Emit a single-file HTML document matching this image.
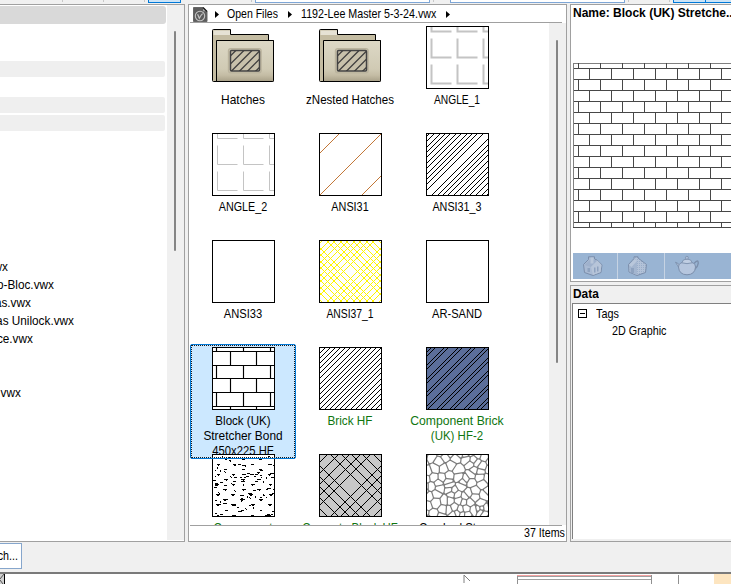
<!DOCTYPE html>
<html><head><meta charset="utf-8"><style>
html,body{margin:0;padding:0;}
body{width:731px;height:584px;overflow:hidden;position:relative;background:#f0f0f0;font-family:"Liberation Sans", sans-serif;}
.lt,.bc,.lb,.nm{position:absolute;white-space:nowrap;line-height:14px;}
.lt{font-size:12.4px;color:#000;transform:scaleX(0.95);transform-origin:100% 0;}
.bc{font-size:12.4px;color:#000;transform:scaleX(0.85);transform-origin:0 0;}
.lb{font-size:12.4px;width:120px;text-align:center;color:#000;transform-origin:60px 0;}
.nm{font-size:12.4px;font-weight:bold;color:#000;transform:scaleX(0.97);transform-origin:0 0;}
</style></head><body>
<div style="position:absolute;left:62px;top:0px;width:1px;height:2px;background:#c8c8c8"></div>
<div style="position:absolute;left:103px;top:0px;width:1px;height:2px;background:#c8c8c8"></div>
<div style="position:absolute;left:144px;top:0px;width:1px;height:2px;background:#c8c8c8"></div>
<div style="position:absolute;left:251px;top:0px;width:1px;height:2px;background:#c8c8c8"></div>
<div style="position:absolute;left:433px;top:0px;width:1px;height:2px;background:#c8c8c8"></div>
<div style="position:absolute;left:628px;top:0px;width:1px;height:2px;background:#c8c8c8"></div>
<div style="position:absolute;left:669px;top:0px;width:1px;height:2px;background:#c8c8c8"></div>
<div style="position:absolute;left:148px;top:-1px;width:31px;height:3px;background:#cce4f7;border:1px solid #0078d7;border-top:none"></div>
<div style="position:absolute;left:255px;top:-1px;width:173px;height:3px;background:#fff;border:1px solid #7ea6d6;border-top:none"></div>
<div style="position:absolute;left:450px;top:-1px;width:173px;height:3px;background:#fff;border:1px solid #7ea6d6;border-top:none"></div>
<div style="position:absolute;left:673px;top:-1px;width:31px;height:3px;background:#cce4f7;border:1px solid #0078d7;border-top:none"></div>
<div style="position:absolute;left:705px;top:-1px;width:31px;height:3px;background:#cce4f7;border:1px solid #0078d7;border-top:none"></div>
<div style="position:absolute;left:-2px;top:4px;width:187px;height:538px;background:#fff;border:1px solid #a0a0a0;box-sizing:border-box"></div>
<div style="position:absolute;left:0px;top:6px;width:166px;height:18px;background:#d9d9d9;border-radius:0 3px 3px 0"></div>
<div style="position:absolute;left:0px;top:61px;width:165px;height:16px;background:#efefef;border-radius:0 2px 2px 0"></div>
<div style="position:absolute;left:0px;top:97px;width:165px;height:16px;background:#efefef;border-radius:0 2px 2px 0"></div>
<div style="position:absolute;left:0px;top:115px;width:165px;height:16px;background:#efefef;border-radius:0 2px 2px 0"></div>
<div style="position:absolute;left:167px;top:5px;width:17px;height:535px;background:#f0f0f0"></div>
<div style="position:absolute;left:174px;top:31px;width:2px;height:220px;background:#858585;border-radius:1px"></div>
<div class="lt" style="right:723px;top:260px">.vwx</div>
<div class="lt" style="right:677px;top:278px">o-Bloc.vwx</div>
<div class="lt" style="right:700px;top:296px">as.vwx</div>
<div class="lt" style="right:657px;top:314px">as Unilock.vwx</div>
<div class="lt" style="right:698px;top:332px">ce.vwx</div>
<div class="lt" style="right:710px;top:386px">.vwx</div>
<div style="position:absolute;left:188px;top:4px;width:379px;height:538px;background:#fff;border:1px solid #a0a0a0;box-sizing:border-box"></div>
<div style="position:absolute;left:190px;top:22px;width:372px;height:1px;background:#a0a0a0"></div>
<svg style="position:absolute;left:193px;top:7px" width="15" height="15" viewBox="0 0 15 15">
<path d="M0.5 0.5 H10 L14 4.5 V14.5 H0.5 Z" fill="#5c5c5c" stroke="#666" stroke-width="1"/>
<path d="M10 0.8 V4.2 H13.6 Z" fill="#a8a8a8"/>
<path d="M10 0.5 L14 4.5" stroke="#1a1a1a" stroke-width="1.2"/>
<circle cx="7" cy="9" r="4.7" fill="none" stroke="#c4c4c4" stroke-width="1.1"/>
<path d="M4.6 7.2 L6.3 11.3 Q7.5 8.5 9.6 6.6" fill="none" stroke="#c4c4c4" stroke-width="1.2"/></svg>
<svg style="position:absolute;left:215px;top:11px" width="5" height="8" viewBox="0 0 5 8"><path d="M0 0 L4 3.5 L0 7 Z" fill="#000"/></svg>
<svg style="position:absolute;left:288px;top:11px" width="5" height="8" viewBox="0 0 5 8"><path d="M0 0 L4 3.5 L0 7 Z" fill="#000"/></svg>
<svg style="position:absolute;left:446px;top:11px" width="5" height="8" viewBox="0 0 5 8"><path d="M0 0 L4 3.5 L0 7 Z" fill="#000"/></svg>
<div class="bc" style="left:227px;top:7px;">Open Files</div>
<div class="bc" style="left:301px;top:7px;transform:scaleX(0.863)">1192-Lee Master 5-3-24.vwx</div>
<div style="position:absolute;left:549px;top:23px;width:17px;height:502px;background:#f0f0f0"></div>
<div style="position:absolute;left:556px;top:40px;width:2px;height:323px;background:#858585;border-radius:1px"></div>
<div style="position:absolute;left:189px;top:23px;width:360px;height:502px;overflow:hidden">
<div style="position:absolute;left:1px;top:321px;width:106px;height:115px;background:#cce8ff;border-radius:2px"></div>
<svg style="position:absolute;left:23px;top:3px" width="63" height="63" viewBox="0 0 63 63">
<defs><linearGradient id="fg0" x1="0" y1="0" x2="0" y2="1"><stop offset="0" stop-color="#ddd8c6"/><stop offset="0.7" stop-color="#d0cab4"/><stop offset="0.85" stop-color="#c4bca4"/><stop offset="1" stop-color="#a8a088"/></linearGradient></defs>
<path d="M0.5 4.5 Q0.5 3.5 1.5 3.5 H18.5 V8.5 H56.5 V14.5 H61.5 V54.5 Q61.5 55.5 60.5 55.5 H1.5 Q0.5 55.5 0.5 54.5 Z" fill="#c4bca2" stroke="#000" stroke-width="1"/>
<path d="M1.5 4.5 H18 V9 H1.5 Z" fill="#e6e2d4"/>
<path d="M4.5 14.5 H61.5 V54.5 Q61.5 55.5 60.5 55.5 H4.5 Z" fill="url(#fg0)" stroke="#000" stroke-width="1"/>
<rect x="15.8" y="22" width="34" height="25.5" rx="3" fill="#bab39d"/><rect x="17" y="23.2" width="31.6" height="23.1" rx="2" fill="#c9c2ad"/>
<rect x="18.5" y="24.5" width="29" height="20.5" rx="1" fill="#c8c1ab" stroke="#444" stroke-width="1.5"/>
<clipPath id="fc0"><rect x="18.5" y="24.5" width="29" height="20.5"/></clipPath>
<g clip-path="url(#fc0)" stroke="#3c3c3c" stroke-width="1.3">
<line x1="-1.7" y1="50" x2="28.3" y2="20"/><line x1="6.4" y1="50" x2="36.4" y2="20"/><line x1="14.5" y1="50" x2="44.5" y2="20"/><line x1="22.6" y1="50" x2="52.6" y2="20"/><line x1="30.7" y1="50" x2="60.7" y2="20"/><line x1="38.8" y1="50" x2="68.8" y2="20"/></g>
</svg>
<div class="lb" style="left:-6.300000000000011px;top:70px;color:#000;transform:scaleX(0.964)">Hatches</div>
<svg style="position:absolute;left:130px;top:3px" width="63" height="63" viewBox="0 0 63 63">
<defs><linearGradient id="fg1" x1="0" y1="0" x2="0" y2="1"><stop offset="0" stop-color="#ddd8c6"/><stop offset="0.7" stop-color="#d0cab4"/><stop offset="0.85" stop-color="#c4bca4"/><stop offset="1" stop-color="#a8a088"/></linearGradient></defs>
<path d="M0.5 4.5 Q0.5 3.5 1.5 3.5 H18.5 V8.5 H56.5 V14.5 H61.5 V54.5 Q61.5 55.5 60.5 55.5 H1.5 Q0.5 55.5 0.5 54.5 Z" fill="#c4bca2" stroke="#000" stroke-width="1"/>
<path d="M1.5 4.5 H18 V9 H1.5 Z" fill="#e6e2d4"/>
<path d="M4.5 14.5 H61.5 V54.5 Q61.5 55.5 60.5 55.5 H4.5 Z" fill="url(#fg1)" stroke="#000" stroke-width="1"/>
<rect x="15.8" y="22" width="34" height="25.5" rx="3" fill="#bab39d"/><rect x="17" y="23.2" width="31.6" height="23.1" rx="2" fill="#c9c2ad"/>
<rect x="18.5" y="24.5" width="29" height="20.5" rx="1" fill="#c8c1ab" stroke="#444" stroke-width="1.5"/>
<clipPath id="fc1"><rect x="18.5" y="24.5" width="29" height="20.5"/></clipPath>
<g clip-path="url(#fc1)" stroke="#3c3c3c" stroke-width="1.3">
<line x1="-1.7" y1="50" x2="28.3" y2="20"/><line x1="6.4" y1="50" x2="36.4" y2="20"/><line x1="14.5" y1="50" x2="44.5" y2="20"/><line x1="22.6" y1="50" x2="52.6" y2="20"/><line x1="30.7" y1="50" x2="60.7" y2="20"/><line x1="38.8" y1="50" x2="68.8" y2="20"/></g>
</svg>
<div class="lb" style="left:100.69999999999999px;top:70px;color:#000;transform:scaleX(0.932)">zNested Hatches</div>
<svg style="position:absolute;left:237px;top:3px" width="63" height="63" viewBox="0 0 63 63"><g ><rect width="63" height="63" fill="#fff"/><path d="M-20.5 -39.5 V-20.5 H-0.5" fill="none" stroke="#c4c4c4" stroke-width="2"/><path d="M-20.5 -13.5 V5.5 H-0.5" fill="none" stroke="#c4c4c4" stroke-width="2"/><path d="M-20.5 12.5 V31.5 H-0.5" fill="none" stroke="#c4c4c4" stroke-width="2"/><path d="M-20.5 38.5 V57.5 H-0.5" fill="none" stroke="#c4c4c4" stroke-width="2"/><path d="M5.5 -39.5 V-20.5 H25.5" fill="none" stroke="#c4c4c4" stroke-width="2"/><path d="M5.5 -13.5 V5.5 H25.5" fill="none" stroke="#c4c4c4" stroke-width="2"/><path d="M5.5 12.5 V31.5 H25.5" fill="none" stroke="#c4c4c4" stroke-width="2"/><path d="M5.5 38.5 V57.5 H25.5" fill="none" stroke="#c4c4c4" stroke-width="2"/><path d="M31.5 -39.5 V-20.5 H51.5" fill="none" stroke="#c4c4c4" stroke-width="2"/><path d="M31.5 -13.5 V5.5 H51.5" fill="none" stroke="#c4c4c4" stroke-width="2"/><path d="M31.5 12.5 V31.5 H51.5" fill="none" stroke="#c4c4c4" stroke-width="2"/><path d="M31.5 38.5 V57.5 H51.5" fill="none" stroke="#c4c4c4" stroke-width="2"/><path d="M57.5 -39.5 V-20.5 H77.5" fill="none" stroke="#c4c4c4" stroke-width="2"/><path d="M57.5 -13.5 V5.5 H77.5" fill="none" stroke="#c4c4c4" stroke-width="2"/><path d="M57.5 12.5 V31.5 H77.5" fill="none" stroke="#c4c4c4" stroke-width="2"/><path d="M57.5 38.5 V57.5 H77.5" fill="none" stroke="#c4c4c4" stroke-width="2"/></g><rect x="0.5" y="0.5" width="62" height="62" fill="none" stroke="#000" stroke-width="1" shape-rendering="crispEdges"/></svg>
<div class="lb" style="left:207.7px;top:70px;color:#000;transform:scaleX(0.825)">ANGLE_1</div>
<svg style="position:absolute;left:23px;top:110px" width="63" height="63" viewBox="0 0 63 63"><g ><rect width="63" height="63" fill="#fff"/><path d="M-20.5 -39.5 V-20.5 H-0.5" fill="none" stroke="#c4c4c4" stroke-width="1"/><path d="M-20.5 -13.5 V5.5 H-0.5" fill="none" stroke="#c4c4c4" stroke-width="1"/><path d="M-20.5 12.5 V31.5 H-0.5" fill="none" stroke="#c4c4c4" stroke-width="1"/><path d="M-20.5 38.5 V57.5 H-0.5" fill="none" stroke="#c4c4c4" stroke-width="1"/><path d="M5.5 -39.5 V-20.5 H25.5" fill="none" stroke="#c4c4c4" stroke-width="1"/><path d="M5.5 -13.5 V5.5 H25.5" fill="none" stroke="#c4c4c4" stroke-width="1"/><path d="M5.5 12.5 V31.5 H25.5" fill="none" stroke="#c4c4c4" stroke-width="1"/><path d="M5.5 38.5 V57.5 H25.5" fill="none" stroke="#c4c4c4" stroke-width="1"/><path d="M31.5 -39.5 V-20.5 H51.5" fill="none" stroke="#c4c4c4" stroke-width="1"/><path d="M31.5 -13.5 V5.5 H51.5" fill="none" stroke="#c4c4c4" stroke-width="1"/><path d="M31.5 12.5 V31.5 H51.5" fill="none" stroke="#c4c4c4" stroke-width="1"/><path d="M31.5 38.5 V57.5 H51.5" fill="none" stroke="#c4c4c4" stroke-width="1"/><path d="M57.5 -39.5 V-20.5 H77.5" fill="none" stroke="#c4c4c4" stroke-width="1"/><path d="M57.5 -13.5 V5.5 H77.5" fill="none" stroke="#c4c4c4" stroke-width="1"/><path d="M57.5 12.5 V31.5 H77.5" fill="none" stroke="#c4c4c4" stroke-width="1"/><path d="M57.5 38.5 V57.5 H77.5" fill="none" stroke="#c4c4c4" stroke-width="1"/></g><rect x="0.5" y="0.5" width="62" height="62" fill="none" stroke="#000" stroke-width="1" shape-rendering="crispEdges"/></svg>
<div class="lb" style="left:-6.300000000000011px;top:177px;color:#000;transform:scaleX(0.867)">ANGLE_2</div>
<svg style="position:absolute;left:130px;top:110px" width="63" height="63" viewBox="0 0 63 63"><g shape-rendering="crispEdges"><rect width="63" height="63" fill="#fff"/><line x1="23" y1="-2" x2="-2" y2="23" stroke="#c27636" stroke-width="1"/><line x1="65" y1="-2" x2="-2" y2="65" stroke="#c27636" stroke-width="1"/><line x1="107" y1="-2" x2="-2" y2="107" stroke="#c27636" stroke-width="1"/></g><rect x="0.5" y="0.5" width="62" height="62" fill="none" stroke="#000" stroke-width="1" shape-rendering="crispEdges"/></svg>
<div class="lb" style="left:100.69999999999999px;top:177px;color:#000;transform:scaleX(0.874)">ANSI31</div>
<svg style="position:absolute;left:237px;top:110px" width="63" height="63" viewBox="0 0 63 63"><g shape-rendering="crispEdges"><rect width="63" height="63" fill="#fff"/><line x1="60" y1="-2" x2="-2" y2="60" stroke="#000" stroke-width="1"/><line x1="54" y1="-2" x2="-2" y2="54" stroke="#000" stroke-width="1"/><line x1="49" y1="-2" x2="-2" y2="49" stroke="#000" stroke-width="1"/><line x1="44" y1="-2" x2="-2" y2="44" stroke="#000" stroke-width="1"/><line x1="38" y1="-2" x2="-2" y2="38" stroke="#000" stroke-width="1"/><line x1="33" y1="-2" x2="-2" y2="33" stroke="#000" stroke-width="1"/><line x1="27" y1="-2" x2="-2" y2="27" stroke="#000" stroke-width="1"/><line x1="22" y1="-2" x2="-2" y2="22" stroke="#000" stroke-width="1"/><line x1="17" y1="-2" x2="-2" y2="17" stroke="#000" stroke-width="1"/><line x1="11" y1="-2" x2="-2" y2="11" stroke="#000" stroke-width="1"/><line x1="6" y1="-2" x2="-2" y2="6" stroke="#000" stroke-width="1"/><line x1="70" y1="-2" x2="-2" y2="70" stroke="#000" stroke-width="1"/><line x1="76" y1="-2" x2="-2" y2="76" stroke="#000" stroke-width="1"/><line x1="81" y1="-2" x2="-2" y2="81" stroke="#000" stroke-width="1"/><line x1="86" y1="-2" x2="-2" y2="86" stroke="#000" stroke-width="1"/><line x1="92" y1="-2" x2="-2" y2="92" stroke="#000" stroke-width="1"/><line x1="98" y1="-2" x2="-2" y2="98" stroke="#000" stroke-width="1"/><line x1="103" y1="-2" x2="-2" y2="103" stroke="#000" stroke-width="1"/><line x1="108" y1="-2" x2="-2" y2="108" stroke="#000" stroke-width="1"/><line x1="114" y1="-2" x2="-2" y2="114" stroke="#000" stroke-width="1"/><line x1="120" y1="-2" x2="-2" y2="120" stroke="#000" stroke-width="1"/><line x1="125" y1="-2" x2="-2" y2="125" stroke="#000" stroke-width="1"/></g><rect x="0.5" y="0.5" width="62" height="62" fill="none" stroke="#000" stroke-width="1" shape-rendering="crispEdges"/></svg>
<div class="lb" style="left:207.7px;top:177px;color:#000;transform:scaleX(0.87)">ANSI31_3</div>
<svg style="position:absolute;left:23px;top:217px" width="63" height="63" viewBox="0 0 63 63"><g shape-rendering="crispEdges"><rect width="63" height="63" fill="#fff"/></g><rect x="0.5" y="0.5" width="62" height="62" fill="none" stroke="#000" stroke-width="1" shape-rendering="crispEdges"/></svg>
<div class="lb" style="left:-6.300000000000011px;top:284px;color:#000;transform:scaleX(0.9)">ANSI33</div>
<svg style="position:absolute;left:130px;top:217px" width="63" height="63" viewBox="0 0 63 63"><g shape-rendering="crispEdges"><rect width="63" height="63" fill="#fff"/><line x1="72" y1="-2" x2="-2" y2="72" stroke="#fff500" stroke-width="1"/><line x1="58" y1="-2" x2="-2" y2="58" stroke="#fff500" stroke-width="1"/><line x1="5" y1="-2" x2="77" y2="70" stroke="#fff500" stroke-width="1"/><line x1="-9" y1="-2" x2="63" y2="70" stroke="#fff500" stroke-width="1"/><line x1="78" y1="-2" x2="-2" y2="78" stroke="#fff500" stroke-width="1"/><line x1="52" y1="-2" x2="-2" y2="52" stroke="#fff500" stroke-width="1"/><line x1="11" y1="-2" x2="83" y2="70" stroke="#fff500" stroke-width="1"/><line x1="-15" y1="-2" x2="57" y2="70" stroke="#fff500" stroke-width="1"/><line x1="85" y1="-2" x2="-2" y2="85" stroke="#fff500" stroke-width="1"/><line x1="45" y1="-2" x2="-2" y2="45" stroke="#fff500" stroke-width="1"/><line x1="18" y1="-2" x2="90" y2="70" stroke="#fff500" stroke-width="1"/><line x1="-22" y1="-2" x2="50" y2="70" stroke="#fff500" stroke-width="1"/><line x1="91" y1="-2" x2="-2" y2="91" stroke="#fff500" stroke-width="1"/><line x1="39" y1="-2" x2="-2" y2="39" stroke="#fff500" stroke-width="1"/><line x1="24" y1="-2" x2="96" y2="70" stroke="#fff500" stroke-width="1"/><line x1="-28" y1="-2" x2="44" y2="70" stroke="#fff500" stroke-width="1"/><line x1="98" y1="-2" x2="-2" y2="98" stroke="#fff500" stroke-width="1"/><line x1="32" y1="-2" x2="-2" y2="32" stroke="#fff500" stroke-width="1"/><line x1="31" y1="-2" x2="103" y2="70" stroke="#fff500" stroke-width="1"/><line x1="-35" y1="-2" x2="37" y2="70" stroke="#fff500" stroke-width="1"/><line x1="104" y1="-2" x2="-2" y2="104" stroke="#fff500" stroke-width="1"/><line x1="26" y1="-2" x2="-2" y2="26" stroke="#fff500" stroke-width="1"/><line x1="37" y1="-2" x2="109" y2="70" stroke="#fff500" stroke-width="1"/><line x1="-41" y1="-2" x2="31" y2="70" stroke="#fff500" stroke-width="1"/><line x1="111" y1="-2" x2="-2" y2="111" stroke="#fff500" stroke-width="1"/><line x1="19" y1="-2" x2="-2" y2="19" stroke="#fff500" stroke-width="1"/><line x1="44" y1="-2" x2="116" y2="70" stroke="#fff500" stroke-width="1"/><line x1="-48" y1="-2" x2="24" y2="70" stroke="#fff500" stroke-width="1"/><line x1="117" y1="-2" x2="-2" y2="117" stroke="#fff500" stroke-width="1"/><line x1="13" y1="-2" x2="-2" y2="13" stroke="#fff500" stroke-width="1"/><line x1="50" y1="-2" x2="122" y2="70" stroke="#fff500" stroke-width="1"/><line x1="-54" y1="-2" x2="18" y2="70" stroke="#fff500" stroke-width="1"/><line x1="124" y1="-2" x2="-2" y2="124" stroke="#fff500" stroke-width="1"/><line x1="6" y1="-2" x2="-2" y2="6" stroke="#fff500" stroke-width="1"/><line x1="57" y1="-2" x2="129" y2="70" stroke="#fff500" stroke-width="1"/><line x1="-61" y1="-2" x2="11" y2="70" stroke="#fff500" stroke-width="1"/></g><rect x="0.5" y="0.5" width="62" height="62" fill="none" stroke="#000" stroke-width="1" shape-rendering="crispEdges"/></svg>
<div class="lb" style="left:100.69999999999999px;top:284px;color:#000;transform:scaleX(0.836)">ANSI37_1</div>
<svg style="position:absolute;left:237px;top:217px" width="63" height="63" viewBox="0 0 63 63"><g shape-rendering="crispEdges"><rect width="63" height="63" fill="#fff"/></g><rect x="0.5" y="0.5" width="62" height="62" fill="none" stroke="#000" stroke-width="1" shape-rendering="crispEdges"/></svg>
<div class="lb" style="left:207.7px;top:284px;color:#000;transform:scaleX(0.896)">AR-SAND</div>
<svg style="position:absolute;left:23px;top:324px" width="63" height="63" viewBox="0 0 63 63"><g ><rect width="63" height="63" fill="#fff"/><line x1="0" y1="4.5" x2="63" y2="4.5" stroke="#000" stroke-width="1.15"/><line x1="0" y1="18.5" x2="63" y2="18.5" stroke="#000" stroke-width="1.15"/><line x1="0" y1="31.5" x2="63" y2="31.5" stroke="#000" stroke-width="1.15"/><line x1="0" y1="45.5" x2="63" y2="45.5" stroke="#000" stroke-width="1.15"/><line x1="0" y1="59.5" x2="63" y2="59.5" stroke="#000" stroke-width="1.15"/><line x1="4.5" y1="0" x2="4.5" y2="4.5" stroke="#000" stroke-width="1.15"/><line x1="31.5" y1="0" x2="31.5" y2="4.5" stroke="#000" stroke-width="1.15"/><line x1="58.5" y1="0" x2="58.5" y2="4.5" stroke="#000" stroke-width="1.15"/><line x1="18.5" y1="4.5" x2="18.5" y2="18.5" stroke="#000" stroke-width="1.15"/><line x1="44.5" y1="4.5" x2="44.5" y2="18.5" stroke="#000" stroke-width="1.15"/><line x1="4.5" y1="18.5" x2="4.5" y2="31.5" stroke="#000" stroke-width="1.15"/><line x1="31.5" y1="18.5" x2="31.5" y2="31.5" stroke="#000" stroke-width="1.15"/><line x1="58.5" y1="18.5" x2="58.5" y2="31.5" stroke="#000" stroke-width="1.15"/><line x1="18.5" y1="31.5" x2="18.5" y2="45.5" stroke="#000" stroke-width="1.15"/><line x1="44.5" y1="31.5" x2="44.5" y2="45.5" stroke="#000" stroke-width="1.15"/><line x1="4.5" y1="45.5" x2="4.5" y2="59.5" stroke="#000" stroke-width="1.15"/><line x1="31.5" y1="45.5" x2="31.5" y2="59.5" stroke="#000" stroke-width="1.15"/><line x1="58.5" y1="45.5" x2="58.5" y2="59.5" stroke="#000" stroke-width="1.15"/><line x1="18.5" y1="59.5" x2="18.5" y2="63" stroke="#000" stroke-width="1.15"/><line x1="44.5" y1="59.5" x2="44.5" y2="63" stroke="#000" stroke-width="1.15"/></g><rect x="0.5" y="0.5" width="62" height="62" fill="none" stroke="#000" stroke-width="1" shape-rendering="crispEdges"/></svg>
<div class="lb" style="left:-6.300000000000011px;top:391px;color:#000;transform:scaleX(0.934)">Block (UK)</div>
<div class="lb" style="left:-6.300000000000011px;top:406px;color:#000;transform:scaleX(0.958)">Stretcher Bond</div>
<div class="lb" style="left:-6.300000000000011px;top:421px;color:#000;transform:scaleX(0.909)">450x225 HF</div>
<svg style="position:absolute;left:130px;top:324px" width="63" height="63" viewBox="0 0 63 63"><g shape-rendering="crispEdges"><rect width="63" height="63" fill="#fff"/><line x1="4" y1="-2" x2="-2" y2="4" stroke="#000" stroke-width="1"/><line x1="9" y1="-2" x2="-2" y2="9" stroke="#000" stroke-width="1"/><line x1="14" y1="-2" x2="-2" y2="14" stroke="#000" stroke-width="1"/><line x1="19" y1="-2" x2="-2" y2="19" stroke="#000" stroke-width="1"/><line x1="24" y1="-2" x2="-2" y2="24" stroke="#000" stroke-width="1"/><line x1="29" y1="-2" x2="-2" y2="29" stroke="#000" stroke-width="1"/><line x1="34" y1="-2" x2="-2" y2="34" stroke="#000" stroke-width="1"/><line x1="40" y1="-2" x2="-2" y2="40" stroke="#000" stroke-width="1"/><line x1="45" y1="-2" x2="-2" y2="45" stroke="#000" stroke-width="1"/><line x1="50" y1="-2" x2="-2" y2="50" stroke="#000" stroke-width="1"/><line x1="55" y1="-2" x2="-2" y2="55" stroke="#000" stroke-width="1"/><line x1="60" y1="-2" x2="-2" y2="60" stroke="#000" stroke-width="1"/><line x1="65" y1="-2" x2="-2" y2="65" stroke="#000" stroke-width="1"/><line x1="70" y1="-2" x2="-2" y2="70" stroke="#000" stroke-width="1"/><line x1="75" y1="-2" x2="-2" y2="75" stroke="#000" stroke-width="1"/><line x1="80" y1="-2" x2="-2" y2="80" stroke="#000" stroke-width="1"/><line x1="85" y1="-2" x2="-2" y2="85" stroke="#000" stroke-width="1"/><line x1="90" y1="-2" x2="-2" y2="90" stroke="#000" stroke-width="1"/><line x1="96" y1="-2" x2="-2" y2="96" stroke="#000" stroke-width="1"/><line x1="101" y1="-2" x2="-2" y2="101" stroke="#000" stroke-width="1"/><line x1="106" y1="-2" x2="-2" y2="106" stroke="#000" stroke-width="1"/><line x1="111" y1="-2" x2="-2" y2="111" stroke="#000" stroke-width="1"/><line x1="116" y1="-2" x2="-2" y2="116" stroke="#000" stroke-width="1"/><line x1="121" y1="-2" x2="-2" y2="121" stroke="#000" stroke-width="1"/><line x1="126" y1="-2" x2="-2" y2="126" stroke="#000" stroke-width="1"/><line x1="131" y1="-2" x2="-2" y2="131" stroke="#000" stroke-width="1"/></g><rect x="0.5" y="0.5" width="62" height="62" fill="none" stroke="#000" stroke-width="1" shape-rendering="crispEdges"/></svg>
<div class="lb" style="left:100.69999999999999px;top:391px;color:#0f760f;transform:scaleX(0.948)">Brick HF</div>
<svg style="position:absolute;left:237px;top:324px" width="63" height="63" viewBox="0 0 63 63"><g shape-rendering="crispEdges"><rect width="63" height="63" fill="#5b6e9a"/><line x1="8" y1="-2" x2="-2" y2="8" stroke="#000" stroke-width="1"/><line x1="12" y1="-2" x2="-2" y2="12" stroke="#000" stroke-width="1"/><line x1="21" y1="-2" x2="-2" y2="21" stroke="#000" stroke-width="1"/><line x1="25" y1="-2" x2="-2" y2="25" stroke="#000" stroke-width="1"/><line x1="35" y1="-2" x2="-2" y2="35" stroke="#000" stroke-width="1"/><line x1="39" y1="-2" x2="-2" y2="39" stroke="#000" stroke-width="1"/><line x1="48" y1="-2" x2="-2" y2="48" stroke="#000" stroke-width="1"/><line x1="52" y1="-2" x2="-2" y2="52" stroke="#000" stroke-width="1"/><line x1="62" y1="-2" x2="-2" y2="62" stroke="#000" stroke-width="1"/><line x1="66" y1="-2" x2="-2" y2="66" stroke="#000" stroke-width="1"/><line x1="75" y1="-2" x2="-2" y2="75" stroke="#000" stroke-width="1"/><line x1="79" y1="-2" x2="-2" y2="79" stroke="#000" stroke-width="1"/><line x1="88" y1="-2" x2="-2" y2="88" stroke="#000" stroke-width="1"/><line x1="92" y1="-2" x2="-2" y2="92" stroke="#000" stroke-width="1"/><line x1="102" y1="-2" x2="-2" y2="102" stroke="#000" stroke-width="1"/><line x1="106" y1="-2" x2="-2" y2="106" stroke="#000" stroke-width="1"/><line x1="115" y1="-2" x2="-2" y2="115" stroke="#000" stroke-width="1"/><line x1="119" y1="-2" x2="-2" y2="119" stroke="#000" stroke-width="1"/><line x1="129" y1="-2" x2="-2" y2="129" stroke="#000" stroke-width="1"/><line x1="133" y1="-2" x2="-2" y2="133" stroke="#000" stroke-width="1"/></g><rect x="0.5" y="0.5" width="62" height="62" fill="none" stroke="#000" stroke-width="1" shape-rendering="crispEdges"/></svg>
<div class="lb" style="left:207.7px;top:391px;color:#0f760f;transform:scaleX(0.983)">Component Brick</div>
<div class="lb" style="left:207.7px;top:406px;color:#0f760f;transform:scaleX(0.927)">(UK) HF-2</div>
<svg style="position:absolute;left:23px;top:431px" width="63" height="63" viewBox="0 0 63 63"><g shape-rendering="crispEdges"><rect width="63" height="63" fill="#fff"/><path d="M11.7 4.5 H16.7 L14.2 6.5 Z" fill="#000"/><path d="M29.0 4.5 H34.0 L31.5 6.5 Z" fill="#000"/><path d="M46.1 4.5 H51.1 L48.6 6.5 Z" fill="#000"/><path d="M3.9 9.6 H8.9 L6.4 11.6 Z" fill="#000"/><path d="M20.0 9.6 H25.0 L22.5 11.6 Z" fill="#000"/><path d="M38.3 9.6 H43.3 L40.8 11.6 Z" fill="#000"/><path d="M54.6 9.6 H59.6 L57.1 11.6 Z" fill="#000"/><path d="M11.4 14.7 H16.4 L13.9 16.7 Z" fill="#000"/><path d="M29.4 14.7 H34.4 L31.9 16.7 Z" fill="#000"/><path d="M45.8 14.7 H50.8 L48.3 16.7 Z" fill="#000"/><path d="M3.8 19.8 H8.8 L6.3 21.8 Z" fill="#000"/><path d="M18.7 19.8 H23.7 L21.2 21.8 Z" fill="#000"/><path d="M37.4 19.8 H42.4 L39.9 21.8 Z" fill="#000"/><path d="M55.0 19.8 H60.0 L57.5 21.8 Z" fill="#000"/><path d="M11.6 24.9 H16.6 L14.1 26.9 Z" fill="#000"/><path d="M28.6 24.9 H33.6 L31.1 26.9 Z" fill="#000"/><path d="M44.5 24.9 H49.5 L47.0 26.9 Z" fill="#000"/><path d="M2.4 30.0 H7.4 L4.9 32.0 Z" fill="#000"/><path d="M19.1 30.0 H24.1 L21.6 32.0 Z" fill="#000"/><path d="M38.3 30.0 H43.3 L40.8 32.0 Z" fill="#000"/><path d="M56.0 30.0 H61.0 L58.5 32.0 Z" fill="#000"/><path d="M10.8 35.1 H15.8 L13.3 37.1 Z" fill="#000"/><path d="M29.1 35.1 H34.1 L31.6 37.1 Z" fill="#000"/><path d="M44.8 35.1 H49.8 L47.3 37.1 Z" fill="#000"/><path d="M3.2 40.2 H8.2 L5.7 42.2 Z" fill="#000"/><path d="M18.8 40.2 H23.8 L21.3 42.2 Z" fill="#000"/><path d="M36.5 40.2 H41.5 L39.0 42.2 Z" fill="#000"/><path d="M56.2 40.2 H61.2 L58.7 42.2 Z" fill="#000"/><path d="M10.9 45.3 H15.9 L13.4 47.3 Z" fill="#000"/><path d="M27.9 45.3 H32.9 L30.4 47.3 Z" fill="#000"/><path d="M46.5 45.3 H51.5 L49.0 47.3 Z" fill="#000"/><path d="M3.7 50.4 H8.7 L6.2 52.4 Z" fill="#000"/><path d="M19.1 50.4 H24.1 L21.6 52.4 Z" fill="#000"/><path d="M38.4 50.4 H43.4 L40.9 52.4 Z" fill="#000"/><path d="M55.6 50.4 H60.6 L58.1 52.4 Z" fill="#000"/><path d="M11.9 55.5 H16.9 L14.4 57.5 Z" fill="#000"/><path d="M27.9 55.5 H32.9 L30.4 57.5 Z" fill="#000"/><path d="M46.4 55.5 H51.4 L48.9 57.5 Z" fill="#000"/><path d="M3.4 60.6 H8.4 L5.9 62.6 Z" fill="#000"/><path d="M20.4 60.6 H25.4 L22.9 62.6 Z" fill="#000"/><path d="M38.3 60.6 H43.3 L40.8 62.6 Z" fill="#000"/><path d="M55.1 60.6 H60.1 L57.6 62.6 Z" fill="#000"/><rect x="23" y="11" width="1" height="1" fill="#000"/><rect x="21" y="51" width="3" height="1" fill="#000"/><rect x="42" y="22" width="2" height="1" fill="#000"/><rect x="30" y="20" width="4" height="1" fill="#000"/><rect x="12" y="17" width="1" height="1" fill="#000"/><rect x="13" y="18" width="1" height="1" fill="#000"/><rect x="59" y="23" width="3" height="1" fill="#000"/><rect x="49" y="23" width="1" height="1" fill="#000"/><rect x="29" y="44" width="2" height="1" fill="#000"/><rect x="8" y="16" width="1" height="2" fill="#000"/><rect x="22" y="23" width="3" height="1" fill="#000"/><rect x="8" y="47" width="1" height="2" fill="#000"/><rect x="3" y="59" width="2" height="1" fill="#000"/><rect x="32" y="23" width="2" height="1" fill="#000"/><rect x="57" y="34" width="2" height="1" fill="#000"/><rect x="20" y="50" width="4" height="1" fill="#000"/><rect x="43" y="62" width="1" height="1" fill="#000"/><rect x="6" y="38" width="1" height="1" fill="#000"/><rect x="7" y="39" width="1" height="1" fill="#000"/><rect x="3" y="46" width="2" height="1" fill="#000"/><rect x="29" y="27" width="4" height="1" fill="#000"/><rect x="3" y="31" width="1" height="1" fill="#000"/><rect x="61" y="35" width="3" height="1" fill="#000"/><rect x="8" y="28" width="3" height="1" fill="#000"/><rect x="19" y="29" width="1" height="1" fill="#000"/><rect x="20" y="30" width="1" height="1" fill="#000"/><rect x="53" y="61" width="3" height="1" fill="#000"/><rect x="43" y="20" width="3" height="1" fill="#000"/><rect x="26" y="10" width="3" height="1" fill="#000"/><rect x="60" y="39" width="2" height="1" fill="#000"/><rect x="12" y="31" width="3" height="1" fill="#000"/><rect x="54" y="23" width="1" height="2" fill="#000"/><rect x="43" y="42" width="1" height="2" fill="#000"/><rect x="35" y="42" width="1" height="2" fill="#000"/><rect x="48" y="43" width="2" height="1" fill="#000"/><rect x="41" y="36" width="3" height="1" fill="#000"/><rect x="48" y="21" width="2" height="1" fill="#000"/><rect x="51" y="40" width="1" height="2" fill="#000"/><rect x="18" y="22" width="1" height="1" fill="#000"/><rect x="19" y="23" width="1" height="1" fill="#000"/><rect x="26" y="57" width="4" height="1" fill="#000"/><rect x="28" y="23" width="2" height="1" fill="#000"/><rect x="33" y="11" width="1" height="2" fill="#000"/><rect x="18" y="6" width="1" height="2" fill="#000"/><rect x="11" y="49" width="4" height="1" fill="#000"/><rect x="58" y="19" width="4" height="1" fill="#000"/><rect x="18" y="62" width="3" height="1" fill="#000"/><rect x="28" y="41" width="4" height="1" fill="#000"/><rect x="12" y="45" width="1" height="1" fill="#000"/><rect x="13" y="46" width="1" height="1" fill="#000"/><rect x="61" y="11" width="1" height="1" fill="#000"/><rect x="62" y="12" width="1" height="1" fill="#000"/><rect x="8" y="60" width="3" height="1" fill="#000"/><rect x="3" y="29" width="3" height="1" fill="#000"/><rect x="5" y="13" width="1" height="2" fill="#000"/><rect x="1" y="26" width="3" height="1" fill="#000"/><rect x="54" y="43" width="1" height="1" fill="#000"/><rect x="35" y="19" width="3" height="1" fill="#000"/><rect x="22" y="36" width="1" height="1" fill="#000"/><rect x="23" y="37" width="1" height="1" fill="#000"/><rect x="51" y="27" width="1" height="2" fill="#000"/><rect x="30" y="11" width="3" height="1" fill="#000"/><rect x="59" y="60" width="2" height="1" fill="#000"/><rect x="51" y="41" width="2" height="1" fill="#000"/><rect x="36" y="39" width="4" height="1" fill="#000"/><rect x="54" y="35" width="2" height="1" fill="#000"/><rect x="31" y="30" width="1" height="2" fill="#000"/><rect x="60" y="57" width="2" height="1" fill="#000"/><rect x="46" y="19" width="1" height="1" fill="#000"/><rect x="20" y="61" width="2" height="1" fill="#000"/><rect x="10" y="2" width="1" height="2" fill="#000"/><rect x="16" y="3" width="3" height="1" fill="#000"/><rect x="2" y="33" width="3" height="1" fill="#000"/><rect x="49" y="16" width="2" height="1" fill="#000"/><rect x="45" y="18" width="3" height="1" fill="#000"/><rect x="33" y="54" width="1" height="1" fill="#000"/><rect x="34" y="55" width="1" height="1" fill="#000"/><rect x="56" y="2" width="2" height="1" fill="#000"/><rect x="34" y="22" width="3" height="1" fill="#000"/><rect x="3" y="22" width="1" height="1" fill="#000"/><rect x="3" y="16" width="1" height="1" fill="#000"/><rect x="55" y="34" width="3" height="1" fill="#000"/><rect x="37" y="43" width="1" height="1" fill="#000"/><rect x="38" y="44" width="1" height="1" fill="#000"/><rect x="41" y="53" width="1" height="2" fill="#000"/><rect x="25" y="53" width="2" height="1" fill="#000"/><rect x="29" y="47" width="1" height="1" fill="#000"/><rect x="43" y="27" width="3" height="1" fill="#000"/><rect x="57" y="10" width="3" height="1" fill="#000"/><rect x="55" y="60" width="3" height="1" fill="#000"/><rect x="37" y="51" width="2" height="1" fill="#000"/><rect x="17" y="6" width="1" height="1" fill="#000"/><rect x="21" y="27" width="3" height="1" fill="#000"/><rect x="44" y="4" width="1" height="1" fill="#000"/></g><rect x="0.5" y="0.5" width="62" height="62" fill="none" stroke="#000" stroke-width="1" shape-rendering="crispEdges"/></svg>
<svg style="position:absolute;left:130px;top:431px" width="63" height="63" viewBox="0 0 63 63"><g shape-rendering="crispEdges"><rect width="63" height="63" fill="#c8c8c8"/><line x1="76" y1="-2" x2="-2" y2="76" stroke="#000" stroke-width="1"/><line x1="54" y1="-2" x2="-2" y2="54" stroke="#000" stroke-width="1"/><line x1="9" y1="-2" x2="81" y2="70" stroke="#000" stroke-width="1"/><line x1="-13" y1="-2" x2="59" y2="70" stroke="#000" stroke-width="1"/><line x1="86" y1="-2" x2="-2" y2="86" stroke="#000" stroke-width="1"/><line x1="44" y1="-2" x2="-2" y2="44" stroke="#000" stroke-width="1"/><line x1="20" y1="-2" x2="92" y2="70" stroke="#000" stroke-width="1"/><line x1="-24" y1="-2" x2="48" y2="70" stroke="#000" stroke-width="1"/><line x1="97" y1="-2" x2="-2" y2="97" stroke="#000" stroke-width="1"/><line x1="33" y1="-2" x2="-2" y2="33" stroke="#000" stroke-width="1"/><line x1="30" y1="-2" x2="102" y2="70" stroke="#000" stroke-width="1"/><line x1="-34" y1="-2" x2="38" y2="70" stroke="#000" stroke-width="1"/><line x1="108" y1="-2" x2="-2" y2="108" stroke="#000" stroke-width="1"/><line x1="22" y1="-2" x2="-2" y2="22" stroke="#000" stroke-width="1"/><line x1="41" y1="-2" x2="113" y2="70" stroke="#000" stroke-width="1"/><line x1="-45" y1="-2" x2="27" y2="70" stroke="#000" stroke-width="1"/><line x1="119" y1="-2" x2="-2" y2="119" stroke="#000" stroke-width="1"/><line x1="11" y1="-2" x2="-2" y2="11" stroke="#000" stroke-width="1"/><line x1="52" y1="-2" x2="124" y2="70" stroke="#000" stroke-width="1"/><line x1="-56" y1="-2" x2="16" y2="70" stroke="#000" stroke-width="1"/><line x1="130" y1="-2" x2="-2" y2="130" stroke="#000" stroke-width="1"/><line x1="0" y1="-2" x2="-2" y2="0" stroke="#000" stroke-width="1"/><line x1="62" y1="-2" x2="134" y2="70" stroke="#000" stroke-width="1"/><line x1="-66" y1="-2" x2="6" y2="70" stroke="#000" stroke-width="1"/></g><rect x="0.5" y="0.5" width="62" height="62" fill="none" stroke="#000" stroke-width="1" shape-rendering="crispEdges"/></svg>
<svg style="position:absolute;left:237px;top:431px" width="63" height="63" viewBox="0 0 63 63"><g ><rect width="63" height="63" fill="#7c7c7c"/><path d="M27.0 33.5 L26.9 33.5 L26.9 33.6 L26.8 33.7 L26.8 33.8 L26.7 33.9 L26.7 34.0 L26.6 34.1 L26.2 36.5 L26.2 36.6 L26.2 36.7 L26.2 36.8 L26.2 36.9 L26.2 36.9 L26.3 37.0 L26.3 37.1 L26.4 37.2 L26.4 37.3 L26.5 37.4 L26.5 37.4 L26.6 37.5 L26.7 37.5 L28.1 38.3 L28.1 38.3 L28.2 38.3 L28.3 38.4 L28.4 38.4 L28.5 38.4 L28.6 38.4 L28.7 38.4 L28.8 38.3 L28.9 38.3 L29.0 38.3 L29.1 38.2 L29.2 38.2 L31.1 36.6 L31.1 36.5 L31.2 36.5 L31.3 36.4 L31.3 36.3 L31.3 36.2 L31.4 36.1 L31.4 36.0 L31.4 35.9 L31.4 35.8 L31.4 35.7 L31.4 35.6 L31.4 35.5 L31.3 35.4 L31.3 35.3 L29.7 32.7 L29.7 32.7 L29.6 32.6 L29.6 32.5 L29.5 32.4 L29.4 32.4 L29.3 32.3 L29.2 32.3 L29.1 32.3 L29.0 32.3 L28.9 32.2 L28.8 32.2 L28.7 32.3 L28.6 32.3 L28.5 32.3 L28.4 32.4 L28.3 32.4 L28.3 32.5 L27.0 33.5 Z" fill="#fff"/><path d="M22.5 61.6 L22.4 61.6 L22.3 61.7 L22.3 61.8 L22.2 61.9 L22.2 62.0 L22.2 62.1 L22.2 62.2 L22.2 62.3 L22.2 62.4 L22.2 62.4 L22.2 62.5 L22.2 62.6 L22.2 62.7 L22.3 62.8 L22.3 62.9 L22.4 63.0 L22.5 63.0 L22.5 63.1 L22.6 63.2 L25.9 65.2 L26.0 65.3 L26.1 65.3 L26.2 65.4 L26.3 65.4 L26.4 65.4 L26.4 65.4 L29.3 65.4 L29.5 65.4 L29.5 65.4 L29.6 65.4 L29.6 65.3 L29.7 65.3 L29.8 65.3 L29.9 65.2 L30.0 65.1 L30.1 65.1 L30.1 65.0 L30.2 64.9 L30.2 64.8 L30.3 64.7 L30.3 64.6 L30.3 64.5 L30.3 64.4 L30.3 64.3 L30.3 64.2 L30.3 64.1 L30.2 64.0 L28.0 58.4 L27.9 58.3 L27.9 58.2 L27.8 58.1 L27.7 58.0 L27.7 58.0 L27.6 57.9 L27.5 57.9 L27.4 57.8 L27.3 57.8 L27.2 57.8 L27.2 57.7 L27.1 57.7 L27.0 57.7 L26.9 57.7 L26.8 57.8 L26.7 57.8 L26.6 57.8 L26.5 57.9 L26.4 57.9 L26.4 58.0 L22.5 61.6 Z" fill="#fff"/><path d="M8.1 35.3 L8.1 35.2 L8.2 35.2 L8.3 35.1 L8.3 35.0 L8.4 34.9 L8.4 34.8 L8.5 34.7 L8.5 34.6 L8.8 32.8 L8.9 32.7 L8.9 32.6 L8.9 32.5 L8.8 32.4 L8.8 32.3 L8.8 32.2 L7.5 29.3 L7.4 29.2 L7.4 29.2 L7.3 29.1 L7.2 29.0 L7.2 29.0 L7.1 28.9 L7.0 28.9 L6.9 28.8 L6.8 28.8 L4.9 28.2 L4.8 28.2 L4.6 28.2 L4.5 28.2 L4.4 28.2 L4.3 28.2 L4.2 28.2 L4.1 28.2 L4.1 28.3 L4.0 28.4 L3.2 28.9 L3.1 29.0 L3.0 29.1 L3.0 29.1 L2.9 29.2 L2.9 29.3 L2.8 29.4 L2.8 29.5 L2.8 29.6 L2.8 29.7 L2.8 29.8 L2.8 35.3 L2.8 35.4 L2.8 35.5 L2.8 35.6 L2.9 35.6 L2.9 35.7 L3.0 35.8 L3.2 36.2 L3.3 36.3 L3.4 36.4 L3.4 36.4 L3.5 36.5 L3.6 36.5 L3.7 36.6 L3.8 36.6 L3.9 36.6 L5.0 36.9 L5.1 36.9 L5.2 36.9 L5.3 36.9 L5.4 36.9 L5.5 36.9 L5.6 36.9 L5.7 36.8 L5.8 36.8 L8.1 35.3 Z" fill="#fff"/><path d="M43.6 4.2 L43.6 4.1 L43.6 4.0 L43.6 3.9 L43.6 3.8 L43.6 3.7 L43.5 3.6 L43.5 3.5 L43.5 3.5 L43.4 3.4 L43.3 3.3 L43.3 3.2 L43.2 3.2 L43.1 3.1 L43.0 3.1 L42.9 3.1 L42.8 3.0 L42.7 3.0 L42.6 3.0 L42.5 3.0 L42.4 3.0 L36.7 4.2 L36.6 4.2 L36.5 4.2 L36.4 4.3 L36.3 4.3 L36.2 4.4 L36.2 4.4 L36.1 4.5 L35.8 4.8 L35.8 4.9 L35.7 5.0 L35.7 5.0 L35.6 5.1 L35.6 5.2 L35.6 5.3 L35.3 8.2 L35.2 8.3 L35.2 8.3 L35.3 8.4 L35.3 8.5 L35.3 8.6 L35.3 8.7 L35.4 8.8 L35.4 8.9 L35.5 9.0 L35.6 9.0 L37.1 10.4 L37.2 10.5 L37.3 10.5 L37.4 10.6 L37.5 10.6 L37.6 10.7 L37.6 10.7 L37.7 10.7 L37.8 10.7 L37.9 10.7 L38.0 10.7 L38.1 10.6 L38.2 10.6 L38.3 10.6 L38.4 10.5 L38.5 10.5 L42.9 6.7 L43.0 6.6 L43.1 6.5 L43.1 6.5 L43.2 6.4 L43.2 6.3 L43.2 6.2 L43.3 6.1 L43.6 4.2 Z" fill="#fff"/><path d="M11.0 -0.3 L11.0 -0.2 L11.0 -0.1 L10.9 -0.0 L10.9 0.1 L10.9 0.2 L11.0 0.3 L11.0 0.3 L11.0 0.4 L11.0 0.5 L11.3 1.1 L11.4 1.1 L11.4 1.2 L11.5 1.3 L11.6 1.4 L11.6 1.4 L11.7 1.5 L11.8 1.5 L11.9 1.5 L12.0 1.6 L13.7 2.0 L13.8 2.0 L13.9 2.0 L14.0 2.0 L14.1 2.0 L14.2 1.9 L14.3 1.9 L14.4 1.9 L14.5 1.8 L14.6 1.8 L17.4 -0.6 L17.5 -0.7 L17.6 -0.8 L17.6 -0.8 L17.7 -0.9 L17.7 -1.0 L17.8 -1.1 L17.8 -1.2 L17.8 -1.3 L17.8 -1.4 L17.8 -1.5 L17.8 -1.6 L17.8 -1.7 L17.7 -1.8 L17.7 -1.9 L17.6 -2.0 L17.6 -2.0 L17.5 -2.1 L17.4 -2.2 L17.4 -2.2 L17.3 -2.3 L17.2 -2.3 L17.1 -2.4 L17.0 -2.4 L16.9 -2.4 L16.8 -2.4 L12.5 -2.4 L12.4 -2.4 L12.3 -2.4 L12.2 -2.4 L12.1 -2.3 L12.0 -2.3 L12.0 -2.2 L11.9 -2.2 L11.8 -2.1 L11.7 -2.0 L11.7 -1.9 L11.6 -1.9 L11.6 -1.8 L11.0 -0.3 Z" fill="#fff"/><path d="M39.0 36.5 L38.9 36.6 L38.8 36.6 L38.8 36.7 L38.7 36.8 L38.7 36.9 L38.7 37.0 L38.7 37.1 L38.7 37.2 L38.7 37.3 L38.7 37.4 L38.7 37.5 L38.8 37.6 L38.8 37.7 L38.9 37.8 L38.9 37.8 L42.7 42.2 L42.8 42.2 L42.9 42.3 L43.0 42.4 L43.1 42.4 L43.1 42.5 L43.2 42.5 L43.3 42.5 L43.4 42.5 L43.5 42.5 L43.6 42.5 L43.7 42.5 L43.8 42.5 L43.9 42.4 L44.0 42.4 L44.1 42.3 L44.2 42.2 L44.2 42.2 L44.3 42.1 L44.4 42.0 L45.4 40.2 L45.4 40.1 L45.4 40.0 L45.5 39.9 L45.5 39.8 L45.5 39.7 L45.5 39.6 L45.5 39.5 L45.4 39.4 L43.9 34.8 L43.9 34.7 L43.8 34.7 L43.8 34.6 L43.7 34.5 L43.7 34.4 L43.6 34.4 L43.5 34.3 L43.4 34.3 L43.3 34.2 L43.3 34.2 L43.2 34.2 L42.1 34.0 L42.0 33.9 L41.9 33.9 L41.8 33.9 L41.7 34.0 L41.6 34.0 L41.5 34.0 L41.4 34.1 L41.3 34.1 L41.2 34.2 L41.2 34.2 L39.0 36.5 Z" fill="#fff"/><path d="M42.5 56.9 L42.6 56.9 L42.7 56.8 L42.8 56.8 L42.9 56.8 L43.0 56.7 L43.0 56.6 L43.1 56.6 L43.2 56.5 L43.2 56.4 L43.3 56.3 L43.3 56.2 L43.3 56.1 L43.4 56.0 L43.7 54.0 L43.7 53.9 L43.7 53.8 L43.7 53.7 L43.6 53.6 L43.6 53.5 L43.6 53.4 L43.5 53.3 L43.5 53.2 L43.4 53.2 L43.3 53.1 L43.2 53.0 L43.2 53.0 L40.7 51.6 L40.6 51.6 L40.5 51.5 L40.4 51.5 L40.3 51.5 L40.2 51.5 L40.1 51.5 L40.0 51.5 L39.9 51.5 L38.1 52.0 L38.0 52.1 L37.9 52.1 L37.8 52.2 L37.7 52.2 L37.7 52.3 L37.6 52.4 L37.5 52.4 L37.5 52.5 L37.5 52.6 L37.4 52.7 L37.4 52.8 L37.4 52.9 L37.4 53.0 L37.4 53.1 L37.4 53.2 L38.1 56.6 L38.1 56.7 L38.1 56.7 L38.2 56.8 L38.2 56.9 L38.3 57.0 L38.3 57.1 L38.4 57.1 L38.5 57.2 L38.6 57.2 L38.7 57.3 L38.7 57.3 L38.8 57.4 L38.9 57.4 L39.0 57.4 L39.1 57.4 L39.2 57.4 L39.3 57.4 L42.5 56.9 Z" fill="#fff"/><path d="M4.9 10.1 L4.8 10.2 L4.7 10.2 L4.6 10.3 L4.5 10.3 L4.5 10.4 L4.4 10.5 L4.3 10.5 L4.3 10.6 L4.3 10.7 L4.2 10.8 L4.2 10.9 L4.2 11.0 L4.2 11.1 L4.2 11.2 L4.2 11.3 L4.3 11.4 L6.5 17.6 L6.5 17.7 L6.5 17.8 L6.6 17.8 L6.7 17.9 L6.7 18.0 L6.8 18.0 L6.9 18.1 L7.0 18.1 L7.1 18.2 L7.2 18.2 L7.2 18.2 L11.5 18.9 L11.6 18.9 L11.7 18.9 L11.8 18.9 L11.9 18.9 L12.0 18.9 L12.1 18.8 L12.2 18.8 L12.2 18.7 L12.3 18.7 L12.3 18.6 L12.4 18.6 L12.5 18.5 L12.5 18.4 L12.6 18.3 L12.6 18.2 L12.6 18.1 L12.7 18.0 L12.7 17.9 L12.8 13.3 L12.8 13.2 L12.8 13.1 L12.7 13.0 L12.7 12.9 L12.7 12.8 L12.6 12.7 L12.5 12.6 L12.5 12.5 L12.4 12.5 L12.3 12.4 L12.2 12.3 L7.1 9.7 L7.0 9.6 L6.9 9.6 L6.8 9.6 L6.7 9.6 L6.6 9.6 L6.5 9.6 L6.4 9.6 L6.3 9.6 L4.9 10.1 Z" fill="#fff"/><path d="M41.5 31.8 L41.5 31.9 L41.6 32.0 L41.6 32.1 L41.6 32.2 L41.7 32.3 L41.7 32.4 L41.8 32.4 L41.8 32.5 L41.9 32.6 L42.0 32.6 L42.1 32.7 L42.1 32.7 L42.2 32.8 L42.3 32.8 L43.8 33.1 L43.9 33.1 L44.0 33.1 L44.1 33.1 L44.2 33.1 L44.3 33.1 L44.4 33.0 L49.4 31.0 L49.5 31.0 L49.5 30.9 L49.6 30.8 L49.7 30.8 L49.8 30.7 L49.8 30.6 L49.9 30.5 L49.9 30.4 L50.0 30.3 L50.0 30.3 L50.2 29.0 L50.2 28.9 L50.2 28.8 L50.2 28.7 L50.2 28.6 L50.2 28.5 L50.1 28.4 L50.1 28.3 L48.7 25.8 L48.7 25.7 L48.6 25.7 L48.6 25.6 L48.5 25.5 L48.4 25.5 L48.3 25.4 L48.2 25.4 L48.1 25.3 L48.0 25.3 L48.0 25.3 L47.9 25.3 L44.5 25.3 L44.4 25.3 L44.3 25.3 L44.2 25.4 L44.1 25.4 L44.0 25.4 L43.9 25.5 L43.8 25.6 L43.8 25.6 L43.7 25.7 L43.7 25.8 L41.7 29.1 L41.6 29.1 L41.6 29.2 L41.6 29.3 L41.5 29.4 L41.5 29.5 L41.5 29.6 L41.5 31.8 Z" fill="#fff"/><path d="M18.6 38.3 L18.6 38.4 L18.6 38.5 L18.6 38.6 L18.7 38.7 L18.7 38.8 L18.7 38.9 L18.8 38.9 L18.8 39.0 L18.9 39.1 L19.0 39.2 L19.0 39.2 L19.1 39.3 L19.2 39.3 L19.3 39.4 L19.4 39.4 L19.5 39.4 L19.6 39.4 L19.7 39.4 L19.8 39.4 L19.9 39.4 L20.0 39.4 L20.1 39.3 L24.4 37.3 L24.5 37.3 L24.6 37.2 L24.6 37.2 L24.7 37.1 L24.8 37.0 L24.8 36.9 L24.9 36.9 L24.9 36.8 L24.9 36.7 L25.0 36.6 L25.2 35.3 L25.2 35.2 L25.2 35.1 L25.2 35.0 L25.2 34.9 L25.2 34.8 L25.1 34.7 L25.1 34.6 L25.1 34.5 L25.0 34.5 L24.9 34.4 L24.9 34.3 L24.8 34.3 L24.7 34.2 L24.6 34.2 L24.5 34.1 L24.4 34.1 L24.3 34.1 L24.2 34.1 L24.2 34.1 L20.1 34.4 L20.0 34.4 L19.9 34.4 L19.8 34.4 L19.7 34.5 L19.6 34.5 L19.5 34.6 L19.5 34.6 L19.4 34.7 L19.3 34.8 L19.3 34.8 L19.2 34.9 L19.2 35.0 L19.2 35.1 L19.1 35.2 L18.6 38.3 Z" fill="#fff"/><path d="M44.7 14.9 L44.7 15.0 L44.6 15.0 L44.5 15.1 L44.5 15.2 L44.4 15.3 L44.4 15.3 L44.3 15.4 L44.3 15.5 L44.3 15.6 L44.3 15.7 L44.3 15.8 L44.3 15.9 L44.3 16.0 L44.4 16.1 L44.4 16.2 L44.4 16.3 L44.5 16.4 L44.6 16.4 L44.6 16.5 L44.7 16.6 L48.5 19.2 L48.6 19.3 L48.6 19.3 L48.7 19.4 L48.8 19.4 L48.9 19.4 L49.0 19.4 L49.1 19.4 L49.2 19.4 L49.3 19.4 L49.4 19.4 L49.5 19.3 L49.6 19.3 L49.7 19.2 L49.7 19.1 L49.8 19.1 L49.9 19.0 L49.9 18.9 L50.0 18.8 L50.0 18.7 L50.0 18.6 L50.9 14.9 L50.9 14.8 L50.9 14.7 L50.9 14.6 L50.9 14.5 L50.9 14.4 L50.8 14.3 L50.8 14.2 L50.7 14.2 L50.7 14.1 L50.6 14.0 L50.6 13.9 L50.5 13.9 L50.4 13.8 L50.3 13.8 L50.2 13.7 L48.3 13.1 L48.2 13.0 L48.1 13.0 L48.0 13.0 L47.9 13.0 L47.8 13.0 L47.7 13.1 L47.6 13.1 L47.5 13.1 L47.4 13.2 L44.7 14.9 Z" fill="#fff"/><path d="M51.0 20.9 L50.9 20.9 L50.8 20.9 L50.7 21.0 L50.6 21.0 L50.5 21.0 L50.4 21.1 L50.4 21.1 L50.3 21.2 L50.2 21.3 L50.2 21.3 L50.1 21.4 L50.1 21.5 L50.1 21.6 L50.0 21.7 L49.5 24.3 L49.5 24.4 L49.5 24.5 L49.5 24.6 L49.5 24.7 L49.5 24.7 L49.6 24.8 L49.6 24.9 L50.7 26.9 L50.8 27.0 L50.8 27.1 L50.9 27.2 L51.0 27.2 L51.0 27.3 L51.1 27.3 L51.2 27.4 L51.3 27.4 L51.4 27.4 L51.5 27.4 L51.6 27.5 L51.7 27.4 L51.8 27.4 L51.9 27.4 L52.0 27.4 L56.7 25.3 L56.8 25.2 L56.8 25.2 L56.9 25.1 L57.0 25.0 L57.1 25.0 L57.1 24.9 L57.2 24.8 L57.2 24.7 L57.2 24.6 L57.3 24.5 L57.7 21.9 L57.7 21.8 L57.7 21.7 L57.7 21.6 L57.7 21.5 L57.6 21.4 L57.6 21.3 L57.5 21.2 L57.5 21.1 L57.4 21.1 L57.4 21.0 L57.3 20.9 L57.2 20.9 L57.1 20.8 L57.0 20.8 L56.9 20.8 L56.8 20.7 L56.8 20.7 L56.7 20.7 L51.0 20.9 Z" fill="#fff"/><path d="M52.6 12.4 L52.5 12.5 L52.5 12.6 L52.4 12.7 L52.4 12.8 L52.4 12.9 L52.4 13.0 L52.4 13.1 L52.4 13.2 L52.4 13.3 L52.4 13.3 L52.5 13.4 L52.5 13.5 L52.6 13.6 L52.7 13.7 L52.7 13.7 L52.8 13.8 L52.9 13.9 L53.0 13.9 L53.1 13.9 L53.1 14.0 L57.9 15.1 L58.0 15.2 L58.1 15.2 L58.2 15.2 L58.3 15.2 L58.4 15.1 L58.4 15.1 L58.5 15.1 L58.6 15.0 L58.7 15.0 L58.8 14.9 L58.8 14.8 L58.9 14.8 L59.0 14.7 L59.0 14.6 L59.1 14.5 L60.2 11.4 L60.2 11.3 L60.3 11.2 L60.3 11.1 L60.3 11.0 L60.3 10.9 L60.2 10.8 L60.2 10.8 L60.2 10.7 L59.4 8.8 L59.4 8.7 L59.3 8.6 L59.2 8.5 L59.2 8.5 L59.1 8.4 L59.0 8.3 L58.9 8.3 L58.8 8.3 L58.7 8.2 L56.7 7.7 L56.6 7.6 L56.5 7.6 L56.4 7.6 L56.3 7.6 L56.2 7.7 L56.1 7.7 L56.1 7.7 L56.0 7.8 L55.9 7.8 L55.8 7.9 L55.7 8.0 L55.7 8.1 L52.6 12.4 Z" fill="#fff"/><path d="M55.2 -1.1 L55.2 -1.2 L55.3 -1.3 L55.3 -1.4 L55.3 -1.5 L55.2 -1.6 L55.2 -1.7 L55.2 -1.8 L55.1 -1.9 L55.1 -1.9 L55.0 -2.0 L55.0 -2.1 L54.9 -2.2 L54.8 -2.2 L54.7 -2.3 L54.6 -2.3 L54.6 -2.4 L54.5 -2.4 L54.4 -2.4 L54.3 -2.4 L49.8 -2.4 L49.7 -2.4 L49.6 -2.4 L49.5 -2.4 L49.4 -2.3 L49.3 -2.3 L49.2 -2.2 L49.1 -2.2 L49.1 -2.1 L49.0 -2.0 L48.9 -1.9 L48.9 -1.8 L48.8 -1.7 L48.8 -1.6 L48.8 -1.6 L48.5 0.5 L48.5 0.6 L48.5 0.7 L48.5 0.8 L48.5 0.9 L48.5 1.0 L48.6 1.1 L48.6 1.2 L48.7 1.3 L48.7 1.3 L48.8 1.4 L51.7 4.0 L51.7 4.0 L51.8 4.1 L51.9 4.1 L52.0 4.2 L52.0 4.2 L52.1 4.2 L52.5 4.3 L52.6 4.3 L52.7 4.3 L52.8 4.3 L52.9 4.3 L53.0 4.3 L53.1 4.2 L53.2 4.2 L53.2 4.1 L53.3 4.1 L53.4 4.0 L53.5 4.0 L53.5 3.9 L53.6 3.8 L53.6 3.7 L53.6 3.6 L55.2 -1.1 Z" fill="#fff"/><path d="M1.6 28.3 L1.7 28.3 L1.8 28.3 L1.9 28.3 L2.0 28.3 L2.1 28.2 L2.2 28.2 L2.3 28.1 L3.1 27.5 L3.2 27.4 L3.3 27.4 L3.3 27.3 L3.4 27.2 L3.4 27.1 L3.5 27.0 L3.5 26.9 L3.5 26.8 L3.5 26.7 L3.5 26.6 L3.5 26.5 L3.0 22.9 L3.0 22.8 L2.9 22.8 L2.9 22.7 L2.9 22.6 L2.8 22.5 L2.8 22.4 L2.7 22.4 L2.6 22.3 L2.5 22.2 L2.5 22.2 L2.4 22.1 L2.3 22.1 L2.2 22.1 L-1.2 21.5 L-1.3 21.5 L-1.4 21.5 L-1.5 21.5 L-1.6 21.5 L-1.7 21.5 L-1.8 21.5 L-1.9 21.6 L-2.0 21.6 L-2.0 21.7 L-2.1 21.8 L-2.2 21.8 L-2.2 21.9 L-2.3 22.0 L-2.3 22.1 L-2.4 22.2 L-2.4 22.3 L-2.4 22.4 L-2.4 22.5 L-2.4 27.1 L-2.4 27.2 L-2.4 27.3 L-2.4 27.4 L-2.3 27.4 L-2.3 27.5 L-2.2 27.6 L-2.2 27.7 L-2.1 27.8 L-2.0 27.8 L-1.9 27.9 L-1.9 27.9 L-1.8 28.0 L-1.7 28.0 L-1.6 28.0 L-1.5 28.1 L1.6 28.3 Z" fill="#fff"/><path d="M13.9 59.2 L13.8 59.2 L13.7 59.2 L13.6 59.2 L13.5 59.2 L13.4 59.2 L13.4 59.2 L13.3 59.2 L13.2 59.3 L13.1 59.3 L13.0 59.4 L12.9 59.4 L12.9 59.5 L12.8 59.6 L12.8 59.7 L12.7 59.8 L12.7 59.8 L11.2 64.1 L11.1 64.2 L11.1 64.3 L11.1 64.4 L11.1 64.5 L11.1 64.6 L11.2 64.7 L11.2 64.8 L11.2 64.8 L11.3 64.9 L11.3 65.0 L11.4 65.1 L11.5 65.2 L11.6 65.2 L11.6 65.3 L11.7 65.3 L11.8 65.4 L11.9 65.4 L12.0 65.4 L12.1 65.4 L18.4 65.4 L18.5 65.4 L18.6 65.4 L18.6 65.4 L18.7 65.3 L18.8 65.3 L18.9 65.2 L19.0 65.2 L19.1 65.1 L19.1 65.1 L20.6 63.4 L20.7 63.3 L20.7 63.2 L20.8 63.1 L20.8 63.0 L20.8 62.9 L20.8 62.8 L20.8 62.7 L20.8 62.6 L20.8 62.5 L20.8 62.5 L20.8 62.4 L20.8 62.3 L20.7 62.2 L20.7 62.1 L20.6 62.0 L20.5 61.9 L19.7 61.2 L19.7 61.1 L19.6 61.1 L19.5 61.0 L19.4 61.0 L19.4 61.0 L13.9 59.2 Z" fill="#fff"/><path d="M43.1 -2.4 L43.0 -2.4 L42.9 -2.4 L42.8 -2.4 L42.7 -2.3 L42.6 -2.3 L42.5 -2.2 L42.4 -2.2 L42.4 -2.1 L42.3 -2.0 L42.2 -1.9 L42.2 -1.9 L42.1 -1.8 L42.1 -1.7 L42.1 -1.6 L42.1 -1.5 L42.1 -1.4 L42.1 -1.3 L42.1 -1.2 L42.1 -1.1 L42.1 -1.0 L42.2 -0.9 L43.5 1.4 L43.5 1.5 L43.6 1.6 L43.7 1.6 L43.7 1.7 L43.8 1.8 L43.9 1.8 L44.0 1.9 L44.0 1.9 L44.1 1.9 L44.2 1.9 L44.3 2.0 L44.4 2.0 L44.5 2.0 L44.6 1.9 L44.7 1.9 L44.8 1.9 L46.7 1.1 L46.8 1.0 L46.9 1.0 L47.0 0.9 L47.0 0.8 L47.1 0.8 L47.2 0.7 L47.2 0.6 L47.2 0.5 L47.3 0.4 L47.3 0.3 L47.5 -1.2 L47.5 -1.3 L47.5 -1.4 L47.5 -1.5 L47.5 -1.6 L47.5 -1.7 L47.5 -1.8 L47.4 -1.9 L47.4 -2.0 L47.3 -2.1 L47.2 -2.1 L47.2 -2.2 L47.1 -2.2 L47.0 -2.3 L46.9 -2.3 L46.8 -2.4 L46.7 -2.4 L46.6 -2.4 L46.5 -2.4 L43.1 -2.4 Z" fill="#fff"/><path d="M19.6 10.4 L19.5 10.3 L19.5 10.2 L19.4 10.1 L19.4 10.1 L19.3 10.0 L19.2 9.9 L19.1 9.9 L19.0 9.8 L18.9 9.8 L18.8 9.8 L18.7 9.8 L18.6 9.8 L18.6 9.8 L18.5 9.8 L18.4 9.8 L18.3 9.8 L18.2 9.9 L18.1 9.9 L14.4 12.3 L14.4 12.4 L14.3 12.4 L14.2 12.5 L14.2 12.6 L14.1 12.7 L14.1 12.8 L14.0 12.8 L14.0 12.9 L14.0 13.0 L14.0 13.1 L13.9 17.3 L13.9 17.4 L13.9 17.5 L13.9 17.6 L14.0 17.7 L14.0 17.7 L14.0 17.8 L14.1 17.9 L14.2 18.0 L14.2 18.1 L14.3 18.1 L14.4 18.2 L14.5 18.2 L14.6 18.2 L14.7 18.3 L14.8 18.3 L18.2 18.7 L18.3 18.7 L18.4 18.7 L18.5 18.7 L18.6 18.7 L18.6 18.6 L18.7 18.6 L18.8 18.6 L18.9 18.5 L21.3 16.7 L21.4 16.7 L21.5 16.6 L21.5 16.5 L21.6 16.4 L21.6 16.4 L21.7 16.3 L21.7 16.2 L21.7 16.1 L21.7 16.0 L21.7 15.9 L21.7 15.8 L21.7 15.7 L21.6 15.6 L19.6 10.4 Z" fill="#fff"/><path d="M13.1 43.7 L13.2 43.7 L13.3 43.7 L13.4 43.7 L13.5 43.7 L13.6 43.6 L13.7 43.6 L13.8 43.5 L13.8 43.5 L13.9 43.4 L14.0 43.3 L15.7 41.1 L15.7 41.1 L15.8 41.0 L15.8 40.9 L15.8 40.8 L15.9 40.7 L15.9 40.6 L15.9 40.5 L15.9 40.4 L15.8 40.3 L15.8 40.2 L15.8 40.1 L15.8 40.1 L15.7 40.0 L15.6 39.9 L15.6 39.8 L15.5 39.8 L15.4 39.7 L15.4 39.7 L9.5 36.4 L9.4 36.4 L9.3 36.3 L9.2 36.3 L9.1 36.3 L9.0 36.3 L8.9 36.3 L8.8 36.3 L8.7 36.3 L8.6 36.4 L8.6 36.4 L8.5 36.4 L6.9 37.5 L6.8 37.5 L6.7 37.6 L6.7 37.7 L6.6 37.8 L6.6 37.8 L6.5 37.9 L6.5 38.0 L6.5 38.1 L6.4 38.2 L6.4 38.3 L6.5 38.4 L6.5 38.5 L6.5 38.6 L7.9 42.9 L7.9 42.9 L8.0 43.0 L8.0 43.1 L8.1 43.2 L8.2 43.3 L8.2 43.3 L8.3 43.4 L8.4 43.4 L8.5 43.5 L8.6 43.5 L8.7 43.5 L8.8 43.5 L13.1 43.7 Z" fill="#fff"/><path d="M10.1 2.5 L10.2 2.4 L10.2 2.3 L10.2 2.2 L10.3 2.1 L10.3 2.0 L10.3 1.9 L10.3 1.8 L10.3 1.7 L10.2 1.6 L10.2 1.5 L10.2 1.4 L9.9 1.0 L9.9 0.9 L9.8 0.8 L9.7 0.7 L9.7 0.6 L9.6 0.6 L9.5 0.5 L9.4 0.5 L5.6 -1.0 L5.5 -1.0 L5.4 -1.1 L5.3 -1.1 L5.3 -1.1 L5.2 -1.1 L5.1 -1.1 L5.0 -1.0 L4.9 -1.0 L4.8 -1.0 L4.7 -0.9 L4.6 -0.9 L4.6 -0.8 L2.3 1.4 L2.3 1.5 L2.2 1.6 L2.2 1.7 L2.1 1.8 L2.1 1.9 L2.1 2.0 L1.5 5.1 L1.5 5.2 L1.5 5.3 L1.5 5.4 L1.5 5.5 L1.5 5.5 L1.6 5.6 L1.6 5.7 L3.1 8.6 L3.2 8.6 L3.2 8.7 L3.3 8.8 L3.4 8.9 L3.5 8.9 L3.5 9.0 L3.6 9.0 L3.7 9.0 L3.8 9.1 L3.9 9.1 L4.0 9.1 L4.1 9.1 L4.2 9.1 L4.3 9.1 L4.4 9.0 L6.0 8.4 L6.1 8.4 L6.2 8.4 L6.3 8.3 L6.3 8.2 L6.4 8.2 L6.5 8.1 L6.5 8.0 L10.1 2.5 Z" fill="#fff"/><path d="M-2.3 44.2 L-2.3 44.3 L-2.3 44.4 L-2.3 44.5 L-2.3 44.6 L-2.2 44.7 L-2.2 44.8 L-2.2 44.9 L-2.1 45.0 L-2.1 45.0 L-2.0 45.1 L-1.9 45.2 L-1.9 45.2 L-1.8 45.3 L-1.7 45.3 L-1.6 45.4 L-1.5 45.4 L3.7 46.7 L3.8 46.7 L3.9 46.7 L4.0 46.7 L4.1 46.7 L4.2 46.7 L4.3 46.6 L4.3 46.6 L4.4 46.6 L4.5 46.5 L4.6 46.5 L4.7 46.4 L6.6 44.4 L6.6 44.3 L6.7 44.2 L6.7 44.1 L6.8 44.0 L6.8 43.9 L6.8 43.9 L6.8 43.8 L6.8 43.7 L6.8 43.6 L6.8 43.5 L6.8 43.4 L5.3 38.7 L5.2 38.6 L5.2 38.5 L5.1 38.4 L5.1 38.4 L5.0 38.3 L4.9 38.2 L4.9 38.2 L4.8 38.1 L4.7 38.1 L4.6 38.0 L4.5 38.0 L3.8 37.9 L3.7 37.9 L3.7 37.8 L3.6 37.9 L3.5 37.9 L3.4 37.9 L3.3 37.9 L3.2 37.9 L3.1 38.0 L3.0 38.0 L3.0 38.1 L2.9 38.2 L-1.9 43.2 L-1.9 43.3 L-2.0 43.4 L-2.0 43.4 L-2.1 43.5 L-2.1 43.6 L-2.1 43.7 L-2.3 44.2 Z" fill="#fff"/><path d="M39.7 20.3 L39.6 20.2 L39.6 20.2 L39.5 20.1 L39.4 20.0 L39.3 20.0 L39.2 19.9 L39.1 19.9 L39.0 19.9 L38.9 19.9 L38.8 19.9 L38.7 19.9 L38.6 19.9 L38.5 19.9 L38.4 20.0 L38.4 20.0 L38.3 20.1 L38.2 20.2 L38.1 20.2 L38.1 20.3 L38.0 20.4 L38.0 20.5 L37.9 20.6 L37.9 20.7 L37.2 23.6 L37.2 23.7 L37.2 23.8 L37.2 23.9 L37.2 24.0 L37.2 24.1 L37.2 24.2 L37.3 24.3 L37.3 24.4 L37.4 24.4 L37.4 24.5 L39.9 27.2 L40.0 27.3 L40.1 27.3 L40.1 27.4 L40.2 27.4 L40.3 27.4 L40.4 27.5 L40.5 27.5 L40.6 27.5 L40.7 27.5 L40.8 27.5 L40.9 27.5 L41.0 27.4 L41.1 27.4 L41.2 27.4 L41.2 27.3 L41.3 27.2 L41.4 27.2 L41.4 27.1 L41.5 27.0 L42.5 25.3 L42.6 25.2 L42.6 25.1 L42.7 25.0 L42.7 24.9 L42.7 24.9 L42.7 24.8 L42.7 24.7 L42.7 24.6 L42.6 24.5 L42.6 24.4 L42.6 24.3 L42.5 24.2 L39.7 20.3 Z" fill="#fff"/><path d="M-1.3 29.3 L-1.4 29.3 L-1.5 29.3 L-1.6 29.3 L-1.7 29.3 L-1.8 29.3 L-1.9 29.4 L-2.0 29.4 L-2.0 29.5 L-2.1 29.6 L-2.2 29.6 L-2.2 29.7 L-2.3 29.8 L-2.3 29.9 L-2.4 30.0 L-2.4 30.1 L-2.4 30.2 L-2.4 30.3 L-2.4 33.3 L-2.4 33.4 L-2.4 33.5 L-2.4 33.6 L-2.3 33.7 L-2.3 33.8 L-2.2 33.8 L-2.2 33.9 L-2.1 34.0 L-2.0 34.1 L-2.0 34.1 L-1.9 34.2 L-1.8 34.2 L-1.7 34.2 L-1.6 34.3 L0.4 34.7 L0.5 34.7 L0.6 34.7 L0.7 34.7 L0.8 34.7 L0.9 34.7 L1.0 34.7 L1.1 34.6 L1.1 34.6 L1.2 34.5 L1.3 34.5 L1.4 34.4 L1.4 34.3 L1.5 34.2 L1.5 34.1 L1.6 34.0 L1.6 33.9 L1.6 33.8 L1.6 33.7 L1.6 30.4 L1.6 30.3 L1.6 30.2 L1.5 30.1 L1.5 30.0 L1.5 29.9 L1.4 29.9 L1.3 29.8 L1.3 29.7 L1.2 29.6 L1.1 29.6 L1.0 29.5 L0.9 29.5 L0.9 29.5 L0.8 29.4 L0.7 29.4 L-1.3 29.3 Z" fill="#fff"/><path d="M5.6 47.2 L5.5 47.3 L5.4 47.3 L5.4 47.4 L5.3 47.5 L5.3 47.6 L5.3 47.7 L5.3 47.8 L5.3 47.9 L5.3 48.0 L5.3 48.1 L5.3 48.2 L7.0 53.1 L7.1 53.2 L7.1 53.3 L7.2 53.4 L7.2 53.5 L7.3 53.5 L7.4 53.6 L7.4 53.6 L7.5 53.7 L7.6 53.7 L7.7 53.8 L7.8 53.8 L10.3 54.3 L10.4 54.3 L10.5 54.3 L10.6 54.3 L10.7 54.3 L10.8 54.3 L10.9 54.2 L10.9 54.2 L11.0 54.2 L11.1 54.1 L11.2 54.0 L11.3 54.0 L14.0 50.7 L14.1 50.7 L14.2 50.6 L14.2 50.5 L14.2 50.4 L14.3 50.3 L14.3 50.2 L14.3 50.1 L14.3 50.0 L14.3 49.9 L13.6 45.7 L13.5 45.6 L13.5 45.6 L13.5 45.5 L13.4 45.4 L13.4 45.3 L13.3 45.2 L13.2 45.2 L13.2 45.1 L13.1 45.0 L13.0 45.0 L12.9 45.0 L12.8 44.9 L12.7 44.9 L12.6 44.9 L8.4 44.7 L8.3 44.7 L8.2 44.7 L8.1 44.7 L8.0 44.8 L7.9 44.8 L7.8 44.9 L7.7 44.9 L7.7 45.0 L7.6 45.0 L5.6 47.2 Z" fill="#fff"/><path d="M33.4 64.2 L33.4 64.3 L33.4 64.4 L33.4 64.5 L33.4 64.6 L33.5 64.7 L33.5 64.8 L33.5 64.8 L33.6 64.9 L33.6 65.0 L33.7 65.1 L33.8 65.2 L33.9 65.2 L33.9 65.3 L34.0 65.3 L34.1 65.4 L34.2 65.4 L34.3 65.4 L34.4 65.4 L36.0 65.4 L36.1 65.4 L36.1 65.4 L36.2 65.4 L36.3 65.3 L36.4 65.3 L36.5 65.2 L36.6 65.2 L36.6 65.1 L36.7 65.1 L37.5 64.1 L37.6 64.0 L37.7 63.9 L37.7 63.8 L37.7 63.7 L37.8 63.6 L37.8 63.5 L38.1 59.4 L38.1 59.3 L38.1 59.2 L38.1 59.1 L38.1 59.0 L38.0 58.9 L38.0 58.8 L37.9 58.7 L37.9 58.6 L37.8 58.6 L37.7 58.5 L37.7 58.4 L37.6 58.4 L37.5 58.4 L37.4 58.3 L37.3 58.3 L37.2 58.3 L37.1 58.3 L37.0 58.3 L36.9 58.3 L36.8 58.4 L35.2 58.9 L35.1 59.0 L35.0 59.0 L34.9 59.1 L34.8 59.1 L34.8 59.2 L34.7 59.3 L34.7 59.4 L34.6 59.5 L34.6 59.6 L34.5 59.7 L33.4 64.2 Z" fill="#fff"/><path d="M1.6 10.3 L1.7 10.3 L1.7 10.2 L1.8 10.2 L1.9 10.1 L1.9 10.0 L2.0 9.9 L2.0 9.8 L2.1 9.8 L2.1 9.7 L2.1 9.6 L2.1 9.5 L2.1 9.4 L2.1 9.3 L2.1 9.2 L2.0 9.1 L2.0 9.0 L0.6 6.4 L0.6 6.3 L0.5 6.3 L0.5 6.2 L0.4 6.1 L0.3 6.1 L0.3 6.0 L0.2 6.0 L0.1 6.0 L-0.0 5.9 L-1.2 5.6 L-1.3 5.6 L-1.4 5.6 L-1.5 5.6 L-1.6 5.6 L-1.7 5.7 L-1.8 5.7 L-1.8 5.7 L-1.9 5.8 L-2.0 5.8 L-2.1 5.9 L-2.2 6.0 L-2.2 6.1 L-2.3 6.1 L-2.3 6.2 L-2.4 6.3 L-2.4 6.4 L-2.4 6.5 L-2.4 6.6 L-2.4 10.7 L-2.4 10.8 L-2.4 10.9 L-2.4 11.0 L-2.3 11.1 L-2.3 11.2 L-2.2 11.3 L-2.2 11.3 L-2.1 11.4 L-2.0 11.5 L-2.0 11.5 L-1.9 11.6 L-1.8 11.6 L-1.7 11.7 L-1.6 11.7 L-1.5 11.7 L-1.4 11.7 L-1.3 11.7 L-1.2 11.7 L-1.1 11.7 L-1.0 11.7 L-1.0 11.6 L1.6 10.3 Z" fill="#fff"/><path d="M17.7 32.2 L17.6 32.1 L17.6 32.0 L17.6 31.9 L17.5 31.8 L17.4 31.8 L17.4 31.7 L17.3 31.6 L17.2 31.6 L17.1 31.5 L17.0 31.5 L16.9 31.5 L16.8 31.5 L16.7 31.5 L16.6 31.5 L16.5 31.5 L10.7 32.8 L10.6 32.8 L10.5 32.8 L10.4 32.9 L10.3 32.9 L10.3 33.0 L10.2 33.0 L10.1 33.1 L10.1 33.2 L10.0 33.3 L10.0 33.4 L9.9 33.5 L9.9 33.6 L9.8 34.4 L9.7 34.5 L9.7 34.6 L9.7 34.7 L9.8 34.8 L9.8 34.9 L9.8 35.0 L9.9 35.0 L9.9 35.1 L10.0 35.2 L10.0 35.3 L10.1 35.3 L10.2 35.4 L10.3 35.5 L16.0 38.6 L16.1 38.7 L16.2 38.7 L16.3 38.7 L16.4 38.8 L16.5 38.8 L16.6 38.8 L16.7 38.8 L16.8 38.7 L16.8 38.7 L16.9 38.7 L17.0 38.6 L17.1 38.6 L17.2 38.5 L17.2 38.4 L17.3 38.4 L17.4 38.3 L17.4 38.2 L17.4 38.1 L17.5 38.0 L17.5 37.9 L18.1 34.1 L18.1 34.0 L18.1 33.9 L18.1 33.8 L18.1 33.7 L17.7 32.2 Z" fill="#fff"/><path d="M-0.7 4.5 L-0.6 4.5 L-0.5 4.6 L-0.4 4.6 L-0.3 4.5 L-0.2 4.5 L-0.1 4.5 L-0.0 4.5 L0.1 4.4 L0.1 4.4 L0.2 4.3 L0.3 4.2 L0.3 4.2 L0.4 4.1 L0.4 4.0 L0.5 3.9 L0.5 3.8 L0.5 3.7 L0.8 2.3 L0.8 2.2 L0.8 2.1 L0.8 2.0 L0.8 1.9 L0.7 1.8 L0.7 1.7 L0.7 1.6 L0.6 1.6 L0.6 1.5 L0.5 1.4 L0.4 1.3 L0.3 1.3 L-0.9 0.5 L-0.9 0.5 L-1.0 0.4 L-1.1 0.4 L-1.2 0.4 L-1.3 0.3 L-1.4 0.3 L-1.5 0.3 L-1.6 0.4 L-1.7 0.4 L-1.8 0.4 L-1.9 0.5 L-2.0 0.5 L-2.0 0.6 L-2.1 0.6 L-2.2 0.7 L-2.2 0.8 L-2.3 0.9 L-2.3 1.0 L-2.4 1.1 L-2.4 1.1 L-2.4 1.2 L-2.4 1.3 L-2.4 3.3 L-2.4 3.4 L-2.4 3.5 L-2.4 3.6 L-2.3 3.7 L-2.3 3.8 L-2.2 3.9 L-2.2 3.9 L-2.1 4.0 L-2.1 4.1 L-2.0 4.1 L-1.9 4.2 L-1.8 4.2 L-1.7 4.3 L-1.6 4.3 L-0.7 4.5 Z" fill="#fff"/><path d="M48.0 61.9 L48.1 61.9 L48.2 62.0 L48.3 62.0 L48.4 62.0 L48.5 62.0 L48.6 62.0 L48.7 62.0 L48.8 62.0 L48.9 62.0 L49.0 62.0 L49.1 61.9 L49.1 61.9 L49.2 61.8 L49.3 61.7 L49.4 61.7 L49.4 61.6 L49.5 61.5 L49.5 61.4 L49.5 61.3 L50.2 59.1 L50.2 59.0 L50.2 58.9 L50.2 58.8 L50.2 58.7 L50.2 58.6 L48.9 52.3 L48.9 52.3 L48.9 52.2 L48.8 52.1 L48.8 52.0 L48.7 51.9 L48.7 51.8 L48.6 51.8 L48.5 51.7 L48.4 51.7 L48.3 51.6 L48.2 51.6 L48.1 51.6 L48.0 51.6 L48.0 51.5 L47.9 51.6 L47.8 51.6 L47.7 51.6 L47.6 51.6 L47.5 51.7 L47.4 51.7 L45.3 53.1 L45.3 53.1 L45.2 53.2 L45.1 53.3 L45.1 53.4 L45.0 53.4 L45.0 53.5 L44.9 53.6 L44.9 53.7 L44.9 53.8 L44.5 56.8 L44.5 56.9 L44.5 57.0 L44.5 57.1 L44.5 57.1 L44.5 57.2 L44.5 57.3 L44.6 57.4 L44.6 57.5 L47.3 61.3 L47.3 61.4 L47.4 61.4 L47.4 61.5 L47.5 61.5 L48.0 61.9 Z" fill="#fff"/><path d="M15.4 49.3 L15.4 49.4 L15.4 49.5 L15.5 49.6 L15.5 49.7 L15.6 49.8 L15.6 49.8 L15.7 49.9 L15.8 50.0 L15.9 50.0 L15.9 50.1 L16.0 50.1 L16.1 50.1 L16.2 50.1 L19.6 50.7 L19.6 50.7 L19.7 50.7 L19.8 50.7 L19.9 50.7 L20.0 50.7 L20.1 50.6 L20.2 50.6 L20.3 50.5 L20.4 50.5 L20.4 50.4 L20.5 50.3 L20.5 50.3 L20.6 50.2 L20.6 50.1 L20.7 50.0 L20.7 49.9 L20.7 49.8 L20.7 49.7 L20.7 43.0 L20.7 42.9 L20.7 42.8 L20.7 42.7 L20.6 42.6 L20.6 42.5 L20.5 42.4 L20.5 42.4 L20.4 42.3 L19.0 41.0 L19.0 41.0 L18.9 40.9 L18.8 40.9 L18.7 40.8 L18.4 40.7 L18.3 40.7 L18.2 40.7 L18.1 40.6 L18.0 40.6 L17.9 40.6 L17.8 40.7 L17.7 40.7 L17.7 40.7 L17.6 40.8 L17.5 40.8 L17.4 40.9 L17.3 40.9 L17.3 41.0 L14.8 44.2 L14.8 44.3 L14.7 44.4 L14.7 44.5 L14.7 44.5 L14.6 44.7 L14.6 44.8 L14.6 44.9 L14.6 45.0 L15.4 49.3 Z" fill="#fff"/><path d="M60.3 20.0 L60.2 20.0 L60.1 20.0 L60.0 20.0 L59.9 20.0 L59.8 20.0 L59.7 20.0 L59.6 20.1 L59.6 20.1 L59.5 20.2 L59.4 20.2 L59.3 20.3 L59.3 20.4 L59.2 20.5 L59.1 20.5 L59.1 20.6 L59.1 20.7 L59.1 20.8 L58.4 24.8 L58.4 24.9 L58.4 25.0 L58.4 25.1 L58.4 25.2 L58.5 25.3 L58.5 25.4 L58.6 25.5 L58.6 25.5 L58.7 25.6 L61.5 28.6 L61.6 28.6 L61.6 28.7 L61.7 28.7 L61.8 28.8 L61.9 28.8 L62.0 28.8 L62.1 28.9 L62.2 28.9 L62.3 28.9 L62.4 28.9 L62.4 28.8 L62.5 28.8 L62.6 28.8 L62.7 28.7 L62.8 28.7 L65.0 27.1 L65.1 27.0 L65.1 27.0 L65.2 26.9 L65.2 26.8 L65.3 26.7 L65.3 26.6 L65.4 26.6 L65.4 26.5 L65.4 26.4 L65.4 26.3 L65.4 22.3 L65.4 22.2 L65.4 22.1 L65.4 22.1 L65.3 22.0 L65.3 21.9 L65.2 21.8 L65.2 21.7 L65.1 21.6 L65.0 21.6 L65.0 21.5 L64.9 21.5 L64.8 21.4 L64.7 21.4 L60.3 20.0 Z" fill="#fff"/><path d="M62.3 33.3 L62.2 33.3 L62.1 33.2 L62.0 33.1 L61.9 33.1 L61.8 33.1 L61.7 33.1 L61.6 33.1 L61.5 33.1 L61.4 33.1 L61.3 33.1 L61.2 33.1 L61.1 33.2 L61.1 33.2 L58.4 35.0 L58.4 35.0 L58.3 35.1 L58.2 35.2 L58.2 35.3 L58.1 35.3 L58.1 35.4 L58.0 35.5 L58.0 35.6 L58.0 35.7 L58.0 35.8 L58.0 35.9 L58.0 36.0 L58.0 36.1 L58.1 36.2 L58.1 36.3 L58.2 36.4 L58.2 36.4 L58.3 36.5 L63.3 41.4 L63.3 41.5 L63.4 41.6 L63.5 41.6 L63.6 41.7 L63.7 41.7 L63.8 41.7 L63.9 41.7 L64.0 41.7 L64.1 41.7 L64.2 41.7 L64.3 41.7 L64.4 41.7 L64.4 41.6 L64.5 41.6 L64.6 41.5 L64.7 41.4 L64.7 41.4 L65.2 40.8 L65.2 40.7 L65.3 40.7 L65.3 40.6 L65.4 40.5 L65.4 40.4 L65.4 40.3 L65.4 40.2 L65.4 36.6 L65.4 36.5 L65.4 36.4 L65.4 36.3 L65.3 36.2 L65.3 36.1 L65.2 36.0 L65.2 36.0 L65.1 35.9 L65.1 35.8 L62.3 33.3 Z" fill="#fff"/><path d="M40.6 16.3 L40.5 16.3 L40.4 16.4 L40.3 16.4 L40.2 16.4 L40.1 16.5 L40.0 16.5 L40.0 16.6 L39.9 16.7 L39.8 16.8 L39.8 16.8 L39.7 16.9 L39.6 17.3 L39.5 17.3 L39.5 17.4 L39.5 17.5 L39.5 17.6 L39.5 17.7 L39.5 17.8 L39.5 17.9 L39.6 18.0 L39.6 18.1 L39.6 18.2 L39.7 18.2 L43.6 23.7 L43.7 23.8 L43.7 23.8 L43.8 23.9 L43.9 24.0 L44.0 24.0 L44.1 24.0 L44.1 24.1 L44.2 24.1 L44.3 24.1 L44.4 24.1 L47.5 24.1 L47.6 24.1 L47.7 24.1 L47.8 24.1 L47.9 24.0 L48.0 24.0 L48.1 23.9 L48.1 23.9 L48.2 23.8 L48.3 23.7 L48.3 23.7 L48.4 23.6 L48.4 23.5 L48.5 23.4 L48.5 23.3 L48.8 21.7 L48.8 21.6 L48.8 21.5 L48.8 21.4 L48.8 21.3 L48.8 21.2 L48.8 21.1 L48.7 21.0 L48.7 20.9 L48.6 20.9 L48.6 20.8 L48.5 20.7 L48.4 20.7 L42.5 16.5 L42.5 16.4 L42.4 16.4 L42.3 16.3 L42.2 16.3 L42.1 16.3 L42.0 16.3 L41.9 16.3 L40.6 16.3 Z" fill="#fff"/><path d="M61.3 -2.4 L61.2 -2.4 L61.1 -2.4 L61.0 -2.4 L61.0 -2.3 L60.9 -2.3 L60.8 -2.2 L60.7 -2.2 L60.6 -2.1 L60.6 -2.0 L60.5 -2.0 L60.5 -1.9 L60.4 -1.8 L60.4 -1.7 L60.4 -1.6 L60.3 -1.5 L60.3 -1.4 L60.3 -1.3 L60.3 -1.2 L60.4 -1.1 L60.4 -1.0 L60.4 -0.9 L60.5 -0.9 L60.5 -0.8 L60.6 -0.7 L60.7 -0.6 L60.8 -0.6 L60.8 -0.5 L60.9 -0.5 L61.0 -0.5 L61.1 -0.4 L61.2 -0.4 L61.3 -0.4 L61.4 -0.4 L61.4 -0.4 L61.5 -0.4 L61.6 -0.4 L61.7 -0.4 L61.8 -0.5 L61.9 -0.5 L62.0 -0.6 L62.1 -0.6 L62.1 -0.7 L62.2 -0.8 L62.2 -0.9 L62.3 -1.0 L62.3 -1.0 L62.3 -1.1 L62.4 -1.2 L62.4 -1.3 L62.4 -1.4 L62.4 -1.5 L62.4 -1.6 L62.4 -1.7 L62.3 -1.8 L62.3 -1.9 L62.2 -1.9 L62.2 -2.0 L62.1 -2.1 L62.0 -2.2 L62.0 -2.2 L61.9 -2.3 L61.8 -2.3 L61.7 -2.4 L61.6 -2.4 L61.5 -2.4 L61.4 -2.4 L61.3 -2.4 Z" fill="#fff"/><path d="M28.7 42.6 L28.6 42.7 L28.6 42.8 L28.6 42.9 L28.7 43.0 L28.7 43.1 L28.7 43.2 L28.8 43.3 L28.8 43.3 L28.9 43.4 L28.9 43.5 L29.0 43.6 L29.1 43.6 L29.2 43.7 L29.3 43.7 L29.4 43.7 L29.5 43.8 L29.6 43.8 L29.7 43.8 L29.8 43.8 L29.9 43.8 L30.0 43.7 L33.9 42.4 L34.0 42.4 L34.1 42.3 L34.2 42.3 L34.3 42.2 L34.3 42.2 L34.4 42.1 L34.5 42.0 L34.5 41.9 L34.5 41.8 L34.6 41.7 L34.6 41.7 L35.2 38.9 L35.2 38.8 L35.2 38.7 L35.2 38.6 L35.2 38.5 L35.1 38.4 L35.1 38.3 L35.1 38.2 L35.0 38.1 L35.0 38.0 L34.9 38.0 L34.8 37.9 L34.7 37.8 L34.7 37.8 L34.6 37.7 L33.1 37.1 L33.1 37.1 L33.0 37.1 L32.9 37.1 L32.8 37.1 L32.7 37.1 L32.6 37.1 L32.5 37.1 L32.4 37.1 L32.3 37.2 L32.2 37.2 L32.1 37.3 L29.5 39.4 L29.5 39.5 L29.4 39.5 L29.3 39.6 L29.3 39.7 L29.2 39.8 L29.2 39.9 L29.2 40.0 L28.7 42.6 Z" fill="#fff"/><path d="M63.7 33.0 L63.8 33.1 L63.9 33.1 L64.0 33.2 L64.1 33.2 L64.2 33.2 L64.3 33.3 L64.4 33.3 L64.5 33.3 L64.6 33.3 L64.7 33.2 L64.8 33.2 L64.9 33.2 L64.9 33.1 L65.0 33.0 L65.1 33.0 L65.2 32.9 L65.2 32.8 L65.3 32.7 L65.3 32.7 L65.4 32.6 L65.4 32.5 L65.4 32.4 L65.4 32.3 L65.4 30.2 L65.4 30.1 L65.4 30.0 L65.4 29.9 L65.3 29.8 L65.3 29.8 L65.2 29.7 L65.2 29.6 L65.1 29.5 L65.0 29.4 L64.9 29.4 L64.9 29.3 L64.8 29.3 L64.7 29.3 L64.6 29.2 L64.5 29.2 L64.4 29.2 L64.3 29.2 L64.2 29.3 L64.1 29.3 L64.0 29.3 L63.9 29.4 L63.8 29.4 L62.9 30.1 L62.8 30.1 L62.8 30.2 L62.7 30.3 L62.7 30.4 L62.6 30.5 L62.6 30.6 L62.5 30.7 L62.5 30.8 L62.5 31.3 L62.4 31.4 L62.4 31.5 L62.5 31.6 L62.5 31.7 L62.5 31.8 L62.5 31.8 L62.6 31.9 L62.6 32.0 L62.7 32.1 L62.8 32.2 L63.7 33.0 Z" fill="#fff"/><path d="M63.4 4.3 L63.3 4.3 L63.2 4.3 L63.1 4.3 L63.0 4.4 L62.9 4.4 L62.8 4.5 L62.7 4.5 L62.7 4.6 L62.6 4.7 L62.5 4.7 L60.6 7.5 L60.6 7.6 L60.6 7.6 L60.5 7.7 L60.5 7.8 L60.5 7.9 L60.5 8.0 L60.5 8.1 L60.5 8.2 L60.5 8.3 L60.5 8.4 L61.2 10.0 L61.2 10.1 L61.3 10.2 L61.4 10.2 L61.4 10.3 L61.5 10.4 L61.6 10.4 L61.7 10.5 L61.8 10.5 L61.9 10.6 L62.0 10.6 L64.2 11.0 L64.3 11.0 L64.4 11.0 L64.5 11.0 L64.6 11.0 L64.7 10.9 L64.8 10.9 L64.9 10.9 L65.0 10.8 L65.0 10.7 L65.1 10.7 L65.2 10.6 L65.2 10.5 L65.3 10.4 L65.3 10.4 L65.4 10.3 L65.4 10.2 L65.4 10.1 L65.4 10.0 L65.4 5.4 L65.4 5.3 L65.4 5.2 L65.4 5.1 L65.3 5.0 L65.3 4.9 L65.2 4.8 L65.2 4.7 L65.1 4.7 L65.1 4.6 L65.0 4.5 L64.9 4.5 L64.8 4.4 L64.7 4.4 L64.6 4.4 L64.5 4.4 L64.4 4.4 L63.4 4.3 Z" fill="#fff"/><path d="M31.4 57.0 L31.3 57.0 L31.2 56.9 L31.1 56.9 L31.1 56.8 L31.0 56.8 L30.9 56.8 L30.8 56.8 L30.7 56.8 L30.6 56.8 L30.5 56.8 L30.4 56.9 L30.3 56.9 L29.8 57.1 L29.7 57.2 L29.6 57.2 L29.5 57.3 L29.5 57.4 L29.4 57.5 L29.3 57.5 L29.3 57.6 L29.3 57.7 L29.2 57.8 L29.2 57.9 L29.2 58.0 L29.2 58.1 L29.2 58.2 L29.2 58.3 L29.3 58.4 L30.8 62.2 L30.9 62.3 L30.9 62.4 L31.0 62.5 L31.0 62.6 L31.1 62.6 L31.2 62.7 L31.3 62.7 L31.3 62.8 L31.4 62.8 L31.5 62.8 L31.6 62.9 L31.7 62.9 L31.8 62.9 L31.9 62.9 L32.0 62.8 L32.1 62.8 L32.2 62.8 L32.3 62.7 L32.4 62.7 L32.4 62.6 L32.5 62.5 L32.6 62.5 L32.6 62.4 L32.7 62.3 L32.7 62.2 L32.7 62.1 L33.4 59.5 L33.4 59.4 L33.4 59.3 L33.4 59.2 L33.4 59.1 L33.3 59.0 L33.3 58.9 L33.3 58.8 L33.2 58.7 L33.2 58.6 L33.1 58.6 L33.0 58.5 L31.4 57.0 Z" fill="#fff"/><path d="M12.8 11.3 L12.9 11.4 L13.0 11.4 L13.1 11.4 L13.2 11.4 L13.3 11.4 L13.4 11.4 L13.5 11.4 L13.6 11.4 L13.7 11.4 L13.8 11.3 L13.9 11.3 L17.0 9.2 L17.1 9.1 L17.2 9.1 L17.2 9.0 L17.3 8.9 L17.3 8.9 L17.4 8.8 L17.4 8.7 L17.4 8.6 L17.5 8.5 L17.5 8.4 L17.5 8.3 L17.5 8.2 L17.4 8.1 L17.4 8.0 L17.4 7.9 L17.3 7.8 L17.3 7.8 L14.2 3.6 L14.1 3.5 L14.1 3.4 L14.0 3.3 L13.9 3.3 L13.8 3.2 L13.7 3.2 L13.6 3.2 L12.1 2.8 L12.0 2.8 L11.9 2.8 L11.8 2.8 L11.7 2.8 L11.6 2.8 L11.5 2.9 L11.4 2.9 L11.3 3.0 L11.2 3.0 L11.2 3.1 L11.1 3.2 L11.0 3.3 L8.2 7.7 L8.1 7.7 L8.1 7.8 L8.1 7.9 L8.0 8.0 L8.0 8.1 L8.0 8.2 L8.0 8.3 L8.0 8.4 L8.1 8.5 L8.1 8.6 L8.1 8.7 L8.2 8.8 L8.3 8.8 L8.3 8.9 L8.4 9.0 L8.5 9.0 L8.6 9.1 L12.8 11.3 Z" fill="#fff"/><path d="M50.7 32.4 L50.7 32.4 L50.6 32.3 L50.5 32.3 L50.4 32.2 L50.3 32.2 L50.2 32.1 L50.1 32.1 L50.0 32.1 L49.9 32.1 L49.8 32.1 L49.7 32.2 L49.6 32.2 L45.8 33.8 L45.7 33.8 L45.6 33.8 L45.5 33.9 L45.5 34.0 L45.4 34.0 L45.3 34.1 L45.3 34.2 L45.3 34.3 L45.2 34.4 L45.2 34.5 L45.2 34.6 L45.2 34.7 L45.2 34.8 L45.2 34.9 L45.2 35.0 L46.5 38.7 L46.5 38.7 L46.5 38.8 L46.6 38.9 L46.7 39.0 L46.7 39.1 L46.8 39.1 L46.9 39.2 L47.0 39.2 L47.1 39.3 L47.2 39.3 L47.2 39.3 L47.3 39.3 L52.0 39.6 L52.1 39.6 L52.2 39.6 L52.3 39.6 L52.4 39.6 L52.5 39.5 L52.6 39.5 L52.7 39.4 L52.8 39.4 L52.8 39.3 L52.9 39.2 L53.0 39.1 L53.0 39.0 L53.1 39.0 L53.9 36.6 L53.9 36.5 L53.9 36.4 L53.9 36.3 L53.9 36.2 L53.9 36.1 L53.9 36.0 L53.9 35.9 L53.8 35.8 L53.8 35.7 L53.7 35.6 L53.7 35.6 L50.7 32.4 Z" fill="#fff"/><path d="M50.2 5.5 L50.2 5.4 L50.3 5.4 L50.3 5.3 L50.4 5.2 L50.4 5.1 L50.4 5.0 L50.4 4.9 L50.4 4.8 L50.4 4.7 L50.3 4.6 L50.3 4.5 L50.3 4.4 L50.2 4.3 L50.1 4.2 L50.1 4.2 L48.1 2.4 L48.0 2.3 L48.0 2.3 L47.9 2.2 L47.8 2.2 L47.7 2.2 L47.6 2.2 L47.5 2.1 L47.4 2.1 L47.3 2.1 L47.2 2.2 L47.1 2.2 L47.1 2.2 L45.5 2.9 L45.4 2.9 L45.4 3.0 L45.3 3.0 L45.2 3.1 L45.1 3.2 L45.1 3.3 L45.0 3.3 L45.0 3.4 L45.0 3.5 L44.9 3.6 L44.5 5.9 L44.5 6.0 L44.5 6.0 L44.5 6.1 L44.5 6.2 L44.5 6.3 L44.6 6.4 L44.6 6.5 L44.7 6.6 L44.7 6.7 L44.8 6.7 L44.9 6.8 L44.9 6.9 L46.9 8.2 L47.0 8.3 L47.0 8.3 L47.1 8.4 L47.2 8.4 L47.3 8.4 L47.4 8.4 L47.5 8.4 L47.6 8.4 L47.7 8.4 L47.8 8.3 L47.9 8.3 L48.0 8.2 L48.1 8.2 L48.2 8.1 L48.2 8.0 L50.2 5.5 Z" fill="#fff"/><path d="M22.1 51.8 L22.0 51.8 L21.9 51.8 L21.8 51.8 L21.7 51.9 L21.6 51.9 L21.5 51.9 L21.5 52.0 L21.4 52.1 L21.3 52.1 L21.2 52.2 L21.2 52.3 L21.1 52.4 L21.1 52.5 L21.1 52.6 L21.0 52.7 L21.0 52.8 L20.6 59.3 L20.6 59.4 L20.6 59.5 L20.6 59.6 L20.6 59.7 L20.7 59.8 L20.7 59.9 L20.8 60.0 L20.8 60.1 L20.9 60.1 L21.0 60.2 L21.1 60.3 L21.1 60.3 L21.2 60.4 L21.3 60.4 L21.4 60.4 L21.5 60.4 L21.6 60.4 L21.7 60.4 L21.8 60.4 L21.9 60.4 L22.0 60.3 L22.1 60.3 L22.2 60.2 L22.3 60.1 L25.3 57.4 L25.3 57.3 L25.4 57.2 L25.5 57.1 L25.5 57.0 L25.5 56.9 L25.6 56.8 L25.6 56.7 L25.6 56.6 L25.6 56.5 L25.6 56.4 L25.6 56.4 L25.5 56.3 L24.0 52.5 L24.0 52.5 L24.0 52.4 L23.9 52.3 L23.8 52.2 L23.8 52.1 L23.7 52.1 L23.6 52.0 L23.5 52.0 L23.4 52.0 L23.3 51.9 L23.2 51.9 L22.1 51.8 Z" fill="#fff"/><path d="M18.0 29.1 L18.1 29.2 L18.1 29.3 L18.1 29.4 L18.2 29.5 L18.2 29.5 L18.3 29.6 L18.4 29.7 L18.5 29.7 L18.5 29.8 L18.6 29.8 L18.7 29.9 L18.8 29.9 L18.9 29.9 L19.0 29.9 L19.1 29.9 L19.2 29.9 L19.3 29.8 L25.9 27.7 L26.0 27.7 L26.1 27.6 L26.2 27.6 L26.2 27.5 L26.3 27.5 L26.4 27.4 L26.4 27.3 L26.5 27.2 L26.5 27.1 L26.6 27.1 L26.6 27.0 L26.6 26.9 L26.6 26.8 L26.6 26.7 L26.6 26.6 L26.6 26.5 L26.5 26.4 L26.5 26.3 L26.4 26.2 L26.4 26.1 L26.3 26.1 L26.3 26.0 L26.2 25.9 L26.1 25.9 L26.0 25.9 L25.9 25.8 L25.8 25.8 L25.7 25.8 L20.8 25.2 L20.7 25.2 L20.6 25.2 L20.5 25.2 L20.4 25.2 L20.4 25.2 L20.3 25.3 L20.2 25.3 L20.1 25.4 L20.0 25.4 L20.0 25.5 L19.9 25.6 L19.9 25.6 L18.2 28.3 L18.1 28.4 L18.1 28.5 L18.0 28.6 L18.0 28.7 L18.0 28.8 L18.0 28.9 L18.0 29.0 L18.0 29.1 L18.0 29.1 Z" fill="#fff"/><path d="M43.3 63.4 L43.2 63.5 L43.1 63.5 L43.0 63.5 L42.9 63.6 L42.9 63.7 L42.8 63.7 L42.7 63.8 L42.7 63.9 L42.6 64.0 L42.6 64.1 L42.6 64.2 L42.6 64.3 L42.5 64.4 L42.6 64.5 L42.6 64.6 L42.6 64.7 L42.6 64.8 L42.7 64.9 L42.7 64.9 L42.8 65.0 L42.8 65.1 L42.9 65.2 L43.0 65.2 L43.1 65.3 L43.2 65.3 L43.3 65.4 L43.3 65.4 L43.4 65.4 L43.5 65.4 L45.4 65.4 L45.5 65.4 L45.6 65.4 L45.7 65.4 L45.8 65.3 L45.9 65.3 L46.0 65.2 L46.0 65.2 L46.1 65.1 L46.2 65.0 L46.2 65.0 L46.7 64.4 L46.7 64.3 L46.8 64.2 L46.8 64.1 L46.8 64.0 L46.8 63.9 L46.8 63.8 L46.8 63.7 L46.8 63.6 L46.8 63.5 L46.8 63.4 L46.7 63.4 L46.7 63.3 L46.6 63.2 L46.6 63.1 L46.5 63.1 L46.4 63.0 L46.3 62.9 L46.3 62.9 L46.2 62.9 L46.1 62.8 L46.0 62.8 L45.9 62.8 L45.8 62.8 L45.7 62.8 L45.6 62.8 L43.3 63.4 Z" fill="#fff"/><path d="M65.4 -0.3 L65.4 -0.4 L65.4 -0.5 L65.4 -0.6 L65.3 -0.7 L65.3 -0.8 L65.2 -0.8 L65.2 -0.9 L65.1 -1.0 L65.0 -1.1 L65.0 -1.1 L64.9 -1.2 L64.8 -1.2 L64.7 -1.2 L64.6 -1.3 L64.5 -1.3 L64.4 -1.3 L64.3 -1.3 L64.2 -1.3 L64.1 -1.3 L64.0 -1.2 L64.0 -1.2 L63.9 -1.1 L63.8 -1.1 L63.7 -1.0 L63.7 -1.0 L63.6 -0.9 L63.5 -0.8 L63.5 -0.7 L62.9 0.6 L62.9 0.6 L62.8 0.7 L62.8 0.8 L62.8 0.9 L62.8 1.0 L62.8 1.1 L63.0 2.3 L63.0 2.4 L63.0 2.4 L63.0 2.5 L63.1 2.6 L63.1 2.7 L63.2 2.8 L63.3 2.9 L63.4 2.9 L63.4 3.0 L63.5 3.0 L63.6 3.1 L63.7 3.1 L63.8 3.1 L63.9 3.1 L64.4 3.1 L64.5 3.1 L64.6 3.1 L64.7 3.1 L64.8 3.1 L64.8 3.0 L64.9 3.0 L65.0 2.9 L65.1 2.9 L65.2 2.8 L65.2 2.7 L65.3 2.6 L65.3 2.5 L65.4 2.4 L65.4 2.3 L65.4 2.2 L65.4 2.1 L65.4 -0.3 Z" fill="#fff"/><path d="M36.1 52.8 L36.1 52.7 L36.0 52.6 L36.0 52.6 L35.9 52.5 L35.9 52.4 L35.8 52.3 L35.8 52.3 L35.7 52.2 L35.6 52.1 L35.5 52.1 L34.4 51.6 L34.3 51.6 L34.2 51.6 L34.1 51.5 L34.0 51.5 L33.9 51.5 L33.8 51.6 L33.7 51.6 L33.6 51.6 L33.5 51.6 L33.4 51.7 L33.3 51.7 L33.2 51.8 L33.2 51.8 L33.1 51.9 L33.0 52.0 L33.0 52.1 L32.9 52.1 L32.9 52.2 L31.9 55.1 L31.9 55.2 L31.9 55.3 L31.9 55.4 L31.9 55.5 L31.9 55.6 L31.9 55.7 L31.9 55.8 L32.0 55.8 L32.0 55.9 L32.1 56.0 L32.1 56.1 L32.2 56.2 L33.9 57.6 L33.9 57.7 L34.0 57.7 L34.1 57.8 L34.2 57.8 L34.3 57.8 L34.4 57.8 L34.5 57.8 L34.6 57.8 L34.7 57.8 L34.8 57.8 L34.9 57.8 L36.1 57.3 L36.2 57.3 L36.3 57.2 L36.4 57.2 L36.5 57.1 L36.5 57.0 L36.6 57.0 L36.7 56.9 L36.7 56.8 L36.7 56.7 L36.8 56.6 L36.8 56.5 L36.8 56.4 L36.8 56.3 L36.8 56.2 L36.1 52.8 Z" fill="#fff"/><path d="M19.8 52.9 L19.8 52.8 L19.8 52.7 L19.8 52.6 L19.8 52.5 L19.7 52.4 L19.7 52.3 L19.6 52.2 L19.6 52.1 L19.5 52.1 L19.4 52.0 L19.3 52.0 L19.3 51.9 L19.2 51.9 L19.1 51.8 L19.0 51.8 L15.8 51.3 L15.7 51.3 L15.6 51.3 L15.5 51.3 L15.4 51.3 L15.3 51.3 L15.2 51.4 L15.1 51.4 L15.0 51.5 L14.9 51.6 L14.9 51.6 L12.2 54.7 L12.2 54.7 L12.1 54.8 L12.1 54.9 L12.0 55.0 L12.0 55.1 L12.0 55.2 L12.0 55.3 L12.0 55.4 L12.0 55.5 L12.0 55.6 L12.1 55.7 L12.1 55.8 L12.9 57.3 L12.9 57.4 L13.0 57.5 L13.0 57.6 L13.1 57.6 L13.2 57.7 L13.3 57.7 L13.4 57.8 L13.5 57.8 L18.1 59.3 L18.2 59.3 L18.3 59.3 L18.4 59.3 L18.5 59.3 L18.6 59.3 L18.7 59.3 L18.8 59.3 L18.9 59.2 L19.0 59.2 L19.1 59.1 L19.2 59.0 L19.2 59.0 L19.3 58.9 L19.3 58.8 L19.4 58.7 L19.4 58.6 L19.4 58.5 L19.4 58.4 L19.8 52.9 Z" fill="#fff"/><path d="M32.4 50.3 L32.5 50.3 L32.6 50.4 L32.7 50.4 L32.8 50.4 L32.9 50.4 L33.0 50.4 L33.1 50.4 L33.2 50.4 L33.2 50.4 L33.3 50.4 L33.4 50.3 L33.5 50.3 L33.6 50.2 L33.7 50.2 L33.7 50.1 L33.8 50.0 L33.8 49.9 L33.9 49.8 L33.9 49.8 L35.4 45.2 L35.4 45.1 L35.5 45.0 L35.5 44.9 L35.5 44.8 L35.5 44.7 L35.4 44.6 L35.4 44.5 L35.4 44.4 L35.3 44.3 L35.2 44.1 L35.1 44.0 L35.0 43.9 L35.0 43.9 L34.9 43.8 L34.8 43.7 L34.7 43.7 L34.7 43.7 L34.6 43.6 L34.5 43.6 L34.4 43.6 L34.3 43.6 L34.2 43.6 L34.1 43.6 L34.0 43.7 L29.5 45.1 L29.4 45.2 L29.3 45.2 L29.2 45.3 L29.1 45.3 L29.1 45.4 L29.0 45.5 L28.9 45.6 L28.9 45.7 L28.9 45.8 L28.8 45.9 L28.8 46.0 L28.8 46.1 L28.8 46.2 L28.9 47.5 L28.9 47.6 L28.9 47.7 L28.9 47.8 L29.0 47.9 L29.0 48.0 L29.1 48.0 L29.1 48.1 L29.2 48.2 L29.3 48.2 L29.3 48.3 L32.4 50.3 Z" fill="#fff"/><path d="M4.1 56.8 L4.0 56.9 L3.9 57.0 L3.9 57.0 L3.8 57.1 L3.8 57.2 L3.7 57.3 L3.7 57.4 L3.7 57.5 L3.3 60.0 L3.2 60.1 L3.2 60.2 L3.2 60.3 L3.3 60.4 L3.3 60.5 L3.3 60.6 L3.4 60.7 L3.4 60.7 L3.5 60.8 L7.3 65.1 L7.4 65.1 L7.5 65.2 L7.5 65.2 L7.6 65.3 L7.7 65.3 L7.8 65.4 L7.9 65.4 L8.0 65.4 L8.1 65.4 L8.7 65.4 L8.8 65.4 L8.9 65.4 L9.0 65.4 L9.1 65.3 L9.2 65.3 L9.3 65.2 L9.3 65.2 L9.4 65.1 L9.5 65.1 L9.5 65.0 L9.6 64.9 L9.6 64.8 L9.7 64.7 L11.8 58.6 L11.9 58.5 L11.9 58.4 L11.9 58.3 L11.9 58.2 L11.9 58.1 L11.9 58.0 L11.8 57.9 L11.8 57.8 L10.9 56.0 L10.9 56.0 L10.8 55.9 L10.7 55.8 L10.7 55.7 L10.6 55.7 L10.5 55.6 L10.4 55.6 L10.3 55.5 L10.2 55.5 L7.3 54.9 L7.2 54.9 L7.1 54.9 L7.0 54.9 L6.9 54.9 L6.8 54.9 L6.7 55.0 L6.6 55.0 L6.6 55.1 L4.1 56.8 Z" fill="#fff"/><path d="M22.0 -2.4 L21.9 -2.4 L21.8 -2.4 L21.7 -2.4 L21.6 -2.3 L21.5 -2.3 L21.4 -2.2 L21.3 -2.2 L21.3 -2.1 L21.2 -2.0 L21.1 -2.0 L21.1 -1.9 L21.0 -1.8 L21.0 -1.7 L21.0 -1.6 L21.0 -1.5 L21.0 -1.4 L21.0 -1.3 L21.0 -1.2 L21.0 -1.1 L21.0 -1.1 L21.0 -1.0 L21.1 -0.9 L21.1 -0.8 L23.6 2.5 L23.6 2.5 L23.7 2.6 L23.8 2.7 L23.9 2.7 L24.0 2.8 L24.0 2.8 L24.1 2.8 L24.2 2.9 L24.3 2.9 L24.4 2.9 L24.5 2.9 L24.6 2.8 L24.7 2.8 L24.8 2.8 L24.9 2.7 L25.0 2.7 L25.1 2.6 L25.1 2.5 L27.1 0.3 L27.2 0.3 L27.2 0.2 L27.3 0.1 L27.3 0.0 L27.3 -0.1 L27.4 -0.2 L27.4 -0.3 L27.4 -0.4 L27.4 -0.5 L27.3 -0.6 L27.3 -0.6 L27.3 -0.7 L27.2 -0.8 L27.2 -0.9 L27.1 -1.0 L27.1 -1.0 L27.0 -1.1 L26.9 -1.2 L25.2 -2.2 L25.2 -2.3 L25.1 -2.3 L25.0 -2.4 L24.9 -2.4 L24.8 -2.4 L24.7 -2.4 L22.0 -2.4 Z" fill="#fff"/><path d="M36.6 20.8 L36.7 20.7 L36.7 20.6 L36.7 20.5 L36.7 20.4 L36.6 20.3 L36.6 20.2 L36.6 20.1 L36.5 20.0 L36.5 20.0 L36.4 19.9 L36.3 19.8 L36.3 19.8 L36.2 19.7 L36.1 19.7 L36.0 19.6 L35.9 19.6 L35.8 19.6 L35.7 19.6 L35.6 19.6 L35.5 19.6 L29.4 20.4 L29.3 20.5 L29.2 20.5 L29.1 20.5 L29.1 20.6 L29.0 20.6 L28.9 20.7 L28.8 20.8 L28.8 20.9 L28.7 20.9 L28.7 21.0 L28.6 21.1 L28.6 21.2 L28.6 21.3 L28.2 25.1 L28.2 25.2 L28.2 25.3 L28.2 25.4 L28.2 25.4 L28.2 25.5 L28.8 27.1 L28.9 27.2 L28.9 27.3 L29.0 27.4 L29.3 27.6 L29.3 27.7 L29.4 27.8 L29.5 27.8 L29.6 27.9 L29.7 27.9 L29.8 28.0 L29.9 28.0 L30.0 28.0 L30.1 28.0 L30.2 28.0 L30.3 28.0 L31.3 27.7 L31.4 27.7 L31.4 27.6 L31.5 27.6 L31.6 27.6 L31.7 27.5 L35.6 24.2 L35.7 24.1 L35.8 24.1 L35.8 24.0 L35.9 23.9 L35.9 23.8 L35.9 23.7 L36.0 23.6 L36.6 20.8 Z" fill="#fff"/><path d="M0.3 -2.4 L0.2 -2.4 L0.1 -2.4 L-0.0 -2.4 L-0.1 -2.3 L-0.2 -2.3 L-0.3 -2.2 L-0.4 -2.2 L-0.5 -2.1 L-0.5 -2.0 L-0.6 -2.0 L-0.6 -1.9 L-0.7 -1.8 L-0.7 -1.7 L-0.7 -1.6 L-0.7 -1.5 L-0.7 -1.4 L-0.7 -1.3 L-0.7 -1.2 L-0.7 -1.1 L-0.7 -1.0 L-0.6 -0.9 L-0.6 -0.8 L-0.5 -0.8 L-0.4 -0.7 L-0.4 -0.6 L-0.3 -0.6 L0.8 0.1 L0.9 0.2 L1.0 0.2 L1.1 0.3 L1.1 0.3 L1.2 0.3 L1.3 0.3 L1.4 0.3 L1.5 0.3 L1.6 0.3 L1.7 0.2 L1.8 0.2 L1.9 0.1 L2.0 0.1 L2.0 0.0 L2.8 -0.7 L2.8 -0.8 L2.9 -0.8 L2.9 -0.9 L3.0 -1.0 L3.0 -1.1 L3.0 -1.2 L3.0 -1.3 L3.1 -1.4 L3.0 -1.5 L3.0 -1.6 L3.0 -1.7 L3.0 -1.8 L2.9 -1.9 L2.9 -2.0 L2.8 -2.0 L2.8 -2.1 L2.7 -2.2 L2.6 -2.2 L2.5 -2.3 L2.4 -2.3 L2.3 -2.4 L2.2 -2.4 L2.1 -2.4 L2.1 -2.4 L0.3 -2.4 Z" fill="#fff"/><path d="M63.0 58.3 L63.0 58.4 L63.1 58.5 L63.1 58.6 L63.2 58.7 L63.3 58.7 L63.4 58.8 L63.4 58.8 L63.5 58.9 L63.6 58.9 L63.7 58.9 L63.8 58.9 L64.3 59.0 L64.4 59.0 L64.5 59.0 L64.6 58.9 L64.7 58.9 L64.8 58.9 L64.9 58.8 L65.0 58.8 L65.0 58.7 L65.1 58.7 L65.2 58.6 L65.2 58.5 L65.3 58.4 L65.3 58.3 L65.4 58.2 L65.4 58.2 L65.4 58.1 L65.4 58.0 L65.4 56.4 L65.4 56.3 L65.4 56.2 L65.4 56.1 L65.3 56.0 L65.3 55.9 L65.2 55.8 L65.2 55.8 L65.1 55.7 L65.0 55.6 L65.0 55.6 L64.9 55.5 L64.8 55.5 L64.7 55.4 L64.6 55.4 L64.5 55.4 L64.4 55.4 L64.3 55.4 L64.2 55.4 L64.0 55.5 L63.9 55.5 L63.8 55.5 L63.7 55.6 L63.6 55.6 L63.6 55.7 L63.5 55.7 L63.4 55.8 L63.4 55.9 L63.3 56.0 L63.3 56.1 L62.8 57.3 L62.8 57.4 L62.8 57.5 L62.7 57.6 L62.7 57.7 L62.8 57.8 L62.8 57.9 L62.8 58.0 L62.8 58.1 L63.0 58.3 Z" fill="#fff"/><path d="M15.9 30.4 L16.0 30.4 L16.1 30.3 L16.2 30.3 L16.3 30.2 L16.4 30.2 L16.4 30.1 L16.5 30.0 L16.6 30.0 L16.6 29.9 L16.7 29.8 L16.7 29.7 L16.7 29.6 L16.7 29.5 L16.7 29.4 L16.7 29.3 L16.7 29.2 L16.7 29.1 L16.7 29.0 L16.6 28.9 L16.6 28.9 L16.5 28.8 L16.4 28.7 L16.4 28.6 L16.3 28.6 L12.7 26.1 L12.6 26.1 L12.6 26.0 L12.5 26.0 L12.4 26.0 L12.3 25.9 L12.2 25.9 L12.1 25.9 L12.0 25.9 L11.9 26.0 L11.8 26.0 L11.7 26.0 L11.6 26.1 L11.5 26.1 L9.1 28.1 L9.0 28.2 L8.9 28.2 L8.9 28.3 L8.8 28.4 L8.8 28.5 L8.7 28.6 L8.7 28.7 L8.7 28.8 L8.7 28.8 L8.7 28.9 L8.7 29.0 L8.7 29.1 L8.7 29.2 L8.8 29.3 L9.5 31.0 L9.6 31.1 L9.6 31.2 L9.7 31.2 L9.8 31.3 L9.8 31.4 L9.9 31.4 L10.0 31.5 L10.1 31.5 L10.2 31.5 L10.3 31.6 L10.4 31.6 L10.5 31.6 L10.6 31.6 L10.7 31.5 L15.9 30.4 Z" fill="#fff"/><path d="M34.0 3.0 L34.1 3.1 L34.1 3.1 L34.2 3.2 L34.3 3.2 L34.4 3.2 L34.5 3.3 L34.6 3.3 L34.7 3.3 L34.8 3.3 L34.9 3.2 L35.0 3.2 L35.1 3.2 L35.2 3.1 L35.3 3.0 L35.3 3.0 L35.4 2.9 L35.5 2.8 L35.5 2.7 L35.6 2.6 L35.6 2.5 L35.6 2.4 L36.3 -1.2 L36.3 -1.3 L36.3 -1.4 L36.3 -1.5 L36.3 -1.6 L36.3 -1.7 L36.2 -1.8 L36.2 -1.9 L36.1 -2.0 L36.1 -2.0 L36.0 -2.1 L35.9 -2.2 L35.9 -2.2 L35.8 -2.3 L35.7 -2.3 L35.6 -2.4 L35.5 -2.4 L35.4 -2.4 L35.3 -2.4 L31.2 -2.4 L31.1 -2.4 L31.0 -2.4 L30.9 -2.4 L30.8 -2.3 L30.7 -2.3 L30.6 -2.2 L30.5 -2.2 L30.5 -2.1 L30.4 -2.0 L30.3 -1.9 L30.1 -1.5 L30.0 -1.4 L30.0 -1.3 L30.0 -1.2 L29.9 -1.1 L29.9 -1.0 L29.9 -0.9 L29.9 -0.8 L30.0 -0.7 L30.0 -0.6 L30.0 -0.5 L30.1 -0.5 L30.1 -0.4 L30.2 -0.3 L30.3 -0.2 L34.0 3.0 Z" fill="#fff"/><path d="M44.6 61.9 L44.7 61.8 L44.7 61.8 L44.8 61.8 L44.9 61.7 L45.0 61.6 L45.1 61.6 L45.1 61.5 L45.2 61.4 L45.2 61.3 L45.3 61.2 L45.3 61.2 L45.3 61.1 L45.3 61.0 L45.3 60.9 L45.3 60.8 L45.3 60.7 L45.3 60.6 L45.2 60.5 L45.2 60.4 L45.1 60.3 L43.9 58.5 L43.8 58.4 L43.7 58.3 L43.6 58.3 L43.6 58.2 L43.5 58.1 L43.4 58.1 L43.3 58.1 L43.2 58.1 L43.1 58.0 L43.0 58.0 L42.9 58.1 L40.2 58.5 L40.1 58.5 L40.0 58.5 L39.9 58.6 L39.8 58.6 L39.7 58.6 L39.7 58.7 L39.6 58.8 L39.5 58.8 L39.5 58.9 L39.4 59.0 L39.4 59.1 L39.4 59.2 L39.3 59.3 L39.3 59.4 L39.1 61.9 L39.1 62.0 L39.1 62.1 L39.1 62.2 L39.2 62.3 L39.2 62.4 L39.2 62.5 L39.3 62.6 L39.4 62.6 L39.4 62.7 L39.5 62.8 L39.6 62.8 L39.7 62.9 L39.8 62.9 L39.9 63.0 L40.0 63.0 L40.1 63.0 L40.2 63.0 L40.3 63.0 L40.4 63.0 L44.6 61.9 Z" fill="#fff"/><path d="M64.1 19.9 L64.2 20.0 L64.3 20.0 L64.4 20.0 L64.5 20.0 L64.6 20.0 L64.7 19.9 L64.8 19.9 L64.9 19.9 L65.0 19.8 L65.0 19.8 L65.1 19.7 L65.2 19.6 L65.2 19.5 L65.3 19.5 L65.3 19.4 L65.4 19.3 L65.4 19.2 L65.4 19.1 L65.4 19.0 L65.4 13.2 L65.4 13.1 L65.4 13.0 L65.4 12.9 L65.3 12.8 L65.3 12.7 L65.2 12.7 L65.2 12.6 L65.1 12.5 L65.0 12.4 L64.9 12.4 L64.9 12.3 L64.8 12.3 L64.7 12.3 L64.6 12.2 L62.2 11.8 L62.1 11.8 L62.0 11.8 L61.9 11.8 L61.8 11.8 L61.7 11.9 L61.6 11.9 L61.5 12.0 L61.4 12.0 L61.4 12.1 L61.3 12.1 L61.2 12.2 L61.2 12.3 L61.1 12.4 L61.1 12.5 L59.8 15.9 L59.8 16.0 L59.8 16.1 L59.7 16.2 L59.7 16.3 L59.7 16.4 L59.9 18.0 L59.9 18.1 L59.9 18.2 L60.0 18.3 L60.0 18.4 L60.0 18.4 L60.1 18.5 L60.2 18.6 L60.2 18.7 L60.3 18.7 L60.4 18.8 L60.5 18.8 L60.6 18.8 L64.1 19.9 Z" fill="#fff"/><path d="M1.6 60.5 L1.7 60.5 L1.8 60.4 L1.8 60.3 L1.9 60.3 L1.9 60.2 L2.0 60.1 L2.0 60.0 L2.0 59.9 L2.1 59.8 L2.4 57.9 L2.4 57.8 L2.4 57.7 L2.4 57.6 L2.4 57.5 L2.3 57.4 L2.3 57.3 L2.3 57.3 L2.2 57.2 L2.1 57.1 L2.1 57.0 L2.0 57.0 L1.9 56.9 L1.8 56.9 L1.7 56.8 L-1.0 55.8 L-1.1 55.7 L-1.2 55.7 L-1.3 55.7 L-1.4 55.7 L-1.5 55.7 L-1.6 55.7 L-1.7 55.7 L-1.8 55.8 L-1.9 55.8 L-2.0 55.9 L-2.0 55.9 L-2.1 56.0 L-2.2 56.1 L-2.2 56.1 L-2.3 56.2 L-2.3 56.3 L-2.4 56.4 L-2.4 56.5 L-2.4 56.6 L-2.4 56.7 L-2.4 61.2 L-2.4 61.3 L-2.4 61.4 L-2.4 61.5 L-2.3 61.6 L-2.3 61.7 L-2.2 61.8 L-2.2 61.9 L-2.1 61.9 L-2.0 62.0 L-2.0 62.1 L-1.9 62.1 L-1.8 62.2 L-1.7 62.2 L-1.6 62.2 L-1.5 62.2 L-1.4 62.2 L-1.3 62.2 L-1.2 62.2 L-1.1 62.2 L-1.0 62.2 L-1.0 62.1 L-0.9 62.1 L1.6 60.5 Z" fill="#fff"/><path d="M23.2 43.6 L23.1 43.5 L23.0 43.5 L22.9 43.5 L22.8 43.5 L22.7 43.5 L22.6 43.6 L22.5 43.6 L22.5 43.6 L22.4 43.7 L22.3 43.7 L22.2 43.8 L22.2 43.9 L22.1 44.0 L22.0 44.0 L22.0 44.1 L22.0 44.2 L21.9 44.3 L21.9 44.4 L21.9 44.5 L21.9 49.7 L21.9 49.8 L21.9 49.9 L22.0 50.0 L22.0 50.1 L22.0 50.2 L22.1 50.2 L22.1 50.3 L22.2 50.4 L22.3 50.5 L22.4 50.5 L22.4 50.6 L22.5 50.6 L22.6 50.6 L22.7 50.7 L22.8 50.7 L23.7 50.8 L23.8 50.8 L23.9 50.8 L24.0 50.7 L24.1 50.7 L24.2 50.7 L24.3 50.6 L24.4 50.6 L27.3 48.4 L27.4 48.3 L27.4 48.3 L27.5 48.2 L27.5 48.1 L27.6 48.0 L27.6 47.9 L27.7 47.8 L27.7 47.7 L27.7 47.6 L27.7 47.5 L27.6 45.6 L27.5 45.5 L27.5 45.4 L27.5 45.4 L27.5 45.3 L27.4 45.2 L27.4 45.1 L27.3 45.0 L27.2 44.9 L27.1 44.9 L27.1 44.8 L27.0 44.8 L26.9 44.8 L23.2 43.6 Z" fill="#fff"/><path d="M-2.4 39.5 L-2.4 39.6 L-2.4 39.7 L-2.4 39.8 L-2.3 39.9 L-2.3 40.0 L-2.2 40.1 L-2.2 40.1 L-2.1 40.2 L-2.0 40.3 L-1.9 40.3 L-1.9 40.4 L-1.8 40.4 L-1.7 40.5 L-1.6 40.5 L-1.5 40.5 L-1.4 40.5 L-1.3 40.5 L-1.2 40.5 L-1.1 40.5 L-1.0 40.4 L-0.9 40.4 L-0.8 40.3 L-0.7 40.3 L-0.7 40.2 L1.6 37.8 L1.7 37.7 L1.7 37.6 L1.8 37.5 L1.8 37.4 L1.8 37.3 L1.9 37.2 L1.9 37.1 L1.9 37.0 L1.9 36.9 L1.9 36.8 L1.8 36.8 L1.8 36.7 L1.7 36.6 L1.7 36.5 L1.6 36.4 L1.5 36.3 L1.5 36.3 L1.4 36.2 L1.3 36.2 L1.2 36.1 L1.1 36.1 L-1.2 35.6 L-1.3 35.6 L-1.4 35.6 L-1.5 35.6 L-1.6 35.6 L-1.7 35.6 L-1.8 35.6 L-1.9 35.7 L-1.9 35.7 L-2.0 35.8 L-2.1 35.9 L-2.2 35.9 L-2.2 36.0 L-2.3 36.1 L-2.3 36.2 L-2.4 36.3 L-2.4 36.4 L-2.4 36.5 L-2.4 36.6 L-2.4 39.5 Z" fill="#fff"/><path d="M48.6 47.1 L48.7 47.2 L48.7 47.3 L48.8 47.3 L48.9 47.3 L49.0 47.4 L49.1 47.4 L49.2 47.4 L49.3 47.4 L49.4 47.4 L49.5 47.4 L49.6 47.4 L49.7 47.3 L49.8 47.3 L49.9 47.2 L49.9 47.1 L52.9 44.4 L53.0 44.4 L53.1 44.3 L53.1 44.2 L53.2 44.1 L53.2 44.0 L53.2 43.9 L53.2 43.8 L53.2 43.7 L53.2 43.6 L53.2 43.5 L52.9 41.6 L52.8 41.5 L52.8 41.4 L52.8 41.3 L52.7 41.3 L52.6 41.2 L52.6 41.1 L52.5 41.0 L52.4 41.0 L52.3 40.9 L52.2 40.9 L52.1 40.9 L52.0 40.8 L51.9 40.8 L47.2 40.5 L47.1 40.5 L47.0 40.5 L46.9 40.6 L46.8 40.6 L46.7 40.6 L46.6 40.7 L46.5 40.7 L46.5 40.8 L46.4 40.9 L46.3 41.0 L46.3 41.0 L45.2 42.9 L45.2 43.0 L45.1 43.1 L45.1 43.2 L45.1 43.3 L45.1 43.4 L45.1 43.5 L45.1 43.6 L45.1 43.7 L45.1 43.8 L45.2 43.8 L45.2 43.9 L45.3 44.0 L45.3 44.1 L45.4 44.1 L48.6 47.1 Z" fill="#fff"/><path d="M61.3 30.7 L61.3 30.6 L61.3 30.5 L61.3 30.4 L61.3 30.3 L61.3 30.2 L61.2 30.1 L61.2 30.0 L61.1 29.9 L61.1 29.9 L58.1 26.7 L58.0 26.6 L57.9 26.6 L57.8 26.5 L57.7 26.5 L57.7 26.4 L57.6 26.4 L57.5 26.4 L57.4 26.4 L57.3 26.4 L57.2 26.4 L57.1 26.4 L57.0 26.4 L56.9 26.5 L51.9 28.7 L51.8 28.8 L51.7 28.8 L51.7 28.9 L51.6 28.9 L51.5 29.0 L51.5 29.1 L51.4 29.2 L51.4 29.3 L51.4 29.4 L51.3 29.5 L51.1 30.5 L51.1 30.6 L51.1 30.7 L51.1 30.8 L51.2 30.9 L51.2 31.0 L51.2 31.1 L51.3 31.2 L51.3 31.3 L51.4 31.4 L54.6 34.8 L54.7 34.9 L54.8 35.0 L54.9 35.0 L54.9 35.1 L55.0 35.1 L55.1 35.1 L55.2 35.1 L55.3 35.1 L55.4 35.1 L55.5 35.1 L56.0 35.0 L56.1 35.0 L56.2 35.0 L56.3 34.9 L56.4 34.9 L60.8 31.9 L60.9 31.9 L61.0 31.8 L61.0 31.8 L61.1 31.7 L61.1 31.6 L61.2 31.5 L61.2 31.4 L61.2 31.3 L61.3 31.2 L61.3 30.7 Z" fill="#fff"/><path d="M31.7 52.1 L31.7 52.0 L31.7 51.9 L31.7 51.9 L31.7 51.8 L31.7 51.7 L31.7 51.6 L31.7 51.5 L31.6 51.4 L31.6 51.3 L31.5 51.2 L31.5 51.1 L31.4 51.1 L31.3 51.0 L31.3 51.0 L28.9 49.5 L28.9 49.4 L28.8 49.4 L28.7 49.3 L28.6 49.3 L28.5 49.3 L28.4 49.3 L28.3 49.3 L28.2 49.3 L28.1 49.4 L28.0 49.4 L27.9 49.4 L27.8 49.5 L25.6 51.2 L25.5 51.2 L25.4 51.3 L25.4 51.4 L25.3 51.5 L25.3 51.5 L25.2 51.6 L25.2 51.7 L25.2 51.8 L25.2 51.9 L25.2 52.0 L25.2 52.1 L25.2 52.2 L25.2 52.3 L26.7 55.9 L26.7 56.0 L26.8 56.1 L26.8 56.2 L26.9 56.3 L27.0 56.3 L27.0 56.4 L27.1 56.4 L27.2 56.5 L27.3 56.5 L27.4 56.6 L27.5 56.6 L27.8 56.6 L27.9 56.6 L28.0 56.6 L28.0 56.6 L28.1 56.6 L28.2 56.5 L28.3 56.5 L30.1 55.6 L30.2 55.6 L30.3 55.5 L30.4 55.5 L30.4 55.4 L30.5 55.3 L30.6 55.2 L30.6 55.2 L30.6 55.1 L31.7 52.1 Z" fill="#fff"/><path d="M21.6 39.9 L21.6 40.0 L21.5 40.0 L21.4 40.1 L21.3 40.2 L21.3 40.2 L21.2 40.3 L21.2 40.4 L21.1 40.5 L21.1 40.6 L21.1 40.7 L21.1 40.8 L21.1 40.9 L21.1 41.0 L21.1 41.1 L21.1 41.2 L21.2 41.3 L21.2 41.3 L21.3 41.4 L21.3 41.5 L21.4 41.6 L21.5 41.6 L21.6 41.7 L21.6 41.8 L21.7 41.8 L21.8 41.9 L26.2 43.3 L26.3 43.3 L26.4 43.3 L26.5 43.3 L26.6 43.3 L26.7 43.3 L26.8 43.3 L26.8 43.2 L26.9 43.2 L27.0 43.1 L27.1 43.1 L27.2 43.0 L27.2 43.0 L27.3 42.9 L27.4 42.8 L27.4 42.7 L27.4 42.6 L27.5 42.5 L27.9 40.3 L27.9 40.2 L27.9 40.1 L27.9 40.1 L27.9 40.0 L27.9 39.9 L27.8 39.8 L27.8 39.7 L27.7 39.6 L27.7 39.5 L27.6 39.4 L27.5 39.4 L27.5 39.3 L27.4 39.3 L25.8 38.4 L25.7 38.4 L25.6 38.3 L25.6 38.3 L25.5 38.3 L25.4 38.3 L25.3 38.3 L25.2 38.3 L25.1 38.3 L25.0 38.4 L24.9 38.4 L21.6 39.9 Z" fill="#fff"/><path d="M60.4 63.6 L60.3 63.7 L60.3 63.8 L60.2 63.9 L60.2 63.9 L60.1 64.0 L60.1 64.1 L60.1 64.2 L60.1 64.3 L60.1 64.4 L60.1 64.5 L60.1 64.6 L60.1 64.7 L60.1 64.8 L60.2 64.9 L60.2 65.0 L60.3 65.0 L60.4 65.1 L60.4 65.2 L60.5 65.2 L60.6 65.3 L60.7 65.3 L60.8 65.4 L60.9 65.4 L61.0 65.4 L61.1 65.4 L62.5 65.4 L62.6 65.4 L62.7 65.4 L62.8 65.4 L62.9 65.3 L63.0 65.3 L63.1 65.2 L63.1 65.2 L63.2 65.1 L63.3 65.0 L63.3 65.0 L63.4 64.9 L63.4 64.8 L63.5 64.7 L63.5 64.6 L63.5 64.5 L63.5 64.4 L63.5 64.3 L63.5 64.2 L63.5 64.1 L63.4 64.1 L63.4 64.0 L63.4 63.9 L63.3 63.8 L62.7 63.0 L62.7 63.0 L62.6 62.9 L62.5 62.8 L62.5 62.8 L62.4 62.7 L62.3 62.7 L62.2 62.7 L62.1 62.7 L62.0 62.6 L61.9 62.6 L61.8 62.6 L61.7 62.7 L61.6 62.7 L61.5 62.7 L61.4 62.8 L61.4 62.8 L61.3 62.9 L60.4 63.6 Z" fill="#fff"/><path d="M50.7 61.8 L50.6 61.9 L50.6 62.0 L50.6 62.1 L50.6 62.2 L50.6 62.3 L50.7 62.4 L50.7 62.5 L50.7 62.6 L50.8 62.6 L50.8 62.7 L50.9 62.8 L51.0 62.9 L51.1 62.9 L51.2 63.0 L51.5 63.2 L51.6 63.2 L51.7 63.2 L51.8 63.3 L51.9 63.3 L52.0 63.3 L52.1 63.3 L52.2 63.2 L52.3 63.2 L52.4 63.2 L52.5 63.1 L52.6 63.1 L52.6 63.0 L52.7 62.9 L52.8 62.9 L56.1 58.3 L56.2 58.2 L56.2 58.1 L56.2 58.0 L56.3 57.9 L56.3 57.8 L56.3 57.7 L56.3 57.6 L56.3 57.5 L56.3 57.4 L56.2 57.3 L56.2 57.2 L56.1 57.1 L56.1 57.1 L56.0 57.0 L55.9 56.9 L55.9 56.9 L55.8 56.8 L55.7 56.8 L54.9 56.4 L54.8 56.4 L54.7 56.4 L54.6 56.4 L54.5 56.4 L54.4 56.4 L54.3 56.4 L54.2 56.4 L54.1 56.4 L54.0 56.5 L54.0 56.5 L53.9 56.6 L53.8 56.7 L51.6 59.0 L51.5 59.0 L51.5 59.1 L51.4 59.2 L51.4 59.3 L51.3 59.4 L50.7 61.8 Z" fill="#fff"/><path d="M3.2 12.1 L3.2 12.0 L3.2 11.9 L3.1 11.8 L3.0 11.8 L3.0 11.7 L2.9 11.6 L2.8 11.6 L2.7 11.5 L2.6 11.5 L2.5 11.5 L2.4 11.5 L2.3 11.4 L2.2 11.4 L2.1 11.5 L2.0 11.5 L1.9 11.5 L1.8 11.5 L-1.8 13.4 L-1.9 13.5 L-2.0 13.5 L-2.1 13.6 L-2.2 13.7 L-2.2 13.7 L-2.3 13.8 L-2.3 13.9 L-2.4 14.0 L-2.4 14.1 L-2.4 14.2 L-2.4 14.3 L-2.4 19.2 L-2.4 19.3 L-2.4 19.4 L-2.4 19.5 L-2.3 19.6 L-2.3 19.7 L-2.2 19.8 L-2.2 19.8 L-2.1 19.9 L-2.0 20.0 L-1.9 20.0 L-1.9 20.1 L-1.8 20.1 L-1.7 20.2 L-1.6 20.2 L2.7 21.0 L2.8 21.0 L2.9 21.0 L3.0 21.0 L3.1 21.0 L3.2 20.9 L3.3 20.9 L3.3 20.8 L3.4 20.8 L3.5 20.7 L3.6 20.7 L5.1 19.0 L5.2 18.9 L5.2 18.8 L5.3 18.7 L5.3 18.6 L5.4 18.6 L5.4 18.5 L5.4 18.4 L5.4 18.3 L5.4 18.2 L5.4 18.1 L5.3 18.0 L3.2 12.1 Z" fill="#fff"/><path d="M11.1 25.0 L11.2 24.9 L11.3 24.8 L11.3 24.7 L11.4 24.6 L11.4 24.6 L11.4 24.5 L11.5 24.4 L11.5 24.3 L11.5 24.2 L11.5 21.0 L11.5 20.9 L11.4 20.8 L11.4 20.7 L11.4 20.6 L11.3 20.5 L11.3 20.4 L11.2 20.3 L11.2 20.2 L11.1 20.2 L11.0 20.1 L10.9 20.1 L10.8 20.0 L10.7 20.0 L10.6 20.0 L7.0 19.4 L6.9 19.4 L6.8 19.4 L6.7 19.4 L6.6 19.4 L6.5 19.4 L6.4 19.5 L6.3 19.5 L6.2 19.6 L6.1 19.6 L6.1 19.7 L4.4 21.6 L4.3 21.6 L4.3 21.7 L4.2 21.8 L4.2 21.9 L4.1 22.0 L4.1 22.1 L4.1 22.2 L4.1 22.3 L4.1 22.4 L4.7 26.3 L4.7 26.4 L4.7 26.5 L4.8 26.6 L4.8 26.7 L4.9 26.7 L4.9 26.8 L5.0 26.9 L5.1 26.9 L5.1 27.0 L5.2 27.0 L5.3 27.1 L5.4 27.1 L7.1 27.6 L7.2 27.6 L7.3 27.6 L7.4 27.6 L7.5 27.6 L7.6 27.6 L7.6 27.6 L7.7 27.6 L7.8 27.5 L7.9 27.5 L8.0 27.4 L11.1 25.0 Z" fill="#fff"/><path d="M44.4 44.8 L44.3 44.7 L44.2 44.7 L44.1 44.6 L44.0 44.6 L43.9 44.6 L43.8 44.6 L43.7 44.5 L43.6 44.5 L43.5 44.6 L43.4 44.6 L43.3 44.6 L43.2 44.6 L43.2 44.7 L43.1 44.7 L41.7 45.8 L41.6 45.8 L41.5 45.9 L41.5 46.0 L41.4 46.1 L41.4 46.1 L41.3 46.2 L41.3 46.3 L41.3 46.4 L41.3 46.5 L41.1 49.8 L41.1 49.9 L41.1 50.0 L41.1 50.1 L41.1 50.2 L41.2 50.3 L41.2 50.4 L41.3 50.5 L41.3 50.5 L41.4 50.6 L41.5 50.7 L41.6 50.7 L43.8 52.0 L43.9 52.0 L44.0 52.1 L44.1 52.1 L44.2 52.1 L44.3 52.1 L44.4 52.1 L44.5 52.1 L44.6 52.1 L44.7 52.0 L44.8 52.0 L44.9 51.9 L48.0 49.9 L48.1 49.8 L48.1 49.8 L48.2 49.7 L48.3 49.6 L48.3 49.5 L48.3 49.4 L48.4 49.3 L48.4 49.2 L48.4 49.1 L48.4 49.0 L48.4 48.9 L48.4 48.8 L48.4 48.7 L48.3 48.7 L48.3 48.6 L48.2 48.5 L48.2 48.4 L48.1 48.3 L44.4 44.8 Z" fill="#fff"/><path d="M29.6 0.8 L29.6 0.7 L29.5 0.7 L29.4 0.6 L29.3 0.6 L29.2 0.6 L29.1 0.6 L29.0 0.6 L28.9 0.6 L28.8 0.6 L28.7 0.6 L28.6 0.6 L28.5 0.7 L28.5 0.7 L28.4 0.8 L28.3 0.8 L28.2 0.9 L25.0 4.4 L25.0 4.5 L24.9 4.6 L24.9 4.7 L24.8 4.8 L24.8 4.9 L24.8 5.0 L24.8 5.0 L24.8 5.1 L24.8 5.2 L24.8 5.3 L24.8 5.4 L24.8 5.5 L24.9 5.6 L24.9 5.7 L25.0 5.8 L25.1 5.9 L25.1 5.9 L25.2 6.0 L25.3 6.0 L30.7 8.9 L30.8 9.0 L30.9 9.0 L31.0 9.0 L31.1 9.0 L31.2 9.0 L31.3 9.0 L31.4 9.0 L33.3 8.6 L33.4 8.5 L33.5 8.5 L33.6 8.5 L33.7 8.4 L33.7 8.4 L33.8 8.3 L33.9 8.2 L33.9 8.2 L34.0 8.1 L34.0 8.0 L34.1 7.9 L34.1 7.8 L34.1 7.7 L34.4 5.5 L34.4 5.4 L34.4 5.3 L34.4 5.2 L34.3 5.2 L34.3 5.1 L34.3 5.0 L34.2 4.9 L34.2 4.8 L34.1 4.7 L34.0 4.7 L29.6 0.8 Z" fill="#fff"/><path d="M18.7 7.7 L18.8 7.8 L18.8 7.9 L18.9 7.9 L19.0 8.0 L19.1 8.0 L19.2 8.1 L19.3 8.1 L19.4 8.1 L19.5 8.1 L19.6 8.1 L19.7 8.1 L19.8 8.1 L19.9 8.0 L20.0 8.0 L20.1 8.0 L23.1 6.0 L23.2 5.9 L23.3 5.8 L23.3 5.8 L23.4 5.7 L23.4 5.6 L23.5 5.5 L23.5 5.4 L23.5 5.3 L23.5 5.2 L23.6 5.0 L23.6 4.9 L23.6 4.8 L23.6 4.7 L23.6 4.6 L23.5 4.5 L23.5 4.4 L23.5 4.3 L23.4 4.2 L20.2 -0.0 L20.2 -0.1 L20.1 -0.2 L20.0 -0.2 L20.0 -0.3 L19.9 -0.3 L19.8 -0.4 L19.7 -0.4 L19.6 -0.4 L19.5 -0.4 L19.4 -0.4 L19.3 -0.4 L19.2 -0.4 L19.1 -0.4 L19.0 -0.3 L18.9 -0.3 L18.9 -0.3 L18.8 -0.2 L15.9 2.2 L15.8 2.3 L15.7 2.4 L15.7 2.4 L15.6 2.5 L15.6 2.6 L15.6 2.7 L15.5 2.8 L15.5 2.9 L15.5 3.0 L15.5 3.1 L15.5 3.2 L15.6 3.3 L15.6 3.4 L15.7 3.5 L15.7 3.6 L18.7 7.7 Z" fill="#fff"/><path d="M55.9 6.1 L56.0 6.2 L56.1 6.2 L56.2 6.3 L56.3 6.3 L58.7 7.0 L58.8 7.0 L58.9 7.0 L59.0 7.0 L59.1 7.0 L59.2 7.0 L59.3 7.0 L59.4 6.9 L59.5 6.9 L59.5 6.8 L59.6 6.8 L59.7 6.7 L59.8 6.6 L59.8 6.6 L61.7 3.8 L61.8 3.7 L61.8 3.7 L61.8 3.6 L61.9 3.5 L61.9 3.4 L61.9 3.2 L61.9 3.1 L61.7 1.7 L61.7 1.6 L61.6 1.5 L61.6 1.4 L61.6 1.3 L61.5 1.3 L61.5 1.2 L61.4 1.1 L61.3 1.0 L61.3 1.0 L61.2 0.9 L61.1 0.9 L57.5 -0.7 L57.4 -0.7 L57.3 -0.7 L57.2 -0.8 L57.1 -0.8 L57.0 -0.8 L56.9 -0.7 L56.8 -0.7 L56.7 -0.7 L56.6 -0.7 L56.6 -0.6 L56.5 -0.6 L56.4 -0.5 L56.3 -0.4 L56.3 -0.3 L56.2 -0.3 L56.2 -0.2 L56.1 -0.1 L54.7 4.3 L54.7 4.4 L54.6 4.5 L54.6 4.6 L54.6 4.7 L54.7 4.8 L54.7 4.9 L54.7 5.0 L54.8 5.1 L54.8 5.2 L54.9 5.2 L54.9 5.3 L55.0 5.4 L55.9 6.1 Z" fill="#fff"/><path d="M50.2 12.5 L50.3 12.5 L50.4 12.5 L50.5 12.5 L50.6 12.5 L50.7 12.5 L50.8 12.5 L50.9 12.5 L51.0 12.4 L51.0 12.4 L51.1 12.3 L51.2 12.2 L51.3 12.2 L51.3 12.1 L54.5 7.7 L54.5 7.6 L54.6 7.5 L54.6 7.4 L54.6 7.3 L54.6 7.2 L54.6 7.1 L54.6 7.0 L54.6 6.9 L54.6 6.8 L54.6 6.7 L54.5 6.6 L54.5 6.5 L54.4 6.5 L54.3 6.4 L54.3 6.3 L53.7 5.9 L53.6 5.8 L53.5 5.8 L53.5 5.7 L53.4 5.7 L53.3 5.7 L52.4 5.5 L52.3 5.5 L52.2 5.5 L52.1 5.5 L52.0 5.5 L51.9 5.5 L51.8 5.6 L51.8 5.6 L51.7 5.7 L51.6 5.7 L51.5 5.8 L51.4 5.9 L48.6 9.5 L48.5 9.6 L48.5 9.7 L48.4 9.8 L48.4 9.9 L48.4 10.0 L48.4 10.0 L48.4 10.1 L48.3 11.1 L48.4 11.2 L48.4 11.3 L48.4 11.4 L48.4 11.5 L48.5 11.6 L48.5 11.7 L48.6 11.7 L48.6 11.8 L48.7 11.9 L48.8 11.9 L48.8 12.0 L48.9 12.0 L49.0 12.1 L50.2 12.5 Z" fill="#fff"/><path d="M38.0 17.6 L38.1 17.6 L38.1 17.5 L38.2 17.4 L38.3 17.3 L38.7 16.2 L38.8 16.1 L38.8 16.0 L38.8 15.9 L38.8 15.8 L38.8 15.7 L38.8 15.6 L38.8 15.5 L38.8 15.5 L38.7 15.4 L37.4 12.4 L37.3 12.3 L37.3 12.2 L37.2 12.1 L37.1 12.0 L34.8 9.9 L34.7 9.8 L34.6 9.8 L34.5 9.7 L34.4 9.7 L34.4 9.7 L34.3 9.7 L34.2 9.7 L34.1 9.6 L34.0 9.7 L33.9 9.7 L31.7 10.2 L31.6 10.2 L31.5 10.2 L31.4 10.3 L31.3 10.3 L31.3 10.4 L31.2 10.4 L31.1 10.5 L31.1 10.6 L27.2 16.6 L27.1 16.7 L27.1 16.8 L27.1 16.9 L27.0 17.0 L27.0 17.1 L27.0 17.2 L27.0 17.3 L27.1 17.4 L27.1 17.5 L27.1 17.6 L27.2 17.7 L27.2 17.8 L28.0 18.9 L28.1 19.0 L28.2 19.0 L28.2 19.1 L28.3 19.2 L28.4 19.2 L28.5 19.2 L28.6 19.3 L28.7 19.3 L28.8 19.3 L28.9 19.3 L29.0 19.3 L37.2 18.1 L37.3 18.1 L37.4 18.1 L37.5 18.0 L37.6 18.0 L37.6 17.9 L37.7 17.9 L38.0 17.6 Z" fill="#fff"/><path d="M35.7 42.2 L35.7 42.3 L35.7 42.4 L35.7 42.5 L35.7 42.6 L35.7 42.6 L35.8 42.7 L35.8 42.8 L35.8 42.9 L36.4 43.8 L36.4 43.9 L36.5 43.9 L36.6 44.0 L36.7 44.1 L36.7 44.1 L36.8 44.2 L36.9 44.2 L37.0 44.2 L40.1 45.0 L40.2 45.0 L40.3 45.0 L40.4 45.0 L40.5 45.0 L40.6 45.0 L40.7 44.9 L40.8 44.9 L40.9 44.9 L41.0 44.8 L41.6 44.3 L41.7 44.3 L41.7 44.2 L41.8 44.1 L41.9 44.1 L41.9 44.0 L41.9 43.9 L42.0 43.8 L42.0 43.7 L42.0 43.6 L42.0 43.5 L42.0 43.4 L42.0 43.3 L41.9 43.2 L41.9 43.1 L41.9 43.0 L41.8 43.0 L41.8 42.9 L38.1 38.7 L38.0 38.6 L37.9 38.5 L37.8 38.5 L37.7 38.4 L37.7 38.4 L37.6 38.4 L37.5 38.4 L37.4 38.3 L37.3 38.3 L37.2 38.3 L37.1 38.4 L37.0 38.4 L36.9 38.4 L36.8 38.5 L36.7 38.5 L36.7 38.6 L36.6 38.6 L36.5 38.7 L36.5 38.8 L36.4 38.9 L36.4 39.0 L36.3 39.0 L36.3 39.1 L35.7 42.2 Z" fill="#fff"/><path d="M64.1 60.2 L64.0 60.2 L63.9 60.2 L63.8 60.2 L63.7 60.2 L63.7 60.2 L63.6 60.3 L63.5 60.3 L63.4 60.4 L63.3 60.5 L63.3 60.5 L63.2 60.6 L63.2 60.7 L63.1 60.8 L63.1 60.9 L63.1 61.0 L63.1 61.1 L63.1 61.2 L63.1 61.3 L63.1 61.4 L63.1 61.5 L63.2 61.6 L63.2 61.7 L63.3 61.7 L63.6 62.2 L63.7 62.3 L63.7 62.3 L63.8 62.4 L63.9 62.5 L64.0 62.5 L64.1 62.5 L64.2 62.6 L64.3 62.6 L64.4 62.6 L64.5 62.6 L64.6 62.6 L64.7 62.6 L64.8 62.5 L64.9 62.5 L64.9 62.4 L65.0 62.4 L65.1 62.3 L65.2 62.2 L65.2 62.2 L65.3 62.1 L65.3 62.0 L65.4 61.9 L65.4 61.8 L65.4 61.7 L65.4 61.6 L65.4 61.2 L65.4 61.1 L65.4 61.0 L65.4 60.9 L65.3 60.8 L65.3 60.7 L65.2 60.6 L65.2 60.5 L65.1 60.5 L65.0 60.4 L64.9 60.3 L64.8 60.3 L64.8 60.2 L64.7 60.2 L64.6 60.2 L64.5 60.2 L64.1 60.2 Z" fill="#fff"/><path d="M60.8 56.8 L60.9 56.8 L61.0 56.8 L61.1 56.8 L61.2 56.8 L61.3 56.8 L61.4 56.8 L61.5 56.7 L61.6 56.7 L61.6 56.6 L61.7 56.5 L61.8 56.5 L61.8 56.4 L61.9 56.3 L61.9 56.2 L62.3 55.3 L62.3 55.2 L62.4 55.1 L62.4 55.0 L62.4 54.9 L62.4 54.8 L62.3 54.7 L61.4 50.5 L61.4 50.4 L61.4 50.3 L61.3 50.2 L61.3 50.1 L61.2 50.0 L61.2 50.0 L61.1 49.9 L61.0 49.9 L60.9 49.8 L60.9 49.8 L60.8 49.7 L60.7 49.7 L60.6 49.7 L60.5 49.7 L60.4 49.7 L60.3 49.7 L60.2 49.7 L60.1 49.8 L60.0 49.8 L59.9 49.8 L59.9 49.9 L59.8 50.0 L59.7 50.0 L58.4 51.5 L58.3 51.6 L58.3 51.7 L58.2 51.8 L58.2 51.9 L58.2 51.9 L58.2 52.0 L58.1 52.1 L58.1 52.2 L58.2 52.3 L58.6 55.7 L58.6 55.8 L58.6 55.8 L58.6 55.9 L58.7 56.0 L58.7 56.1 L58.8 56.2 L58.8 56.2 L58.9 56.3 L59.0 56.4 L59.1 56.4 L59.2 56.5 L59.2 56.5 L59.3 56.5 L60.8 56.8 Z" fill="#fff"/><path d="M29.5 10.9 L29.5 10.8 L29.6 10.7 L29.6 10.6 L29.6 10.5 L29.6 10.4 L29.6 10.3 L29.6 10.2 L29.6 10.1 L29.6 10.0 L29.6 9.9 L29.5 9.8 L29.5 9.8 L29.4 9.7 L29.3 9.6 L29.3 9.5 L29.2 9.5 L29.1 9.4 L24.6 7.0 L24.5 7.0 L24.4 7.0 L24.3 6.9 L24.2 6.9 L24.1 6.9 L24.0 6.9 L23.9 6.9 L23.9 7.0 L23.8 7.0 L23.7 7.0 L23.6 7.1 L21.1 8.7 L21.0 8.8 L20.9 8.9 L20.8 8.9 L20.8 9.0 L20.7 9.1 L20.7 9.2 L20.7 9.3 L20.6 9.4 L20.6 9.5 L20.6 9.6 L20.6 9.7 L20.6 9.8 L20.6 9.9 L20.7 9.9 L22.9 15.5 L22.9 15.6 L23.0 15.7 L23.0 15.7 L23.1 15.8 L23.2 15.9 L23.3 15.9 L23.3 16.0 L23.4 16.0 L23.5 16.1 L23.6 16.1 L25.1 16.4 L25.2 16.4 L25.3 16.4 L25.4 16.4 L25.5 16.4 L25.6 16.4 L25.7 16.4 L25.8 16.3 L25.9 16.3 L26.0 16.2 L26.1 16.1 L26.1 16.1 L26.2 16.0 L29.5 10.9 Z" fill="#fff"/><path d="M57.8 19.5 L57.8 19.5 L57.9 19.5 L58.0 19.5 L58.1 19.4 L58.2 19.4 L58.3 19.3 L58.4 19.3 L58.4 19.2 L58.5 19.1 L58.6 19.1 L58.6 19.0 L58.6 18.9 L58.7 18.8 L58.7 18.7 L58.7 18.6 L58.7 18.5 L58.7 18.4 L58.6 17.3 L58.6 17.2 L58.6 17.1 L58.6 17.0 L58.5 16.9 L58.5 16.8 L58.4 16.7 L58.3 16.7 L58.3 16.6 L58.2 16.5 L58.1 16.5 L58.0 16.4 L58.0 16.4 L57.9 16.4 L53.1 15.2 L53.0 15.2 L52.9 15.2 L52.8 15.2 L52.7 15.2 L52.6 15.2 L52.5 15.2 L52.4 15.3 L52.3 15.3 L52.2 15.4 L52.2 15.4 L52.1 15.5 L52.0 15.6 L52.0 15.7 L51.9 15.8 L51.9 15.8 L51.9 15.9 L51.3 18.4 L51.3 18.5 L51.3 18.6 L51.3 18.7 L51.3 18.8 L51.3 18.9 L51.3 19.0 L51.4 19.1 L51.4 19.2 L51.5 19.3 L51.5 19.3 L51.6 19.4 L51.7 19.5 L51.8 19.5 L51.8 19.6 L51.9 19.6 L52.0 19.6 L52.1 19.6 L52.2 19.7 L52.3 19.7 L57.8 19.5 Z" fill="#fff"/><path d="M26.0 18.1 L25.9 18.0 L25.8 17.9 L25.7 17.9 L25.7 17.8 L25.6 17.8 L25.5 17.7 L25.4 17.7 L23.2 17.2 L23.1 17.2 L23.0 17.2 L23.0 17.2 L22.9 17.2 L22.8 17.2 L22.7 17.3 L22.6 17.3 L22.5 17.3 L22.4 17.4 L19.9 19.2 L19.9 19.3 L19.8 19.3 L19.7 19.4 L19.7 19.5 L19.6 19.6 L19.6 19.7 L19.6 19.8 L19.5 19.9 L19.5 20.0 L19.5 20.1 L19.5 20.2 L19.6 20.2 L20.2 23.2 L20.2 23.3 L20.3 23.4 L20.3 23.5 L20.4 23.6 L20.4 23.6 L20.5 23.7 L20.6 23.8 L20.6 23.8 L20.7 23.9 L20.8 23.9 L20.9 24.0 L21.0 24.0 L21.1 24.0 L26.0 24.6 L26.1 24.6 L26.2 24.6 L26.3 24.6 L26.4 24.6 L26.5 24.5 L26.6 24.5 L26.7 24.4 L26.7 24.4 L26.8 24.3 L26.9 24.3 L27.0 24.2 L27.0 24.1 L27.0 24.0 L27.1 23.9 L27.1 23.8 L27.1 23.7 L27.5 20.6 L27.5 20.5 L27.5 20.4 L27.5 20.3 L27.4 20.2 L27.4 20.1 L27.4 20.0 L27.3 20.0 L27.3 19.9 L26.0 18.1 Z" fill="#fff"/><path d="M62.6 47.0 L62.5 47.1 L62.5 47.1 L62.4 47.2 L62.3 47.3 L62.3 47.3 L62.2 47.4 L62.2 47.5 L62.2 47.6 L62.2 47.7 L62.1 47.8 L62.1 47.9 L62.1 48.0 L62.2 48.1 L63.3 53.4 L63.3 53.5 L63.3 53.6 L63.4 53.7 L63.4 53.7 L63.5 53.8 L63.6 53.9 L63.6 53.9 L63.7 54.0 L63.8 54.1 L63.9 54.1 L64.0 54.1 L64.1 54.2 L64.2 54.2 L64.3 54.2 L64.4 54.2 L64.4 54.2 L64.6 54.1 L64.7 54.1 L64.8 54.1 L64.9 54.0 L64.9 54.0 L65.0 53.9 L65.1 53.9 L65.2 53.8 L65.2 53.7 L65.3 53.6 L65.3 53.5 L65.4 53.4 L65.4 53.3 L65.4 53.2 L65.4 53.1 L65.4 48.4 L65.4 48.3 L65.4 48.2 L65.4 48.1 L65.3 48.0 L65.3 47.9 L65.2 47.8 L65.2 47.7 L65.1 47.6 L65.0 47.6 L65.0 47.5 L64.9 47.5 L63.8 46.9 L63.7 46.8 L63.6 46.8 L63.5 46.8 L63.4 46.8 L63.3 46.8 L63.2 46.8 L63.1 46.8 L63.0 46.8 L62.9 46.8 L62.9 46.9 L62.8 46.9 L62.6 47.0 Z" fill="#fff"/><path d="M55.8 55.5 L55.9 55.6 L56.0 55.6 L56.1 55.6 L56.2 55.6 L56.3 55.6 L56.4 55.6 L56.5 55.5 L56.6 55.5 L56.7 55.5 L56.8 55.4 L56.9 55.4 L56.9 55.3 L57.0 55.2 L57.1 55.1 L57.1 55.1 L57.1 55.0 L57.2 54.9 L57.2 54.8 L57.2 54.7 L57.2 54.6 L57.2 54.5 L57.1 53.5 L57.1 53.4 L57.0 53.3 L57.0 53.2 L57.0 53.1 L56.9 53.0 L56.9 52.9 L56.8 52.9 L56.7 52.8 L56.6 52.8 L56.6 52.7 L56.5 52.7 L56.4 52.6 L56.3 52.6 L56.2 52.6 L56.1 52.6 L56.0 52.6 L55.9 52.6 L55.2 52.8 L55.1 52.8 L55.0 52.8 L54.9 52.9 L54.8 52.9 L54.8 53.0 L54.7 53.0 L54.6 53.1 L54.6 53.2 L54.5 53.3 L54.5 53.4 L54.4 53.5 L54.4 53.5 L54.4 53.6 L54.4 53.7 L54.4 53.8 L54.4 53.9 L54.5 54.5 L54.6 54.6 L54.6 54.7 L54.6 54.8 L54.7 54.9 L54.8 55.0 L54.8 55.0 L54.9 55.1 L55.0 55.1 L55.1 55.2 L55.1 55.2 L55.8 55.5 Z" fill="#fff"/><path d="M47.2 10.4 L47.2 10.3 L47.1 10.2 L47.1 10.1 L47.1 10.0 L47.0 10.0 L47.0 9.9 L46.9 9.8 L46.9 9.7 L46.8 9.7 L46.7 9.6 L44.4 8.0 L44.3 7.9 L44.2 7.9 L44.1 7.8 L44.0 7.8 L43.9 7.8 L43.8 7.8 L43.7 7.8 L43.6 7.8 L43.5 7.8 L43.4 7.9 L43.4 7.9 L43.3 8.0 L43.2 8.0 L39.1 11.5 L39.0 11.6 L38.9 11.6 L38.9 11.7 L38.8 11.8 L38.8 11.9 L38.8 12.0 L38.7 12.1 L38.7 12.2 L38.7 12.3 L38.7 12.4 L38.8 12.5 L38.8 12.6 L38.8 12.7 L39.7 14.6 L39.7 14.6 L39.8 14.7 L39.8 14.8 L39.9 14.9 L40.0 14.9 L40.1 15.0 L40.2 15.0 L40.2 15.1 L40.3 15.1 L40.4 15.1 L40.5 15.1 L40.6 15.1 L42.0 15.1 L42.1 15.1 L42.2 15.1 L42.2 15.0 L42.3 15.0 L42.4 15.0 L42.5 14.9 L46.7 12.2 L46.8 12.2 L46.8 12.1 L46.9 12.0 L47.0 11.9 L47.0 11.9 L47.1 11.8 L47.1 11.7 L47.1 11.6 L47.1 11.5 L47.1 11.4 L47.2 10.4 Z" fill="#fff"/><path d="M-1.0 63.6 L-1.0 63.6 L-1.1 63.7 L-1.2 63.7 L-1.2 63.8 L-1.3 63.9 L-1.3 64.0 L-1.4 64.1 L-1.4 64.2 L-1.4 64.3 L-1.4 64.4 L-1.4 64.5 L-1.4 64.6 L-1.4 64.7 L-1.4 64.8 L-1.3 64.9 L-1.3 64.9 L-1.2 65.0 L-1.1 65.1 L-1.1 65.2 L-1.0 65.2 L-0.9 65.3 L-0.8 65.3 L-0.7 65.4 L-0.6 65.4 L-0.5 65.4 L-0.4 65.4 L3.8 65.4 L3.9 65.4 L4.0 65.4 L4.1 65.4 L4.2 65.3 L4.2 65.3 L4.3 65.2 L4.4 65.2 L4.5 65.1 L4.5 65.0 L4.6 64.9 L4.7 64.9 L4.7 64.8 L4.7 64.7 L4.7 64.6 L4.8 64.5 L4.8 64.4 L4.8 64.3 L4.7 64.2 L4.7 64.1 L4.7 64.0 L4.6 63.9 L4.6 63.8 L4.5 63.7 L3.0 62.0 L2.9 62.0 L2.8 61.9 L2.8 61.9 L2.7 61.8 L2.6 61.8 L2.5 61.7 L2.4 61.7 L2.3 61.7 L2.2 61.7 L2.1 61.7 L2.0 61.8 L1.9 61.8 L1.8 61.8 L1.7 61.9 L-1.0 63.6 Z" fill="#fff"/><path d="M2.6 55.9 L2.7 55.9 L2.8 55.9 L2.9 55.9 L3.0 55.9 L3.1 55.9 L3.2 55.9 L3.3 55.9 L3.4 55.8 L3.5 55.8 L3.5 55.7 L5.4 54.4 L5.5 54.3 L5.6 54.3 L5.7 54.2 L5.7 54.1 L5.8 54.0 L5.8 53.9 L5.8 53.8 L5.9 53.7 L5.9 53.6 L5.9 53.5 L5.9 53.4 L5.8 53.3 L5.8 53.2 L4.2 48.5 L4.1 48.4 L4.1 48.3 L4.0 48.2 L4.0 48.2 L3.9 48.1 L3.8 48.0 L3.7 48.0 L3.7 47.9 L3.6 47.9 L3.5 47.9 L-1.2 46.7 L-1.3 46.7 L-1.4 46.7 L-1.5 46.7 L-1.6 46.7 L-1.7 46.7 L-1.8 46.8 L-1.8 46.8 L-1.9 46.9 L-2.0 46.9 L-2.1 47.0 L-2.2 47.1 L-2.2 47.1 L-2.3 47.2 L-2.3 47.3 L-2.4 47.4 L-2.4 47.5 L-2.4 47.6 L-2.4 47.7 L-2.4 53.3 L-2.4 53.4 L-2.4 53.5 L-2.4 53.6 L-2.3 53.7 L-2.3 53.8 L-2.2 53.8 L-2.2 53.9 L-2.1 54.0 L-2.0 54.1 L-1.9 54.1 L-1.8 54.2 L-1.8 54.2 L2.6 55.9 Z" fill="#fff"/><path d="M53.9 63.3 L53.9 63.4 L53.8 63.5 L53.8 63.6 L53.8 63.7 L53.8 63.8 L53.7 63.8 L53.7 63.9 L53.8 64.0 L53.8 64.1 L53.8 64.2 L53.8 64.3 L53.9 64.4 L53.9 64.5 L54.0 64.6 L54.1 64.6 L54.1 64.7 L54.2 64.7 L54.3 64.8 L54.4 64.8 L54.5 64.9 L54.6 64.9 L56.2 65.2 L56.3 65.2 L56.4 65.2 L56.5 65.2 L56.6 65.2 L56.7 65.1 L56.8 65.1 L56.9 65.1 L57.0 65.0 L57.1 65.0 L61.5 61.1 L61.5 61.1 L61.6 61.0 L61.7 60.9 L61.7 60.8 L61.8 60.7 L62.0 59.9 L62.1 59.8 L62.1 59.7 L62.1 59.6 L62.1 59.5 L62.1 59.4 L62.1 59.3 L62.0 59.2 L62.0 59.1 L61.8 58.7 L61.8 58.6 L61.7 58.5 L61.6 58.4 L61.6 58.4 L61.5 58.3 L61.4 58.2 L61.3 58.2 L61.2 58.1 L61.1 58.1 L58.8 57.6 L58.7 57.6 L58.6 57.6 L58.5 57.6 L58.4 57.6 L58.3 57.6 L58.2 57.7 L58.1 57.7 L58.1 57.8 L58.0 57.8 L57.9 57.9 L57.8 57.9 L57.8 58.0 L53.9 63.3 Z" fill="#fff"/><path d="M30.7 29.1 L30.6 29.1 L30.5 29.1 L30.5 29.2 L30.4 29.2 L30.3 29.3 L30.2 29.4 L30.2 29.5 L30.1 29.5 L30.1 29.6 L30.0 29.7 L30.0 29.8 L30.0 29.9 L30.0 30.0 L30.0 30.4 L30.0 30.5 L30.0 30.6 L30.0 30.7 L30.0 30.8 L30.1 30.9 L30.1 31.0 L32.7 35.4 L32.8 35.5 L32.9 35.6 L32.9 35.7 L33.0 35.8 L33.1 35.8 L33.2 35.9 L35.6 36.9 L35.7 36.9 L35.8 36.9 L35.9 37.0 L36.0 37.0 L36.1 37.0 L36.2 37.0 L36.3 36.9 L36.4 36.9 L36.9 36.7 L37.0 36.6 L37.1 36.6 L37.2 36.5 L37.3 36.5 L39.9 33.8 L39.9 33.8 L40.0 33.7 L40.0 33.6 L40.1 33.5 L40.1 33.4 L40.1 33.3 L40.2 33.2 L40.2 33.1 L40.2 33.0 L40.1 32.9 L40.1 32.9 L40.1 32.8 L40.1 32.7 L40.0 32.6 L39.9 32.5 L39.9 32.4 L39.8 32.4 L39.7 32.3 L39.6 32.3 L39.6 32.2 L32.0 29.0 L31.9 28.9 L31.9 28.9 L31.8 28.9 L31.7 28.9 L31.6 28.9 L31.5 28.9 L31.4 28.9 L30.7 29.1 Z" fill="#fff"/><path d="M16.3 27.1 L16.4 27.2 L16.5 27.2 L16.6 27.2 L16.7 27.3 L16.7 27.3 L16.9 27.3 L17.0 27.3 L17.1 27.3 L17.1 27.2 L17.2 27.2 L17.3 27.2 L17.4 27.1 L17.5 27.0 L17.6 27.0 L17.6 26.9 L17.7 26.8 L19.0 24.7 L19.1 24.6 L19.1 24.5 L19.1 24.4 L19.2 24.3 L19.2 24.2 L19.2 24.1 L19.2 24.0 L19.2 23.9 L18.4 20.6 L18.4 20.5 L18.3 20.4 L18.3 20.3 L18.2 20.2 L18.2 20.2 L18.1 20.1 L18.1 20.0 L18.0 20.0 L17.9 19.9 L17.8 19.9 L17.7 19.9 L17.6 19.8 L17.5 19.8 L13.8 19.4 L13.7 19.4 L13.6 19.4 L13.5 19.4 L13.4 19.4 L13.3 19.4 L13.3 19.5 L13.2 19.5 L13.1 19.6 L13.1 19.6 L13.0 19.7 L12.9 19.7 L12.9 19.8 L12.8 19.9 L12.8 20.0 L12.7 20.0 L12.7 20.1 L12.7 20.2 L12.7 20.3 L12.7 20.4 L12.7 24.1 L12.7 24.2 L12.7 24.3 L12.7 24.4 L12.8 24.5 L12.8 24.6 L12.9 24.6 L12.9 24.7 L13.0 24.8 L13.0 24.9 L13.1 24.9 L16.3 27.1 Z" fill="#fff"/><path d="M51.8 52.2 L51.8 52.2 L51.7 52.1 L51.6 52.1 L51.5 52.1 L51.4 52.1 L51.3 52.1 L51.2 52.1 L51.1 52.1 L51.0 52.1 L50.9 52.1 L50.8 52.2 L50.7 52.2 L50.7 52.3 L50.6 52.4 L50.5 52.4 L50.5 52.5 L50.4 52.6 L50.4 52.7 L50.4 52.8 L50.3 52.9 L50.3 53.0 L50.3 53.1 L50.3 53.2 L50.3 53.3 L50.9 55.7 L50.9 55.8 L50.9 55.9 L51.0 56.0 L51.0 56.1 L51.1 56.2 L51.1 56.3 L51.2 56.3 L51.3 56.4 L51.4 56.4 L51.5 56.5 L51.6 56.5 L51.7 56.5 L51.8 56.5 L51.9 56.5 L51.9 56.5 L52.0 56.5 L52.1 56.5 L52.2 56.5 L52.3 56.4 L52.4 56.4 L52.5 56.3 L52.6 56.2 L53.1 55.7 L53.2 55.6 L53.2 55.5 L53.3 55.4 L53.3 55.3 L53.4 55.2 L53.4 55.1 L53.4 55.1 L53.4 55.0 L53.4 54.9 L53.4 54.8 L53.1 53.3 L53.0 53.2 L53.0 53.1 L52.9 53.0 L52.9 52.9 L52.8 52.8 L52.8 52.8 L52.7 52.7 L52.6 52.6 L51.8 52.2 Z" fill="#fff"/><path d="M34.1 27.0 L34.1 27.1 L34.0 27.1 L33.9 27.2 L33.9 27.3 L33.9 27.4 L33.8 27.5 L33.8 27.6 L33.8 27.7 L33.8 27.8 L33.8 27.9 L33.8 27.9 L33.8 28.0 L33.9 28.1 L33.9 28.2 L33.9 28.3 L34.0 28.4 L34.1 28.5 L34.1 28.5 L34.2 28.6 L34.3 28.6 L34.4 28.7 L38.8 30.6 L38.9 30.6 L39.0 30.7 L39.1 30.7 L39.2 30.7 L39.3 30.7 L39.4 30.7 L39.5 30.6 L39.6 30.6 L39.7 30.6 L39.8 30.5 L39.8 30.5 L39.9 30.4 L40.0 30.3 L40.0 30.3 L40.1 30.2 L40.1 30.1 L40.2 30.0 L40.2 29.9 L40.2 29.8 L40.2 29.7 L40.2 29.6 L40.2 29.5 L40.2 29.4 L40.2 29.3 L40.1 29.2 L40.1 29.1 L40.0 29.1 L40.0 29.0 L37.0 25.8 L36.9 25.8 L36.9 25.7 L36.8 25.6 L36.7 25.6 L36.6 25.6 L36.5 25.5 L36.4 25.5 L36.3 25.5 L36.2 25.5 L36.1 25.5 L36.0 25.5 L35.9 25.6 L35.8 25.6 L35.7 25.7 L35.6 25.7 L34.1 27.0 Z" fill="#fff"/><path d="M53.9 40.1 L53.9 40.2 L53.9 40.3 L53.9 40.4 L53.9 40.5 L53.9 40.6 L54.4 43.3 L54.4 43.4 L54.5 43.5 L54.5 43.6 L54.6 43.7 L54.6 43.7 L54.7 43.8 L54.8 43.9 L54.9 43.9 L54.9 44.0 L55.0 44.0 L60.9 46.2 L61.0 46.2 L61.1 46.3 L61.2 46.3 L61.3 46.3 L61.4 46.3 L61.5 46.3 L61.6 46.2 L61.7 46.2 L61.8 46.1 L62.4 45.7 L62.5 45.7 L62.6 45.6 L62.6 45.5 L62.7 45.5 L62.8 45.4 L62.8 45.3 L62.8 45.2 L63.2 43.9 L63.3 43.8 L63.3 43.7 L63.3 43.6 L63.3 43.5 L63.3 43.4 L63.2 43.3 L63.2 43.2 L63.2 43.1 L63.1 43.0 L63.1 42.9 L63.0 42.9 L56.7 36.6 L56.6 36.5 L56.5 36.5 L56.4 36.4 L56.3 36.4 L56.3 36.4 L56.2 36.3 L56.1 36.3 L56.0 36.3 L55.9 36.3 L55.8 36.3 L55.7 36.4 L55.6 36.4 L55.5 36.4 L55.4 36.5 L55.3 36.5 L55.3 36.6 L55.2 36.7 L55.1 36.7 L55.1 36.8 L55.1 36.9 L55.0 37.0 L53.9 40.1 Z" fill="#fff"/><path d="M36.2 51.1 L36.3 51.1 L36.4 51.2 L36.5 51.2 L36.6 51.2 L36.7 51.2 L36.8 51.2 L36.9 51.1 L39.2 50.5 L39.2 50.5 L39.3 50.4 L39.4 50.4 L39.5 50.3 L39.6 50.3 L39.6 50.2 L39.7 50.1 L39.7 50.0 L39.8 50.0 L39.8 49.9 L39.8 49.8 L39.9 49.7 L39.9 49.6 L40.0 47.0 L40.0 46.9 L40.0 46.8 L40.0 46.7 L40.0 46.7 L39.9 46.6 L39.9 46.5 L39.8 46.4 L39.8 46.3 L39.7 46.2 L39.6 46.2 L39.5 46.1 L39.5 46.1 L39.4 46.0 L39.3 46.0 L37.5 45.6 L37.4 45.6 L37.3 45.6 L37.2 45.6 L37.1 45.6 L37.0 45.6 L36.9 45.6 L36.8 45.7 L36.7 45.7 L36.7 45.8 L36.6 45.8 L36.5 45.9 L36.5 46.0 L36.4 46.1 L36.4 46.2 L36.3 46.3 L35.2 49.7 L35.2 49.8 L35.2 49.9 L35.2 50.0 L35.2 50.1 L35.2 50.2 L35.2 50.3 L35.2 50.4 L35.3 50.4 L35.3 50.5 L35.4 50.6 L35.4 50.7 L35.5 50.8 L35.6 50.8 L35.7 50.9 L35.8 50.9 L36.2 51.1 Z" fill="#fff"/><path d="M37.0 1.5 L37.0 1.6 L37.0 1.7 L37.0 1.8 L37.0 1.9 L37.0 2.0 L37.1 2.1 L37.1 2.1 L37.2 2.2 L37.2 2.3 L37.3 2.4 L37.4 2.4 L37.4 2.5 L37.5 2.5 L37.6 2.6 L37.7 2.6 L37.8 2.6 L37.9 2.7 L38.0 2.7 L38.1 2.7 L38.2 2.6 L41.0 2.1 L41.1 2.1 L41.2 2.0 L41.3 2.0 L41.4 1.9 L41.4 1.9 L41.5 1.8 L41.6 1.7 L41.6 1.7 L41.7 1.6 L41.7 1.5 L41.8 1.4 L41.8 1.3 L41.8 1.2 L41.8 1.1 L41.8 1.0 L41.8 0.9 L41.8 0.8 L41.7 0.7 L41.7 0.6 L40.9 -0.7 L40.9 -0.8 L40.8 -0.9 L40.8 -0.9 L40.7 -1.0 L40.6 -1.0 L40.5 -1.1 L40.5 -1.1 L40.4 -1.2 L40.3 -1.2 L40.2 -1.2 L40.1 -1.2 L40.0 -1.2 L38.3 -1.1 L38.2 -1.1 L38.1 -1.1 L38.0 -1.0 L37.9 -1.0 L37.8 -0.9 L37.7 -0.9 L37.6 -0.8 L37.6 -0.7 L37.5 -0.7 L37.4 -0.6 L37.4 -0.5 L37.4 -0.4 L37.3 -0.3 L37.0 1.5 Z" fill="#fff"/><path d="M50.3 48.4 L50.3 48.5 L50.2 48.6 L50.2 48.6 L50.1 48.7 L50.1 48.8 L50.0 48.9 L50.0 49.0 L50.0 49.1 L50.0 49.2 L50.0 49.3 L50.0 49.4 L50.1 49.5 L50.1 49.6 L50.2 49.7 L50.2 49.7 L50.3 49.8 L50.3 49.9 L50.4 50.0 L50.5 50.0 L53.3 51.7 L53.4 51.7 L53.4 51.7 L53.5 51.8 L53.6 51.8 L53.7 51.8 L53.8 51.8 L53.9 51.8 L54.0 51.8 L56.8 51.2 L56.9 51.2 L57.0 51.1 L57.1 51.1 L57.2 51.1 L57.2 51.0 L57.3 50.9 L57.4 50.9 L59.5 48.4 L59.6 48.4 L59.6 48.3 L59.7 48.2 L59.7 48.1 L59.7 48.0 L59.8 47.9 L59.8 47.8 L59.8 47.7 L59.8 47.6 L59.7 47.5 L59.7 47.4 L59.7 47.3 L59.6 47.3 L59.6 47.2 L59.5 47.1 L59.4 47.0 L59.4 47.0 L59.3 46.9 L59.2 46.9 L59.1 46.8 L54.7 45.2 L54.6 45.2 L54.5 45.1 L54.4 45.1 L54.3 45.1 L54.2 45.1 L54.1 45.1 L54.0 45.2 L53.9 45.2 L53.8 45.3 L53.7 45.3 L53.7 45.4 L50.3 48.4 Z" fill="#fff"/><path d="M28.8 29.5 L28.8 29.4 L28.8 29.3 L28.8 29.2 L28.8 29.1 L28.7 29.0 L28.7 28.9 L28.6 28.8 L28.6 28.8 L28.5 28.7 L28.4 28.6 L28.3 28.6 L28.3 28.5 L28.2 28.5 L28.1 28.5 L28.0 28.4 L27.9 28.4 L27.8 28.4 L27.7 28.4 L27.6 28.4 L27.5 28.5 L19.6 31.0 L19.5 31.1 L19.4 31.1 L19.3 31.1 L19.3 31.2 L19.2 31.3 L19.1 31.3 L19.1 31.4 L19.0 31.5 L19.0 31.6 L18.9 31.7 L18.9 31.8 L18.9 31.9 L18.9 32.0 L18.9 32.1 L18.9 32.1 L18.9 32.2 L19.0 32.4 L19.0 32.5 L19.1 32.6 L19.1 32.7 L19.2 32.8 L19.2 32.9 L19.3 32.9 L19.4 33.0 L19.5 33.0 L19.5 33.1 L19.6 33.1 L19.7 33.1 L19.8 33.2 L19.9 33.2 L20.0 33.2 L25.6 32.8 L25.7 32.8 L25.8 32.8 L25.9 32.7 L26.0 32.7 L26.1 32.6 L26.2 32.6 L28.4 30.8 L28.5 30.8 L28.5 30.7 L28.6 30.6 L28.6 30.5 L28.7 30.5 L28.7 30.4 L28.7 30.3 L28.8 30.2 L28.8 30.1 L28.8 29.5 Z" fill="#fff"/></g><rect x="0.5" y="0.5" width="62" height="62" fill="none" stroke="#000" stroke-width="1" shape-rendering="crispEdges"/></svg>
<div class="lb" style="left:-6.300000000000011px;top:498px;color:#0f760f;transform:scaleX(0.92)">Component</div>
<div class="lb" style="left:100.69999999999999px;top:498px;color:#0f760f;transform:scaleX(0.92)">Concrete Block HF</div>
<div class="lb" style="left:207.7px;top:498px;color:#000;transform:scaleX(0.92)">Crushed Stone</div>
<div style="position:absolute;left:1px;top:321px;width:106px;height:115px;border:1px solid #0078d7;border-radius:2px;box-sizing:border-box"></div>
<div style="position:absolute;left:2px;top:322px;width:104px;height:113px;border:1px dotted #1a1a1a;box-sizing:border-box"></div>
</div>
<div style="position:absolute;left:190px;top:525px;width:372px;height:1px;background:#a0a0a0"></div>
<div class="bc" style="left:524px;top:526px;transform:scaleX(0.859)">37 Items</div>
<div style="position:absolute;left:570px;top:4px;width:165px;height:278px;background:#fff;border:1px solid #a0a0a0;box-sizing:border-box"></div>
<div class="nm" style="left:573px;top:6px">Name: Block (UK) Stretche..</div>
<svg style="position:absolute;left:573px;top:63px" width="160" height="165"><rect x="0" y="0" width="160" height="165" fill="#fff"/><rect x="0" y="5" width="160" height="1" fill="#474747"/><rect x="0" y="16" width="160" height="1" fill="#474747"/><rect x="0" y="27" width="160" height="1" fill="#474747"/><rect x="0" y="38" width="160" height="1" fill="#474747"/><rect x="0" y="49" width="160" height="1" fill="#474747"/><rect x="0" y="60" width="160" height="1" fill="#474747"/><rect x="0" y="71" width="160" height="1" fill="#474747"/><rect x="0" y="82" width="160" height="1" fill="#474747"/><rect x="0" y="93" width="160" height="1" fill="#474747"/><rect x="0" y="104" width="160" height="1" fill="#474747"/><rect x="0" y="115" width="160" height="1" fill="#474747"/><rect x="0" y="126" width="160" height="1" fill="#474747"/><rect x="0" y="137" width="160" height="1" fill="#474747"/><rect x="0" y="148" width="160" height="1" fill="#474747"/><rect x="0" y="159" width="160" height="1" fill="#474747"/><rect x="0" y="0" width="160" height="1" fill="#808080"/><rect x="0" y="0" width="1" height="165" fill="#808080"/><rect x="0" y="164" width="160" height="1" fill="#474747"/><rect x="5" y="0" width="1" height="5" fill="#474747"/><rect x="27" y="0" width="1" height="5" fill="#474747"/><rect x="49" y="0" width="1" height="5" fill="#474747"/><rect x="71" y="0" width="1" height="5" fill="#474747"/><rect x="93" y="0" width="1" height="5" fill="#474747"/><rect x="115" y="0" width="1" height="5" fill="#474747"/><rect x="137" y="0" width="1" height="5" fill="#474747"/><rect x="159" y="0" width="1" height="5" fill="#474747"/><rect x="16" y="5" width="1" height="11" fill="#474747"/><rect x="38" y="5" width="1" height="11" fill="#474747"/><rect x="60" y="5" width="1" height="11" fill="#474747"/><rect x="82" y="5" width="1" height="11" fill="#474747"/><rect x="104" y="5" width="1" height="11" fill="#474747"/><rect x="126" y="5" width="1" height="11" fill="#474747"/><rect x="148" y="5" width="1" height="11" fill="#474747"/><rect x="5" y="16" width="1" height="11" fill="#474747"/><rect x="27" y="16" width="1" height="11" fill="#474747"/><rect x="49" y="16" width="1" height="11" fill="#474747"/><rect x="71" y="16" width="1" height="11" fill="#474747"/><rect x="93" y="16" width="1" height="11" fill="#474747"/><rect x="115" y="16" width="1" height="11" fill="#474747"/><rect x="137" y="16" width="1" height="11" fill="#474747"/><rect x="159" y="16" width="1" height="11" fill="#474747"/><rect x="16" y="27" width="1" height="11" fill="#474747"/><rect x="38" y="27" width="1" height="11" fill="#474747"/><rect x="60" y="27" width="1" height="11" fill="#474747"/><rect x="82" y="27" width="1" height="11" fill="#474747"/><rect x="104" y="27" width="1" height="11" fill="#474747"/><rect x="126" y="27" width="1" height="11" fill="#474747"/><rect x="148" y="27" width="1" height="11" fill="#474747"/><rect x="5" y="38" width="1" height="11" fill="#474747"/><rect x="27" y="38" width="1" height="11" fill="#474747"/><rect x="49" y="38" width="1" height="11" fill="#474747"/><rect x="71" y="38" width="1" height="11" fill="#474747"/><rect x="93" y="38" width="1" height="11" fill="#474747"/><rect x="115" y="38" width="1" height="11" fill="#474747"/><rect x="137" y="38" width="1" height="11" fill="#474747"/><rect x="159" y="38" width="1" height="11" fill="#474747"/><rect x="16" y="49" width="1" height="11" fill="#474747"/><rect x="38" y="49" width="1" height="11" fill="#474747"/><rect x="60" y="49" width="1" height="11" fill="#474747"/><rect x="82" y="49" width="1" height="11" fill="#474747"/><rect x="104" y="49" width="1" height="11" fill="#474747"/><rect x="126" y="49" width="1" height="11" fill="#474747"/><rect x="148" y="49" width="1" height="11" fill="#474747"/><rect x="5" y="60" width="1" height="11" fill="#474747"/><rect x="27" y="60" width="1" height="11" fill="#474747"/><rect x="49" y="60" width="1" height="11" fill="#474747"/><rect x="71" y="60" width="1" height="11" fill="#474747"/><rect x="93" y="60" width="1" height="11" fill="#474747"/><rect x="115" y="60" width="1" height="11" fill="#474747"/><rect x="137" y="60" width="1" height="11" fill="#474747"/><rect x="159" y="60" width="1" height="11" fill="#474747"/><rect x="16" y="71" width="1" height="11" fill="#474747"/><rect x="38" y="71" width="1" height="11" fill="#474747"/><rect x="60" y="71" width="1" height="11" fill="#474747"/><rect x="82" y="71" width="1" height="11" fill="#474747"/><rect x="104" y="71" width="1" height="11" fill="#474747"/><rect x="126" y="71" width="1" height="11" fill="#474747"/><rect x="148" y="71" width="1" height="11" fill="#474747"/><rect x="5" y="82" width="1" height="11" fill="#474747"/><rect x="27" y="82" width="1" height="11" fill="#474747"/><rect x="49" y="82" width="1" height="11" fill="#474747"/><rect x="71" y="82" width="1" height="11" fill="#474747"/><rect x="93" y="82" width="1" height="11" fill="#474747"/><rect x="115" y="82" width="1" height="11" fill="#474747"/><rect x="137" y="82" width="1" height="11" fill="#474747"/><rect x="159" y="82" width="1" height="11" fill="#474747"/><rect x="16" y="93" width="1" height="11" fill="#474747"/><rect x="38" y="93" width="1" height="11" fill="#474747"/><rect x="60" y="93" width="1" height="11" fill="#474747"/><rect x="82" y="93" width="1" height="11" fill="#474747"/><rect x="104" y="93" width="1" height="11" fill="#474747"/><rect x="126" y="93" width="1" height="11" fill="#474747"/><rect x="148" y="93" width="1" height="11" fill="#474747"/><rect x="5" y="104" width="1" height="11" fill="#474747"/><rect x="27" y="104" width="1" height="11" fill="#474747"/><rect x="49" y="104" width="1" height="11" fill="#474747"/><rect x="71" y="104" width="1" height="11" fill="#474747"/><rect x="93" y="104" width="1" height="11" fill="#474747"/><rect x="115" y="104" width="1" height="11" fill="#474747"/><rect x="137" y="104" width="1" height="11" fill="#474747"/><rect x="159" y="104" width="1" height="11" fill="#474747"/><rect x="16" y="115" width="1" height="11" fill="#474747"/><rect x="38" y="115" width="1" height="11" fill="#474747"/><rect x="60" y="115" width="1" height="11" fill="#474747"/><rect x="82" y="115" width="1" height="11" fill="#474747"/><rect x="104" y="115" width="1" height="11" fill="#474747"/><rect x="126" y="115" width="1" height="11" fill="#474747"/><rect x="148" y="115" width="1" height="11" fill="#474747"/><rect x="5" y="126" width="1" height="11" fill="#474747"/><rect x="27" y="126" width="1" height="11" fill="#474747"/><rect x="49" y="126" width="1" height="11" fill="#474747"/><rect x="71" y="126" width="1" height="11" fill="#474747"/><rect x="93" y="126" width="1" height="11" fill="#474747"/><rect x="115" y="126" width="1" height="11" fill="#474747"/><rect x="137" y="126" width="1" height="11" fill="#474747"/><rect x="159" y="126" width="1" height="11" fill="#474747"/><rect x="16" y="137" width="1" height="11" fill="#474747"/><rect x="38" y="137" width="1" height="11" fill="#474747"/><rect x="60" y="137" width="1" height="11" fill="#474747"/><rect x="82" y="137" width="1" height="11" fill="#474747"/><rect x="104" y="137" width="1" height="11" fill="#474747"/><rect x="126" y="137" width="1" height="11" fill="#474747"/><rect x="148" y="137" width="1" height="11" fill="#474747"/><rect x="5" y="148" width="1" height="11" fill="#474747"/><rect x="27" y="148" width="1" height="11" fill="#474747"/><rect x="49" y="148" width="1" height="11" fill="#474747"/><rect x="71" y="148" width="1" height="11" fill="#474747"/><rect x="93" y="148" width="1" height="11" fill="#474747"/><rect x="115" y="148" width="1" height="11" fill="#474747"/><rect x="137" y="148" width="1" height="11" fill="#474747"/><rect x="159" y="148" width="1" height="11" fill="#474747"/><rect x="16" y="159" width="1" height="5" fill="#474747"/><rect x="38" y="159" width="1" height="5" fill="#474747"/><rect x="60" y="159" width="1" height="5" fill="#474747"/><rect x="82" y="159" width="1" height="5" fill="#474747"/><rect x="104" y="159" width="1" height="5" fill="#474747"/><rect x="126" y="159" width="1" height="5" fill="#474747"/><rect x="148" y="159" width="1" height="5" fill="#474747"/></svg>
<div style="position:absolute;left:573px;top:253px;width:160px;height:26px;background:#99b4d3"></div>
<div style="position:absolute;left:617px;top:253px;width:1px;height:26px;background:#c6d3e3"></div>
<div style="position:absolute;left:664px;top:253px;width:1px;height:26px;background:#c6d3e3"></div>
<svg style="position:absolute;left:582px;top:255px" width="22" height="22" viewBox="0 0 22 22">
<path d="M1.5 9.5 L6.5 4.5 V1.8 H12.5 V4 L15 5 L20 9.8 L19 17.5 L11 20.5 L2.5 17.5 Z" fill="#a9bad3" stroke="#7b8eab" stroke-width="1"/>
<path d="M2.5 10 L9 4 L15.5 5.5 L9 12 Z" fill="#9fb1cc"/>
<path d="M9 12 L15.5 5.5 L19.5 10 L18.5 17 L11 20 Z" fill="#b7c5d9"/>
<rect x="8.5" y="2.5" width="3" height="6" fill="#b9c7da"/>
<rect x="5.5" y="13" width="2.5" height="4" fill="#8ea2bf"/><rect x="12" y="12.5" width="1.5" height="5" fill="#8ea2bf"/><rect x="15" y="11.5" width="1.5" height="5" fill="#8ea2bf"/>
</svg>
<svg style="position:absolute;left:627px;top:255px" width="22" height="22" viewBox="0 0 22 22">
<defs><pattern id="dots" width="2" height="2" patternUnits="userSpaceOnUse"><rect width="2" height="2" fill="#b3c2d8"/><rect width="1" height="1" fill="#9aaeca"/></pattern></defs>
<path d="M1.5 9.5 L7 3.5 V1.8 H11 V3 L19.5 9.5 L18.5 17.5 L10 20.5 L2 17 Z" fill="url(#dots)" stroke="#7b8eab" stroke-width="1"/>
<path d="M2 10 L8 4 L10 6 L10 20 L2.5 17 Z" fill="#a3b5cf"/>
<path d="M2 10 L8 4 L10 6 L4.5 12 Z" fill="#b9c7db"/>
<rect x="4" y="13" width="3" height="5" fill="#8ea2bf"/>
</svg>
<svg style="position:absolute;left:675px;top:255px" width="24" height="21" viewBox="0 0 24 21">
<path d="M0.5 7.2 Q3.5 8 6 11.5 L5 14.5 Q2.5 10.5 0.5 7.2 Z" fill="#b3c3da" stroke="#7b8eab" stroke-width="0.9"/>
<path d="M19 8.5 Q23.5 3.5 23.2 8.5 Q22.8 12 19.5 14.5" fill="none" stroke="#7b8eab" stroke-width="1.4"/>
<path d="M3.5 12 Q3.5 6.8 12 6.8 Q20.5 6.8 20.5 12 Q20 19.6 12 19.8 Q4 19.6 3.5 12 Z" fill="#b6c6de" stroke="#7b8eab" stroke-width="1"/>
<path d="M6.8 7.8 Q7.5 4 12 4 Q16.5 4 17.2 7.8 Q12 9.5 6.8 7.8 Z" fill="#c0cee3" stroke="#7b8eab" stroke-width="0.9"/>
<circle cx="11.9" cy="2.8" r="1.5" fill="#aebfd8" stroke="#7b8eab" stroke-width="0.8"/>
</svg>
<div style="position:absolute;left:570px;top:285px;width:165px;height:257px;background:#f0f0f0;border:1px solid #a0a0a0;box-sizing:border-box"></div>
<div class="nm" style="left:573px;top:287px;transform:scaleX(0.96)">Data</div>
<div style="position:absolute;left:572px;top:303px;width:162px;height:236px;background:#fff;border-top:1px solid #808080;border-left:1px solid #808080;box-sizing:border-box"></div>
<svg style="position:absolute;left:578px;top:309px" width="9" height="9" viewBox="0 0 9 9"><rect x="0.5" y="0.5" width="8" height="8" fill="#fff" stroke="#000"/><rect x="2" y="4" width="5" height="1" fill="#000"/></svg>
<div class="bc" style="left:596px;top:307px;transform:scaleX(0.873)">Tags</div>
<div class="bc" style="left:612px;top:324px;transform:scaleX(0.869)">2D Graphic</div>
<div style="position:absolute;left:-5px;top:543px;width:27px;height:26px;background:#fff;border:1px solid #86a6cc;box-sizing:border-box"></div>
<div class="lt" style="right:713px;top:549px;transform:scaleX(0.86)">tch...</div>
<div style="position:absolute;left:0px;top:572px;width:731px;height:2px;background:#7a7a7a"></div>
<div style="position:absolute;left:0px;top:574px;width:731px;height:10px;background:#fff"></div>
<div style="position:absolute;left:0px;top:574px;width:5px;height:10px;background:#d0d0d0"></div>
<div style="position:absolute;left:4px;top:574px;width:1px;height:10px;background:#000"></div>
<svg style="position:absolute;left:0;top:574px" width="5" height="10"><path d="M4 0 L0 5 M0 6 L3 10" stroke="#555" stroke-width="1" fill="none"/></svg>
<div style="position:absolute;left:517px;top:575px;width:134px;height:1px;background:#f4a0a0"></div>
<div style="position:absolute;left:517px;top:576px;width:134px;height:1px;background:#a0a0a0"></div>
<div style="position:absolute;left:517px;top:576px;width:1px;height:8px;background:#909090"></div>
<div style="position:absolute;left:517px;top:579px;width:134px;height:1px;background:#a0a0a0"></div>
<div style="position:absolute;left:651px;top:575px;width:1px;height:9px;background:#909090"></div>
<div style="position:absolute;left:678px;top:575px;width:1px;height:9px;background:#909090"></div>
<div style="position:absolute;left:714px;top:574px;width:17px;height:10px;background:#fde5c0"></div>
<svg style="position:absolute;left:463px;top:574px" width="10" height="10"><path d="M1 1 V9 M1 1 L7 7" stroke="#808080" fill="none"/></svg>
</body></html>
